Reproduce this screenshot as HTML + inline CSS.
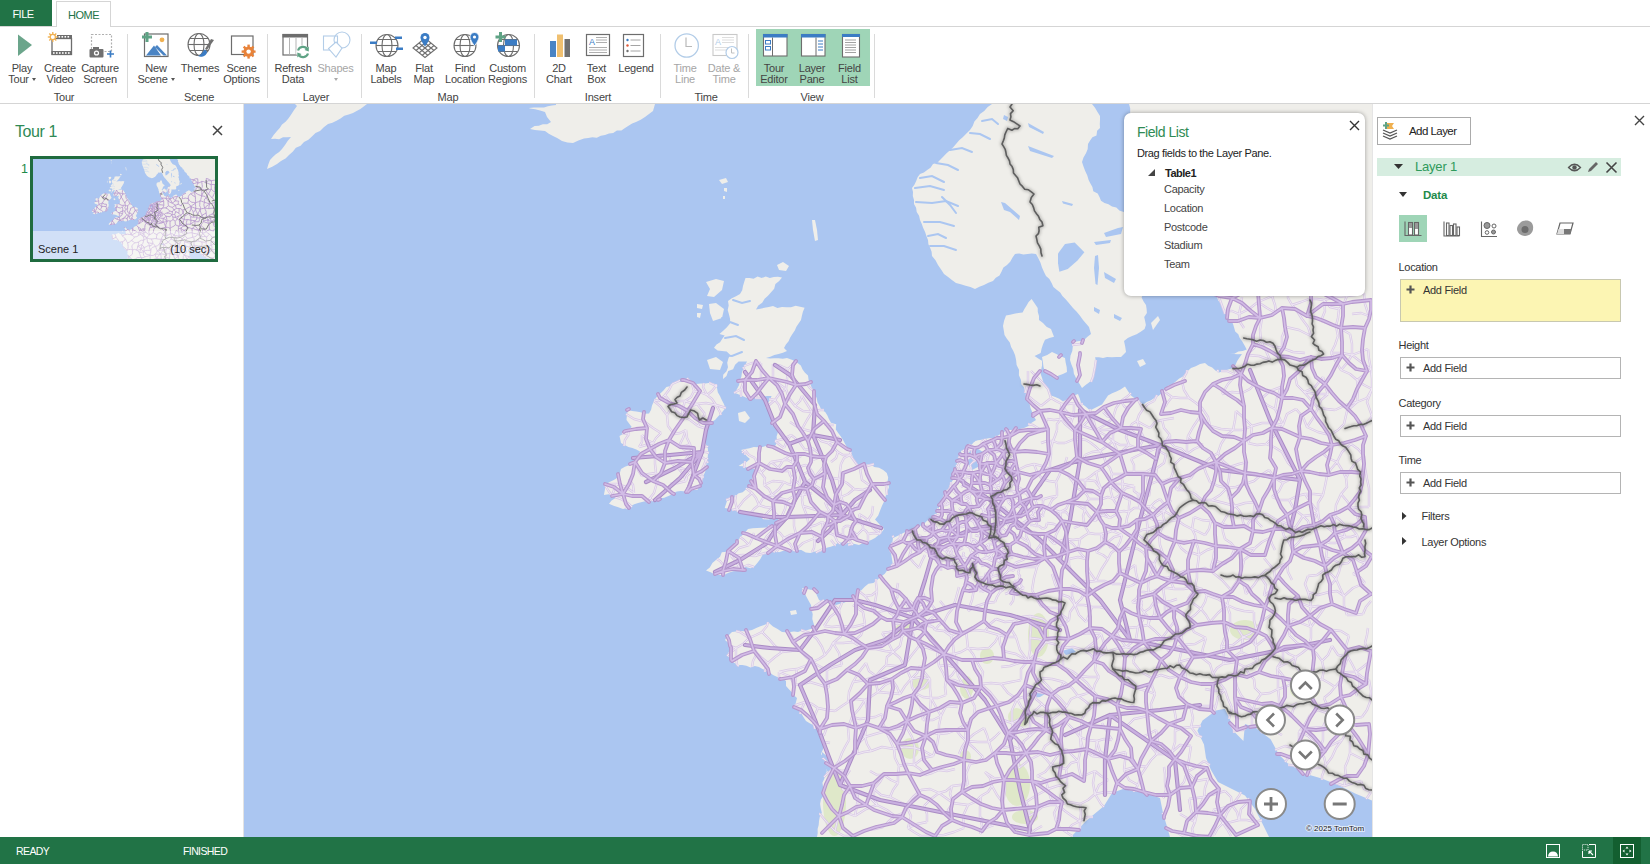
<!DOCTYPE html>
<html><head><meta charset="utf-8">
<style>
*{box-sizing:border-box;margin:0;padding:0}
html,body{width:1650px;height:864px;overflow:hidden;background:#fff;font-family:"Liberation Sans",sans-serif;color:#444}
#tabs{position:absolute;left:0;top:0;width:1650px;height:27px;border-bottom:1px solid #d5d5d5}
#file{position:absolute;left:0;top:0;width:52px;height:26px;padding-right:6px;background:#217346;color:#fff;font-size:11px;letter-spacing:-0.5px;line-height:28px;text-align:center}
#home{position:absolute;left:56px;top:1px;width:55px;height:26px;border:1px solid #d5d5d5;border-bottom:none;background:#fff;color:#217346;font-size:11px;letter-spacing:-0.5px;line-height:26px;text-align:center}
.t{position:absolute;width:100px;text-align:center;font-size:11px;line-height:11px;letter-spacing:-0.2px;color:#444;white-space:nowrap}
.dd{display:inline-block;width:0;height:0;border-left:2.5px solid transparent;border-right:2.5px solid transparent;border-top:3px solid #555;vertical-align:2px;margin-left:3px}
.dis .dd{border-top-color:#aaa}
.dis{color:#a6a6a6}
.sep{position:absolute;top:34px;width:1px;height:64px;background:#dadada}
#left{position:absolute;left:0;top:104px;width:244px;height:733px;background:#fff;border-right:1px solid #e3e3e3}
#map{position:absolute;left:244px;top:104px;width:1128px;height:733px;background:#abc6f1;overflow:hidden}
#right{position:absolute;left:1372px;top:104px;width:278px;height:733px;background:#fff;border-left:1px solid #e5e5e5}
#status{position:absolute;left:0;top:837px;width:1650px;height:27px;background:#217346;color:#fff;font-size:11px}
</style></head><body>
<div id="tabs"><div id="file">FILE</div><div id="home">HOME</div></div>
<div style="position:absolute;left:0;top:103px;width:1650px;height:1px;background:#d5d5d5"></div>
<div style="position:absolute;left:756px;top:29px;width:114px;height:57px;background:#9fd5b7"></div>
<svg style="position:absolute;left:0;top:0" width="900" height="104" viewBox="0 0 900 104">
<!-- Play -->
<polygon points="18,34.5 32,45 18,56" fill="#6ba58b"/>
<!-- Create Video -->
<g fill="none" stroke="#6d6d6d" stroke-width="1.3">
<rect x="52" y="38.5" width="19.5" height="16"/>
</g>
<rect x="57" y="35" width="15" height="3.5" fill="#6d6d6d"/><rect x="51.5" y="51" width="20.5" height="3.8" fill="#6d6d6d"/>
<g fill="#fff"><rect x="58.5" y="36" width="1.6" height="1.6"/><rect x="61.5" y="36" width="1.6" height="1.6"/><rect x="64.5" y="36" width="1.6" height="1.6"/><rect x="67.5" y="36" width="1.6" height="1.6"/>
<rect x="53" y="52.2" width="1.6" height="1.6"/><rect x="56" y="52.2" width="1.6" height="1.6"/><rect x="59" y="52.2" width="1.6" height="1.6"/><rect x="62" y="52.2" width="1.6" height="1.6"/><rect x="65" y="52.2" width="1.6" height="1.6"/><rect x="68" y="52.2" width="1.6" height="1.6"/></g>
<g stroke="#f0b050" stroke-width="1.3"><line x1="52.8" y1="32" x2="52.8" y2="42"/><line x1="47.8" y1="37" x2="57.8" y2="37"/><line x1="49.3" y1="33.5" x2="56.3" y2="40.5"/><line x1="49.3" y1="40.5" x2="56.3" y2="33.5"/></g>
<circle cx="52.8" cy="37" r="2.6" fill="#fff" stroke="#f0b050" stroke-width="1.2"/>
<!-- Capture Screen -->
<rect x="91.5" y="34.5" width="20" height="17" fill="none" stroke="#b0b0b0" stroke-width="1.2" stroke-dasharray="2 1.5"/>
<rect x="89.5" y="49" width="14" height="8.6" rx="1" fill="#707070"/><rect x="93" y="47" width="6" height="3" fill="#707070"/>
<circle cx="96.5" cy="53" r="2.6" fill="#fff"/><circle cx="96.5" cy="53" r="1.3" fill="#707070"/>
<path d="M110.5 50.5v7M107 54h7" stroke="#3b7cc4" stroke-width="1.6"/>
<!-- New Scene -->
<rect x="144.5" y="34" width="23.5" height="22.5" fill="#fff" stroke="#6d6d6d" stroke-width="1.2"/>
<path d="M146 55.5 L154 45.5 L161 55.5Z M155 47 L157 45 L167 55.5 L163.5 55.5Z" fill="#4a84c4"/>
<circle cx="162" cy="39.8" r="2.4" fill="#f0b050"/>
<path d="M147 32v10M142 37h10" stroke="#5fa385" stroke-width="3"/>
<!-- Themes -->
<g fill="none" stroke="#6d6d6d" stroke-width="1.1"><circle cx="199" cy="44.5" r="11"/><ellipse cx="199" cy="44.5" rx="5" ry="11"/><line x1="188" y1="44.5" x2="210" y2="44.5"/><path d="M190 38.5h18M190 50.5h18"/></g>
<path d="M214 40 L207 50 L205 49 L211 39Z" fill="#707070"/>
<path d="M205 49.5 C203 50,203 54,198 56 C201 58,207 56,207 51.5Z" fill="#3b7cc4"/>
<!-- Scene Options -->
<rect x="231.5" y="36" width="21.5" height="18.5" fill="none" stroke="#6d6d6d" stroke-width="1.2"/>
<circle cx="248.6" cy="51.6" r="5.2" fill="#e8833a"/>
<g stroke="#e8833a" stroke-width="2.4"><line x1="248.6" y1="44.6" x2="248.6" y2="58.6"/><line x1="241.6" y1="51.6" x2="255.6" y2="51.6"/><line x1="243.7" y1="46.7" x2="253.5" y2="56.5"/><line x1="243.7" y1="56.5" x2="253.5" y2="46.7"/></g>
<circle cx="248.6" cy="51.6" r="2.2" fill="#fff"/>
<!-- Refresh Data -->
<rect x="283" y="34.5" width="24.5" height="20.5" fill="#fff" stroke="#6d6d6d" stroke-width="1.2"/>
<rect x="282.5" y="34" width="25.5" height="3.5" fill="#6d6d6d"/>
<path d="M289.5 37.5v17M296 37.5v17M302 37.5v17" stroke="#b5b5b5" stroke-width="1"/>
<circle cx="303" cy="52" r="6.8" fill="#fff"/>
<path d="M298 50.5 A5.2 5.2 0 0 1 307.5 49.5 M308 53.5 A5.2 5.2 0 0 1 298.5 54.5" fill="none" stroke="#5fa385" stroke-width="2.2"/>
<path d="M308.8 46.5 L308.8 51.5 L304.5 50Z M297.3 57.5 L297.3 52.5 L301.5 54Z" fill="#5fa385"/>
<!-- Shapes (disabled) -->
<g fill="none" stroke="#b3cde8" stroke-width="1.1"><rect x="323.5" y="36" width="14" height="14"/><circle cx="342" cy="40" r="8"/><path d="M336 42 L342 48 L336 57 L328.5 48.5Z" fill="#fff"/></g>
<!-- Map Labels -->
<g fill="none" stroke="#6d6d6d" stroke-width="1.1"><circle cx="387" cy="45.5" r="11"/><ellipse cx="387" cy="45.5" rx="5" ry="11"/><line x1="376" y1="45.5" x2="398" y2="45.5"/><path d="M378 39.5h18M378 51.5h18"/></g>
<g fill="#3b7cc4"><rect x="395" y="36.5" width="7" height="2.5"/><rect x="370" y="41.5" width="7" height="2.5"/><rect x="396" y="47.5" width="7" height="2.5"/></g>
<!-- Flat Map -->
<g fill="#fff" stroke="#707070" stroke-width="1.1"><path d="M413 48 L425 38 L437 48 L425 57.5Z"/><path d="M416 45.5 L428 55.5 M419 43 L431 53 M422 40.5 L434 50.5 M428 40.5 L416 50.5 M431 43 L419 53 M434 45.5 L422 55.5" fill="none"/></g>
<path d="M425 33 a4.5 4.5 0 0 1 4.5 4.5 c0 3-4.5 9-4.5 9 s-4.5-6-4.5-9 a4.5 4.5 0 0 1 4.5-4.5z" fill="#3b7cc4"/><circle cx="425" cy="37.5" r="1.7" fill="#fff"/>
<!-- Find Location -->
<g fill="none" stroke="#6d6d6d" stroke-width="1.1"><circle cx="465" cy="45.5" r="11"/><ellipse cx="465" cy="45.5" rx="5" ry="11"/><line x1="454" y1="45.5" x2="476" y2="45.5"/><path d="M456 39.5h18M456 51.5h18"/></g>
<path d="M474.5 32.5 a4.5 4.5 0 0 1 4.5 4.5 c0 3-4.5 9-4.5 9 s-4.5-6-4.5-9 a4.5 4.5 0 0 1 4.5-4.5z" fill="#3b7cc4" stroke="#fff" stroke-width="0.8"/><circle cx="474.5" cy="37" r="1.6" fill="#fff"/>
<!-- Custom Regions -->
<g fill="none" stroke="#6d6d6d" stroke-width="1.1"><circle cx="508.5" cy="45.5" r="11"/><ellipse cx="508.5" cy="45.5" rx="5" ry="11"/><line x1="497.5" y1="45.5" x2="519.5" y2="45.5"/><path d="M499.5 39.5h18M499.5 51.5h18"/></g>
<rect x="505" y="39.5" width="12" height="6" fill="#3b7cc4"/><rect x="498" y="45.5" width="7" height="6" fill="#3b7cc4"/>
<path d="M500.5 32v10M495.5 37h10" stroke="#5fa385" stroke-width="3"/>
<!-- 2D Chart -->
<rect x="550" y="41" width="6" height="16" fill="#4a84c4"/><rect x="557" y="34.5" width="6" height="22.5" fill="#f0c070"/><rect x="564.5" y="39" width="5.5" height="18" fill="#707070"/>
<!-- Text Box -->
<rect x="586.5" y="34.5" width="23" height="21" fill="#fff" stroke="#6d6d6d" stroke-width="1.2"/>
<text x="589" y="45" font-size="9" fill="#3b7cc4" font-family="Liberation Sans">A</text>
<path d="M596 37.5h11M596 40h11M596 42.5h11M589 47.5h18M589 50h18M589 52.5h18" stroke="#9a9a9a" stroke-width="0.8"/>
<!-- Legend -->
<rect x="623.5" y="34.5" width="20" height="22" fill="#fff" stroke="#6d6d6d" stroke-width="1.2"/>
<circle cx="627.5" cy="40" r="1.2" fill="#3b7cc4"/><circle cx="627.5" cy="45.5" r="1.2" fill="#e05a3a"/><circle cx="627.5" cy="51" r="1.2" fill="#707070"/>
<path d="M630.5 40h10M630.5 45.5h10M630.5 51h10" stroke="#9a9a9a" stroke-width="0.9"/>
<!-- Time Line -->
<circle cx="686.7" cy="45.5" r="11.7" fill="none" stroke="#b3cde8" stroke-width="1.3"/>
<path d="M686 37.5v9h6" fill="none" stroke="#b9b9b9" stroke-width="1.2"/>
<!-- Date & Time -->
<rect x="713" y="34.5" width="24" height="21" fill="#fff" stroke="#c9c9c9" stroke-width="1.1"/>
<text x="715" y="45" font-size="9" fill="#b3cde8" font-family="Liberation Sans">A</text>
<path d="M722 37.5h12M722 40h12M722 42.5h12M715 47.5h14M715 50h12" stroke="#d5d5d5" stroke-width="0.8"/>
<circle cx="732" cy="52.5" r="6" fill="#fff" stroke="#b3cde8" stroke-width="1.2"/>
<path d="M731.5 48.5v4.5h3" fill="none" stroke="#c0c0c0" stroke-width="1"/>
<!-- Tour Editor -->
<rect x="763.5" y="34.5" width="23.5" height="21.5" fill="#fff" stroke="#6d6d6d" stroke-width="1.1"/>
<rect x="763" y="34" width="24.5" height="3.5" fill="#3b7cc4"/>
<path d="M772.5 37.5v18.5" stroke="#6d6d6d" stroke-width="1"/>
<rect x="765.5" y="40.5" width="5" height="3.5" fill="none" stroke="#3b7cc4" stroke-width="1"/><rect x="765.5" y="46.5" width="5" height="3.5" fill="none" stroke="#3b7cc4" stroke-width="1"/>
<!-- Layer Pane -->
<rect x="801.5" y="34.5" width="23.5" height="21.5" fill="#fff" stroke="#6d6d6d" stroke-width="1.1"/>
<rect x="801" y="34" width="24.5" height="3.5" fill="#3b7cc4"/>
<path d="M816 37.5v18.5" stroke="#6d6d6d" stroke-width="1"/>
<path d="M818 41h5M818 44h5M818 47h5M818 50h5" stroke="#3b7cc4" stroke-width="1"/>
<!-- Field List -->
<rect x="842.5" y="34.5" width="17" height="22.5" fill="#fff" stroke="#6d6d6d" stroke-width="1.1"/>
<rect x="842" y="34" width="18" height="3" fill="#3b7cc4"/>
<path d="M845 40h11M845 42.5h11M845 45h11M845 47.5h11M845 50h11M845 52.5h11" stroke="#8a8a8a" stroke-width="0.8"/>

</svg>
<div class="sep" style="left:127px"></div>
<div class="sep" style="left:267px"></div>
<div class="sep" style="left:361px"></div>
<div class="sep" style="left:534px"></div>
<div class="sep" style="left:660px"></div>
<div class="sep" style="left:748px"></div>
<div class="sep" style="left:874px"></div>
<div class="t" style="left:-28px;top:62.5px">Play<br>Tour<span class="dd"></span></div>
<div class="t" style="left:10px;top:62.5px">Create<br>Video</div>
<div class="t" style="left:50px;top:62.5px">Capture<br>Screen</div>
<div class="t" style="left:106px;top:62.5px">New<br>Scene<span class="dd"></span></div>
<div class="t" style="left:150px;top:62.5px">Themes<br><span class="dd" style="margin-left:0"></span></div>
<div class="t" style="left:191.5px;top:62.5px">Scene<br>Options</div>
<div class="t" style="left:243px;top:62.5px">Refresh<br>Data</div>
<div class="t dis" style="left:285.5px;top:62.5px">Shapes<br><span class="dd" style="margin-left:0"></span></div>
<div class="t" style="left:336px;top:62.5px">Map<br>Labels</div>
<div class="t" style="left:374px;top:62.5px">Flat<br>Map</div>
<div class="t" style="left:415px;top:62.5px">Find<br>Location</div>
<div class="t" style="left:457.5px;top:62.5px">Custom<br>Regions</div>
<div class="t" style="left:509px;top:62.5px">2D<br>Chart</div>
<div class="t" style="left:546.5px;top:62.5px">Text<br>Box</div>
<div class="t" style="left:586px;top:62.5px">Legend<br></div>
<div class="t dis" style="left:635px;top:62.5px">Time<br>Line</div>
<div class="t dis" style="left:674px;top:62.5px">Date &amp;<br>Time</div>
<div class="t" style="left:724px;top:62.5px">Tour<br>Editor</div>
<div class="t" style="left:762px;top:62.5px">Layer<br>Pane</div>
<div class="t" style="left:799.5px;top:62.5px">Field<br>List</div>
<div class="t" style="left:14px;top:91.5px">Tour</div>
<div class="t" style="left:149px;top:91.5px">Scene</div>
<div class="t" style="left:266px;top:91.5px">Layer</div>
<div class="t" style="left:398px;top:91.5px">Map</div>
<div class="t" style="left:548px;top:91.5px">Insert</div>
<div class="t" style="left:656px;top:91.5px">Time</div>
<div class="t" style="left:762px;top:91.5px">View</div>
<div id="left">
<div style="position:absolute;left:15px;top:18px;font-size:16px;line-height:20px;letter-spacing:-0.4px;color:#2f8a55">Tour 1</div>
<svg style="position:absolute;left:212px;top:21px" width="11" height="11" viewBox="0 0 11 11"><path d="M1 1L10 10M10 1L1 10" stroke="#444" stroke-width="1.5"/></svg>
<div style="position:absolute;left:21px;top:58px;font-size:12.5px;line-height:14px;color:#1e8a4a">1</div>
<div style="position:absolute;left:30px;top:52px;width:188px;height:106px;border:3px solid #1f6b3f;overflow:hidden;background:#abc6f1">
<svg  width="182" height="100" viewBox="240 171 1125 612" preserveAspectRatio="none" style="display:block;position:absolute;left:0;top:0">
<rect x="244" y="104" width="1128" height="733" fill="#abc6f1"/>
<polygon points="295,104 367,104 363.7,106.6 360.4,109.1 356.6,110.9 353,113 348.7,114.5 344.3,115.8 340.5,118.4 336.5,120.7 332.4,122.8 328,124 323.8,127.3 320,131 315.5,133 311.9,136.4 308.4,139.8 304,142 300.6,145.7 295.9,147.8 292.7,151.7 289,155 285.5,158.6 281,161 277,164 272.2,166.8 267,169 268.3,164.4 270,160 272.8,157.1 275.8,154.2 279.2,151.9 282,149 285,145 287.8,140.8 291,137 287,137.2 283,137.3 279.1,139.2 275,138.8 271,139 273.8,134.8 277,131 279.7,127.9 282,124.6 285.3,122 288,119 291,114.7 293.9,110.3 297,106" fill="#efeeea"/>
<polygon points="529,108 534,107.4 539,107.6 544,107.6 547.9,106.3 551.9,105.4 556,105 556,104 655,104 653,111 649,113.9 645,117 640.7,119.8 636,122 632.1,123.6 628.5,125.8 625,128 621.4,130.6 616.9,130.6 613.2,132.9 609,133.6 605,135 600.8,135.7 596.8,137.7 592.4,137.2 588.2,138 584,138.5 578.4,140.4 573,143 567.4,142.4 562,141 557.6,138.3 553,136 548.8,133.8 545,131 540,130.5 534.9,130 530,129 534.5,126 538.8,125.7 542.8,124.3 547.2,124.2 551,122 547,117 545,112 540.1,110.5 535.1,109.3 530,108.5" fill="#efeeea"/>
<polygon points="992,104 987.7,107 984.2,110.9 980,114 977.5,118 974.4,121.6 972.7,126.1 970,130 966.4,133.4 963,137 959.2,140.2 956,144 953,147.4 949.7,150.5 946.3,153.5 943.2,156.8 940,160 937,162.9 933,164.1 930.5,167.8 927.2,170.1 923.9,172.4 920,174 917.6,177.3 916.2,181.1 914.4,184.7 912,188 913,191.9 912.8,196 914,199.9 914,204 916.1,207.8 916.7,212.1 919.1,215.8 920,220 921.8,223.9 923.2,228 925.1,231.9 926.4,236 928,240 928.4,244.2 930.2,247.9 931.6,251.8 932,256 935.5,260.2 938,265 941.1,269.5 944,274 948.1,276.9 951.9,280.1 956,283 960.8,284.2 965.6,285.7 970.4,287.1 975,289 979.4,286.7 984,285.1 988.4,282.8 993,281 995.8,277.8 999.5,275.4 1001.6,271.6 1003.4,267.5 1007,265 1010.2,261.7 1012.4,257.8 1015,254 1019.2,253.4 1023.4,254.6 1027.6,254 1031.8,253.6 1036,254 1038.3,258.3 1040.5,262.8 1042,267.5 1044,272 1046,276 1049.4,279.1 1051.6,283 1053.4,287.1 1057,290 1060.2,292.6 1062.4,296.1 1065.4,298.9 1068,302 1073,308 1076.7,311.7 1080,315.7 1083,320 1086,323.5 1089,327 1091,334 1087.2,336.9 1083.8,340.2 1080,343 1078,347.5 1076,352 1079.6,353.9 1083.3,355.4 1087,357 1091,357.5 1095,357.3 1099,357.3 1103,358.1 1107,357 1111.7,357.3 1116.3,357.1 1121,357 1126,352 1125.2,346.5 1124,341 1127.8,338 1132.1,336 1136.6,334.3 1140.7,331.8 1144.6,329 1145.9,325.1 1145.1,321 1144.2,316.9 1146.9,313.1 1146.6,309 1146,305 1143.6,301.4 1141.6,297.5 1143.4,293.1 1141.4,288.9 1138.6,284.6 1140.4,280.2 1140.1,275.9 1143,271.5 1139.5,267.3 1140.1,263 1139.9,258.6 1139.6,254.3 1140,250 1137.4,246.6 1137,242.3 1136.4,238.1 1134.3,234.5 1130.9,231.4 1129.1,227.8 1128.9,223.3 1126.4,219.9 1124.9,216.1 1124,212 1119.7,210.7 1116.3,207.6 1112,206.4 1108.5,204.2 1104.5,203 1101,200.8 1099.5,197 1097.7,193.4 1093.3,191.3 1092.4,187.1 1090.4,183.6 1088.6,180 1087.3,175.4 1085.2,171 1083.5,166.5 1082,162 1083.5,157.5 1086,153.3 1087.7,148.9 1088,144 1090.1,140.6 1092.4,137.3 1096.5,135.4 1097.1,130.8 1100,128 1099.8,124 1100,120 1100,116 1097.5,111.9 1095,107.8 1092,104" fill="#efeeea"/>
<polygon points="1129,104 1372,104 1372,837 817,837 817.7,833 817.6,828.9 818.7,825 819,821 819.8,816.7 821.8,812.7 820.7,808.1 820.1,803.7 820.9,799.4 823.7,795.5 823,791 823.1,786.9 822.4,782.7 824.2,778.9 825.3,775 826.9,771.1 825.6,766.9 827,763 824.2,758.4 821,754 823.3,748.6 825,743 823.8,738.5 823,734 819.5,731.5 816.9,727.9 813.5,725.3 809.7,723.2 806,721 803.4,717.1 801,713.1 797.7,709.8 795,706 796,702 797,698 793.9,695.3 791.5,692 788.7,689 786,686 786,681 782.2,677.9 777.3,677.1 773,675 769.8,672.5 766.3,670.4 762.5,669.1 759,667 754.9,665.9 750.5,667.6 746.4,665.7 742.3,664.9 738,665 733.6,662.5 730.3,658.7 727,655 729.8,650.7 732,646 728.5,643.1 725,640 728.2,635.8 732,632 736,631.4 740,630.9 744,631.2 748,630.7 752,630 756.2,628.1 760.4,626.2 764.7,624.7 769,623 773,626.5 777.6,629.1 782,632 786,632.3 790,631.9 794,631.4 798,632 802.2,630.6 806.6,630.3 810.8,629.1 815,628 813.6,623.5 812.3,619 812.7,614.2 811.6,609.6 811,605 808.6,600.8 806.3,596.6 804.4,592.2 802,588 806.3,588.8 810.6,589.7 815,590 816.7,595.1 819,600 823.1,601.9 827.4,602.9 831.8,603.6 836,605 840,603.7 844.1,602.7 848,601.1 852,600 854.6,596.1 857,592 861.4,590.3 864.7,586.7 868.4,583.7 873.4,583.1 877,580 880.8,576.8 884.8,573.8 887.7,569.7 892,567 892.6,562.7 891.9,558.5 891.2,554.3 891,550 891.5,546 892.4,542 893,538 896.8,536.3 900.5,534.6 904.1,532.6 908.5,532.3 912,530 916,528 920,526 924,524.1 927.3,520.6 932,520 934.6,516.6 937,513 938.3,508.9 939.9,504.9 941.5,501 943,497 945,492.5 948.4,488.8 950.1,484 953,480 953.5,475.6 954.6,471.4 956.1,467.3 957,463 959.7,458.1 962,453 964.8,450 967.5,447 971.4,445.1 974,442 978.1,440.5 982.5,441.2 986.6,439.6 990.7,438.4 995,438 998.8,435.1 1003.1,432.8 1007,430 1011.3,430 1015.5,428.9 1019.8,429 1024,428 1028.5,426.1 1032,422.6 1036,420 1033.6,416.1 1032.2,412 1030.5,407.9 1029.5,403.5 1028,399.4 1027,395 1024.9,391.5 1024.2,387.4 1021.3,384.2 1021,380 1018.9,375.2 1019,369.7 1016.6,365 1016.1,360 1015,355 1013.2,350.8 1011.1,346.9 1009.8,342.4 1006.9,338.8 1004.5,335 1003.8,330.5 1003,326 1004.1,320.7 1006,315.6 1010.1,314.8 1014.2,313.7 1018.4,313 1022.6,312.6 1024.4,308.9 1026.6,305.5 1028.6,302 1031.6,299 1034.7,303.4 1037.7,308 1037.8,312 1039,315.9 1039,320 1043,322.9 1046.5,326.7 1051,329 1052.5,332.9 1054,336.7 1049.4,337.9 1045,339.7 1043.1,344 1041.6,348.4 1040.7,353 1034.6,356 1038.2,358.6 1042,360.8 1042.1,365.3 1041.2,369.6 1040.7,374 1042.3,378.7 1043.7,383.4 1046.7,387.1 1048.7,391.3 1051,395.4 1055.2,396.9 1059.3,398.8 1063,401.4 1066.8,399.6 1070.5,397.7 1074.1,395.5 1078,394 1079.8,398.4 1081,403 1085.6,406.6 1090,410.5 1093.9,408.4 1097.9,406.4 1102,404.5 1105,399.9 1108,395.4 1112.1,393.2 1116.4,391.5 1120.5,389.4 1125,386.4 1127.9,391 1131,395.4 1134.9,398.6 1139.2,401.2 1143,404.5 1146.8,402 1151,400.3 1154.7,397.8 1158.7,395.7 1162.2,392.8 1164.8,388.8 1168.2,385.8 1172.6,384 1175.8,381.5 1178.9,378.8 1182.5,376.8 1185.2,373.7 1188,370.8 1191,368 1195.7,366.3 1200.1,364.1 1205,363 1208.2,365.8 1212.2,367.5 1215.4,370.4 1219,372.6 1223.6,371.1 1228.2,369.6 1232.8,368 1235.5,364.7 1237.2,360.9 1239.5,357.4 1242,354 1238,354.3 1234,354.1 1230,354 1234.4,353.7 1238.3,351.5 1242.7,351.1 1246.7,349.4 1244.6,345.4 1242.3,341.6 1239.7,338 1238.3,334.2 1235.2,331.4 1234.1,327.4 1232.9,323.4 1229.5,320.7 1228,317 1225.7,312.8 1223,308.8 1221.4,304.3 1218.2,300.6 1216.6,296 1216.2,290.9 1210.9,289.8 1206.6,287.8 1208.6,280.9 1204.9,278.5 1201.6,275.7 1199,272.4 1195.2,270.1 1192.8,266.7 1191.5,262.3 1189.1,258.8 1186.5,255.5 1182.9,253.1 1180,250 1176.8,247.4 1174.7,244 1174.2,239.3 1172.2,235.8 1167,234.8 1164.3,231.8 1164.4,226.6 1161.1,224.1 1158.5,221 1153,220.3 1151.9,216.1 1149.2,213.1 1147.8,209.1 1142.5,208.3 1144.4,201.6 1140,200 1139.5,195.7 1138.8,191.5 1135.5,187.9 1136.3,183.3 1137.4,178.7 1132.1,175.5 1134,170.7 1133.7,166.4 1130.7,162.7 1132.1,158.1 1129.4,154.3 1129,150 1130.7,145.8 1129.7,141.6 1129.3,137.5 1131.8,133.3 1130.1,129.1 1130.8,124.9 1127.4,120.7 1128.1,116.5 1130.2,112.4 1130.2,108.2" fill="#efeeea"/>
<polygon points="745.5,278 749.6,277.9 753.6,278.7 757.6,276.6 761.7,278 765.8,276.4 769.8,278 773.9,277 777.9,276.8 782,277.4 779.2,281 775.4,284 774.2,288.8 771.1,292.3 768,295.7 764.6,298.8 762.2,302.8 758.3,305.4 756,309.5 760.3,308.7 764.5,307.8 768.8,307.1 773,306 777.4,307.9 782,307.1 786.5,307.3 791,307.3 795.7,305.8 800.1,306.7 804.6,307.8 802.9,311.7 801.9,315.8 801,320 798.6,323.4 796.4,326.8 794.8,330.6 792.4,334 790.2,337.4 788.6,341.2 785.9,344.4 784,348 787,351 782.9,352.8 778.6,353.9 774.3,354.9 770.3,356.8 766,358 770.2,358.4 774.4,358.3 778.6,358.2 782.8,358.8 787,358 792.5,360 797.6,363 800.8,365.6 802.6,369.4 805,372.7 808,375.5 808.7,380.6 810.8,385.3 812.7,390 814,394.2 816.6,397.8 817.5,402.2 819.6,406 821.3,409.8 825.2,412 827.4,415.4 829,419.3 831,422.8 836.2,424.2 835.8,429.4 838,432.8 840.5,436 842.9,439.7 844.9,443.6 847.1,447.4 850.3,450.7 852,454.8 853.4,458.6 855.2,462.2 856.7,466 861.3,464.9 866,464.8 870.6,464 874.2,467 879.1,467.8 883.2,469.9 886.8,473 888.2,477.6 887.4,482.5 889,487 887.4,491.7 885.5,496.4 884.2,501.2 882,505.7 880.1,510.5 878.2,515.4 875,519.6 878,522.8 880.9,525.9 884,529 881.5,532.5 878.3,535.3 875,538 871.2,540.1 867,541.5 862.9,543.1 859,545 854.9,543.9 850.7,543.3 846.5,543 842.3,542.4 838,542.8 834.6,545.3 830.8,546.8 826.6,547.7 823.2,550 819.6,552 815,551.6 810.3,552.9 805.7,552.4 801.3,549.9 796.6,549.8 792,549.7 787.7,550.3 783.4,550.8 779.1,552.2 774.6,550.9 770.3,550.8 766,552 762.5,554.9 760.4,559 757.7,562.6 754.8,566 750.7,568.3 745.8,567 741.3,567.6 737.6,571.1 733,571.3 728.7,572.7 724.5,574.5 720,575 715,574.6 710.6,572.2 706,570.6 709.8,567.4 712.4,563 716.2,559.8 720,556.7 721.8,552.3 726.9,551.8 729.8,548.6 732.8,545.6 736,542.8 738.9,539.3 741.7,535.7 745,532.4 748,529 752.6,528.3 757.2,528 761.8,527.8 766.4,527.5 771.1,528.3 775.6,526.6 776.6,522.5 778.6,518.9 780,515 776.3,516.7 772.6,518.5 768.7,519.6 763.5,519.2 759.5,515.8 754.5,515 750,512.7 745.7,512.5 741.6,510.8 737.2,511.2 733.1,509.6 728.9,508.8 724.7,508 727,501 731.2,499.2 735.1,497 738.1,493.4 742.7,492.3 746.1,489.3 750,487 751.3,482.5 752.4,478 754.2,473.6 755,469 750.8,468.9 746.8,467.4 742.8,466.2 738.6,466 742.3,463.6 746.6,462 750,459 746.8,456.2 744.1,452.9 741,450 745.3,448.9 749.6,448.2 753.8,447.1 758.2,447.2 762.6,447.1 766.8,445.8 771.4,447 775.6,445.5 777,441.1 776.6,436.4 778,432 776,427.2 773.4,422.6 771,418 769.4,414 768.5,409.6 766,406 769.2,401.2 771.6,396 767.5,396.1 763.4,396.5 759.4,398.6 755.2,396.8 751.1,398.2 747,398 743,396.3 739,394.6 735,393 737,389 739.1,385 739.8,380.6 741.4,376.5 742,372 744.4,366.8 747,361.6 742.8,361.5 738.6,361.6 735.1,364.7 733.1,369.2 728.2,371.1 726.5,375.9 723,379 723.2,374.7 726.5,371.2 728,367.3 727.2,362.7 728.4,358.6 730,354.7 726.7,351.5 722,351.1 717.6,350.4 714,347.7 716.5,344.5 720.1,342.3 722.3,338.8 724.7,335.6 719.5,334 723.2,330.7 726.9,327.3 730,323.4 730.1,318.9 729,314.4 727.7,310 728.7,305.4 728,300.9 731.8,298.2 736,296.3 740,294 742.2,290.3 743,286.1 744.2,282" fill="#efeeea"/>
<polygon points="656,397.8 659.5,394.2 663.2,390.8 666.4,387 670.7,385.9 674.3,382.9 678.8,382.1 683.3,381.4 687,378.7 691.4,381.5 696,383.9 700.8,383.5 705.5,383.5 710.2,382.7 715,383.9 717,387.8 717.8,392.2 720,396 721.8,400 723.9,403.9 725.4,408 722.1,412.2 718.5,416 715,420 709.8,422.8 704.6,425.6 705.5,430.1 706.4,434.7 705.8,439.4 705.6,444 707.9,448.4 708,453 707.7,457.7 706.4,462.3 706.3,467 705.1,471.9 703,476.4 701,481 699.4,485.4 697.6,489.8 693.4,490 689.3,490.7 685.2,491.4 680.9,491 676.8,491.5 672.7,493.9 668.5,495.9 664.2,497.8 659.4,498.5 655,499 650.9,501.2 646.3,500.9 642,502 638.1,503 634.2,504.3 630.6,506.3 626.9,507.9 623,509 618.3,507.2 613.6,505.7 609,503.7 611.6,500.5 615.2,498.2 617.8,495 613.2,495.4 608.5,494.3 603.9,495 604.9,489.8 605.6,484.6 609.6,482.1 613.8,480.1 617.8,477.6 619.7,473.4 621,469 624.9,466.7 629.1,465.2 633.4,463.8 635.2,459.5 637.9,455.7 640,451.6 636.3,449.6 632.4,448.1 628.4,446.9 624.7,445 621,443 619.5,436 623.9,433.4 627.9,430.4 631.7,427 629.1,423.5 626.5,420 626.9,414.9 628,410 632.1,411.1 636.4,411.5 640.6,412.2 644.6,413.8 649,413.4 651.1,409.7 652,405.4 653.8,401.5" fill="#efeeea"/>
<polygon points="1042,357 1047.2,354.9 1052,352 1056.3,354.1 1060.5,356.3 1065,358 1065.7,362.7 1066.7,367.3 1067,372 1062.9,373.9 1058.7,375.4 1055,378 1050.1,374.9 1045,372 1043.5,367.1 1042.9,362" fill="#efeeea"/>
<polygon points="1074,342 1078,341.2 1082,340.8 1086,340 1089.8,343.3 1094,346 1093.3,350.9 1094.8,355.5 1095.7,360.2 1096,365 1094.6,370 1093.3,375 1092,380 1088.7,382.8 1085.3,385.3 1082,388 1079,383 1076,378 1073.9,373.7 1073.3,368.9 1071.4,364.5 1070,360 1070.5,355.4 1072.3,351.1 1072.8,346.5" fill="#efeeea"/>
<polygon points="1137,361 1143,359 1146,364 1140,367" fill="#efeeea"/>
<polygon points="706,282 716,279 724,281 722,290 714,297 707,296 710,289" fill="#efeeea"/>
<polygon points="709,304 716,303 724,309 722,318 713,321 710,313" fill="#efeeea"/>
<polygon points="697,304 703,305 702,309 697,308" fill="#efeeea"/>
<polygon points="697,313 701,313 700,318 697,317" fill="#efeeea"/>
<polygon points="707,360 716,357 723,362 720,370 710,369" fill="#efeeea"/>
<polygon points="726,338 733,336 736,342 730,346 725,344" fill="#efeeea"/>
<polygon points="777,265 783,262 789,266 786,271 779,270" fill="#efeeea"/>
<polygon points="812,220 815,220 817,230 818,240 815,241 813,230" fill="#efeeea"/>
<polygon points="719,180 726,178 728,182 722,184" fill="#efeeea"/>
<polygon points="724,188 727,188 727,192 724,191" fill="#efeeea"/>
<polygon points="723,196 725,196 725,199 723,199" fill="#efeeea"/>
<polygon points="738,413 745,411 750,418 745,423 739,421" fill="#efeeea"/>
<polygon points="790,611 796,610 797,614 791,615" fill="#efeeea"/>
<polygon points="961,451 969,447 971,449 962,455" fill="#efeeea"/>
<polygon points="975,441 990,438 990,441 976,444" fill="#efeeea"/>
<polygon points="1004,434 1018,432 1017,435 1005,437" fill="#efeeea"/>
<polygon points="1151,323 1158,316 1160,320 1153,330" fill="#efeeea"/>
<polygon points="1216,710.4 1202.5,720.6 1197.4,730.8 1204,744.5 1206,758 1211,770 1218,782 1231.5,788.7 1245,795.5 1255,809 1262,822.7 1269,837 1372,837 1372,800.6 1355.7,793.8 1338.7,785.3 1321.6,778.5 1304.6,773.4 1287.6,763.2 1279,754.7 1270.6,739.3 1255.3,727.4 1245,724 1243.4,741 1235,732.5 1229.8,719 1224.7,708.7" fill="#abc6f1"/>
<polygon points="1071,837 1086,821 1104,806 1112,793 1123,789 1145,793 1160,798 1163,813 1170,837" fill="#abc6f1"/>
<polygon points="1058,253.6 1065,243.9 1074.7,242.5 1084.4,252.2 1077.5,260.5 1067.8,268.9 1059.4,271.7 1058,263.3" fill="#abc6f1"/>
<polygon points="1095,256 1098,255 1099,268 1097.5,285 1095.5,284 1094,268" fill="#abc6f1"/>
<polygon points="1062,201 1073,204 1072,206 1063,203.5" fill="#abc6f1"/>
<polygon points="1001,202 1005,203 1020,216 1019,220 1010,212 1004,210" fill="#abc6f1"/>
<polygon points="1104,233 1118,228 1123,227 1121,234 1106,237" fill="#abc6f1"/>
<polygon points="1094,242 1111,240 1110,243 1096,245" fill="#abc6f1"/>
<polygon points="1028,123 1044,132 1043,134 1029,127" fill="#abc6f1"/>
<polygon points="1028,146 1054,156 1052,158 1030,151" fill="#abc6f1"/>
<polygon points="1004,115 1008,117 1007,121 1003,119" fill="#abc6f1"/>
<polygon points="1104,272 1116,279 1114,283 1105,278" fill="#abc6f1"/>
<polygon points="1094,307 1100,310 1099,314 1094,311" fill="#abc6f1"/>
<polygon points="1114,314 1122,318 1120,321 1114,318" fill="#abc6f1"/>
<polygon points="1030,693 1045,688 1050,691 1040,697 1032,698" fill="#abc6f1"/>
<polygon points="1062,651 1072,648 1076,652 1066,655" fill="#abc6f1"/>
<polygon points="822,752 830,759 838,777 846,787 842,790 834,781 826,769 822,762" fill="#abc6f1"/>
<polygon points="823,790 829,792 828,797 823,796" fill="#abc6f1"/>
<polygon points="966,455 975,447 983,452 980,466 972,470 967,463" fill="#abc6f1"/>
<g fill="none" stroke="#abc6f1" stroke-width="2" stroke-linecap="round"><polyline points="982,121 992,119 998,124"/><polyline points="970,133 980,134 990,139"/><polyline points="950,150 962,148 972,152"/><polyline points="936,163 948,165 958,170"/><polyline points="920,178 932,176 944,182"/><polyline points="915,188 930,186 944,190"/><polyline points="916,202 932,203 946,201 958,206"/><polyline points="942,197 950,205 956,213"/><polyline points="924,222 940,222 954,226"/><polyline points="930,246 944,246 956,250"/><polyline points="928,236 938,234 946,238"/><polyline points="722,318 730,322 738,325"/><polyline points="725,338 736,336 744,340"/><polyline points="720,355 732,356 742,352"/><polyline points="733,300 742,303 750,301"/></g>
<path d="M1274 529 1263 532 1253 531 M1111 482 1104 488 1101 496 M935 836 942 826 952 820 M669 403 660 398 658 394 M732 661 742 655 754 651 M953 512 948 511 942 511 M1274 478 1283 475 1292 474 1301 471 M1144 792 1141 780 1138 769 M1194 541 1184 543 1175 541 M880 576 884 581 891 589 M1068 552 1067 542 1066 531 1062 521 M1104 407 1096 413 1086 414 M1366 684 1358 689 1350 695 1341 697 M850 786 855 798 866 805 M785 453 773 447 768 446 M1017 486 1017 490 1019 494 M1087 571 1087 561 1088 551 M1174 608 1187 603 1195 592 M979 583 977 578 976 573 M824 551 824 547 822 537 M953 512 949 516 948 522 M980 464 981 459 982 454 M1369 724 1370 734 1369 745 1368 755 M1180 478 1171 488 1168 502 M1119 528 1120 519 1116 511 M944 547 940 547 935 547 M1009 530 1006 535 1001 536 M1335 533 1339 543 1343 553 M1274 478 1274 489 1277 498 1281 507 1287 515 M917 640 921 636 925 632 M847 670 859 675 868 684 M1275 652 1271 644 1266 636 1258 632 M623 494 626 504 629 508 M965 566 960 567 956 568 M918 616 916 612 913 609 M1179 518 1176 530 1175 541 M891 589 899 592 906 599 M837 442 847 449 850 450 M864 464 864 464 M962 504 961 499 961 495 M1341 697 1330 704 1317 707 M759 463 770 469 782 471 M977 497 980 495 982 491 M887 706 885 718 879 728 M843 544 843 544 848 539 M983 444 988 442 993 440 M975 448 971 447 968 446 M1027 399 1033 405 1040 411 M1002 475 1004 471 1003 467 M1122 493 1119 502 1116 511 M1011 470 1014 472 1018 472 M1120 454 1123 464 1126 474 M966 455 970 455 975 457 M1049 454 1037 452 1025 451 1014 452 M1144 642 1152 652 1161 660 M1357 776 1364 766 1368 755 M1122 493 1131 497 1140 502 M926 736 936 731 946 730 957 730 968 730 M1260 318 1249 317 1238 321 1229 321 M893 639 882 646 868 648 M923 669 922 678 919 687 913 695 M1213 571 1201 570 1188 571 M813 627 816 633 M839 816 843 828 853 836 M1011 470 1006 472 1002 475 M1366 684 1367 673 1369 662 1371 651 M1067 502 1058 505 1051 510 M665 463 656 457 650 449 M1075 430 1075 439 1076 448 1077 457 M1184 833 1172 831 1166 828 M1259 511 1253 520 1253 531 M1366 436 1363 445 1363 454 1364 464 1363 473 M1258 632 1247 628 1235 627 1224 622 M1075 430 1084 434 1093 438 1102 442 M856 728 867 724 879 728 M1120 729 1110 728 1101 727 1091 726 M1141 429 1138 438 1138 448 M1067 502 1077 498 1085 490 M1312 676 1302 680 1293 680 1283 678 M966 522 969 519 972 516 M948 537 943 538 939 539 M972 660 975 669 980 677 981 687 M775 526 775 535 777 546 M1314 525 1323 521 1330 515 M988 574 989 579 989 583 M1356 613 1344 609 1332 604 M979 583 984 580 988 574 M952 820 962 824 972 827 982 831 M939 553 937 550 935 547 M989 583 986 586 984 589 M1292 758 1281 754 1277 754 M1073 395 1078 405 1086 414 M723 571 726 561 728 551 M874 783 862 786 850 786 M889 483 884 484 872 484 M1154 594 1146 596 1139 598 M1311 357 1321 359 1332 358 1342 355 M953 475 953 474 955 471 M1097 512 1107 511 1116 511 M1094 661 1085 670 1076 680 M1104 407 1112 418 1121 428 M669 403 679 406 688 411 M955 469 955 471 M1325 566 1322 556 1320 545 M1102 442 1097 433 1091 423 1086 414 M807 489 812 485 814 479 M918 539 918 545 920 552 M773 501 782 493 793 490 M1014 452 1011 448 1009 443 M997 706 990 696 981 687 M942 530 945 526 948 522 M1245 473 1246 484 1250 493 1255 502 1259 511 M746 630 750 639 754 651 M1143 474 1155 475 1162 484 M977 497 981 497 985 499 M769 378 763 385 757 393 751 399 M995 558 999 557 1003 555 M876 827 885 825 894 823 902 817 M1007 461 1012 461 1016 463 M635 462 642 473 653 481 M844 634 853 638 860 643 868 648 M834 768 830 776 826 784 823 793 M933 576 931 589 932 601 M1120 729 1120 717 1117 705 M918 539 922 538 927 538 M962 792 972 787 983 786 993 782 1004 780 M1184 833 1197 836 1209 837 M1197 625 1211 623 1224 622 M1017 486 1019 479 1018 472 M1020 502 1020 498 1019 494 M1016 567 1011 565 1006 563 M1059 357 1061 355 M1073 342 1074 341 M1227 650 1237 660 1235 674 M929 712 918 716 907 721 M1032 498 1030 494 1027 489 M1097 512 1100 519 1104 525 M932 601 925 598 918 598 M1300 437 1299 426 1301 416 1311 409 M846 504 840 502 834 505 M1095 696 1095 706 1094 716 1091 726 M1120 573 1119 563 1119 552 M991 528 995 529 999 528 M712 423 703 423 695 418 688 411 M839 816 848 812 856 807 866 805 M723 571 723 575 M1310 616 1320 624 1331 630 M933 533 936 536 939 539 M796 385 790 394 785 404 M1022 529 1026 525 1030 521 M851 530 853 525 856 521 M932 770 942 767 954 764 964 760 M930 556 935 555 939 553 M1331 784 1338 780 1347 776 1357 776 M1258 825 1247 830 1236 835 M1200 413 1206 423 1213 431 1222 436 1234 437 1244 441 M1022 529 1020 536 1016 541 M1282 398 1282 387 1284 376 1283 366 1278 356 M962 703 960 713 963 722 968 730 M1343 304 1332 298 1322 293 1311 290 M835 521 831 524 826 526 M1151 741 1161 733 1169 724 M970 490 968 487 964 485 M1059 470 1069 465 1077 457 M975 457 978 455 982 454 M1332 604 1330 594 1330 584 1327 575 1325 566 M1174 608 1163 602 1154 594 M963 472 965 468 967 463 M1250 801 1250 801 M700 391 694 401 688 411 M872 484 880 494 885 500 M1046 730 1036 729 1027 730 1018 732 1008 733 M1307 316 1316 318 1324 321 1333 325 1341 328 M1357 572 1366 566 1372 556 M1237 730 1237 719 1236 709 1235 698 M1168 502 1172 511 1179 518 M700 391 693 383 684 380 682 380 M957 576 957 572 956 568 M1016 567 1026 565 1036 563 1045 558 M1313 649 1323 640 1331 630 M1105 542 1097 548 1088 551 M1158 533 1151 540 1146 548 M1084 781 1072 774 1059 778 M1095 696 1107 699 1117 705 M991 528 989 523 989 517 M942 530 946 531 951 530 M907 531 907 533 M958 536 955 533 951 530 M808 441 810 448 811 456 M940 620 934 621 927 622 M1144 642 1134 648 1125 657 M923 669 934 662 944 654 M1347 650 1339 640 1331 630 M1366 436 1355 440 1344 443 1332 445 M1365 328 1369 319 1371 310 1371 300 M1216 462 1225 454 1235 448 1244 441 M1120 573 1130 578 1141 583 M800 533 788 539 777 546 M811 609 818 608 827 601 M939 539 938 543 935 547 M1216 462 1216 472 1214 481 1211 490 1205 497 1201 506 M964 544 968 544 972 546 M964 544 958 544 953 544 M958 536 958 530 958 524 M989 517 986 516 982 515 M958 536 955 540 953 544 M692 462 693 469 694 475 M927 622 925 627 925 632 M1329 475 1319 474 1310 472 1301 471 M932 601 929 606 926 610 M1108 759 1112 771 1117 783 M1194 541 1191 550 1188 560 1188 571 M820 729 827 718 828 707 827 695 825 684 M969 507 971 512 972 516 M793 490 794 484 795 478 M1231 498 1228 488 1221 481 1220 471 1216 462 M1011 477 1015 475 1018 472 M1146 548 1139 543 1132 537 M769 378 757 380 745 380 M963 590 965 586 966 582 M1147 711 1158 718 1169 724 M1069 639 1066 627 1060 616 M647 428 636 429 625 431 624 432 M888 569 897 566 M897 566 903 554 910 543 M1046 534 1044 546 1045 558 M1069 717 1064 709 1058 702 1051 695 M1151 741 1161 744 1169 751 1175 759 M947 680 958 685 970 687 981 687 M1275 652 1284 647 1294 646 1303 645 1313 649 M855 753 855 741 856 728 M991 492 991 488 990 485 M1313 649 1314 658 1313 667 1312 676 M1146 548 1147 560 1146 571 1141 583 M991 475 991 480 990 485 M826 457 819 457 811 456 M893 639 899 636 903 631 M1137 520 1145 519 1153 515 M1305 729 1297 721 1289 713 1280 706 M973 473 977 472 981 472 M917 628 922 629 925 632 M1032 781 1041 783 1050 780 1059 778 M658 500 660 499 660 499 M1039 520 1038 512 1042 506 M1220 815 1228 825 1236 835 M1168 502 1160 508 1153 515 M988 574 990 571 993 569 M1020 502 1026 500 1032 498 M623 494 620 484 618 474 618 474 M823 487 827 497 834 505 M1085 490 1093 491 1101 496 M991 492 986 492 982 491 M1033 416 1040 411 M1029 835 1038 834 1048 833 1056 829 M1003 810 1014 809 1026 808 1037 807 M927 546 923 542 918 539 M769 378 762 370 756 361 M1033 507 1031 502 1032 498 M981 529 985 533 990 536 M793 642 801 651 811 659 M1175 759 1185 763 1196 766 1207 768 M820 729 814 722 808 716 801 710 794 707 M1188 571 1180 576 1171 581 M856 602 853 596 M897 566 905 561 912 556 920 552 M970 490 971 486 972 483 M1234 527 1224 527 1215 523 M1062 521 1057 515 1051 510 M1077 381 1080 375 1078 365 1080 355 1080 353 M1082 343 1083 340 M1105 542 1113 546 1119 552 M793 677 805 671 811 659 M756 489 764 496 773 501 M1002 438 997 438 993 440 M1112 636 1118 628 1120 618 1124 609 M927 529 923 526 923 524 M1143 474 1135 474 1126 474 M892 679 880 683 868 684 M1027 489 1032 479 1041 472 M948 568 944 566 940 565 M1293 533 1289 524 1287 515 M793 642 787 631 M944 547 941 549 939 553 M973 473 968 473 963 472 M963 590 969 591 976 590 M1365 328 1353 327 1341 328 M1046 534 1038 534 1030 533 M1300 437 1296 449 1298 460 1301 471 M991 475 989 469 987 463 M1267 726 1257 726 1250 727 M1246 727 1237 730 M857 540 853 538 848 539 M649 502 642 496 632 496 623 494 M825 473 820 476 814 479 M881 617 874 611 864 608 856 602 M1300 437 1311 439 1321 443 1332 445 M1185 381 1174 385 1166 389 M1072 396 1066 403 1060 412 M1192 787 1195 800 1196 812 M1213 684 1224 680 1235 674 M962 634 955 639 949 646 944 654 M834 768 826 763 M1168 559 1173 570 1171 581 M1147 711 1137 708 1127 708 1117 705 M1359 542 1352 548 1343 553 M839 816 832 809 827 801 823 793 M1222 597 1224 610 1224 622 M859 508 855 509 851 511 M1171 581 1162 587 1154 594 M962 703 974 698 981 687 M1001 571 1005 567 1006 563 M1200 413 1190 412 1181 410 1171 413 1161 414 M996 463 992 463 987 463 M1112 636 1102 629 1090 628 M972 546 976 546 980 543 M1231 498 1232 507 1232 517 1234 527 M793 642 804 635 816 633 M997 515 998 522 999 528 M902 817 892 816 883 813 874 810 866 805 M669 440 675 430 682 420 688 411 M834 768 845 761 855 753 M935 836 926 832 918 827 910 822 902 817 M1014 452 1015 457 1016 463 M962 703 958 695 953 687 947 680 M944 547 948 545 953 544 M1007 635 1003 647 1004 659 M991 593 988 591 984 589 M665 463 661 473 653 481 M834 505 833 511 828 516 M1332 604 1320 608 1310 616 M1177 637 1174 647 1169 654 1161 660 M1002 545 1006 545 1010 545 M1027 489 1023 491 1019 494 M1367 371 1363 360 1362 350 1363 339 1365 328 M1007 635 1014 624 1028 621 M980 464 984 464 987 463 M948 560 948 564 948 568 M977 497 977 501 979 506 M962 703 950 702 940 708 929 712 M1356 613 1360 601 1371 594 M647 428 646 439 650 449 M1300 437 1291 433 1282 429 1272 428 M1120 454 1111 448 1102 442 M1150 684 1156 672 1161 660 M995 753 1004 744 1008 733 M1010 436 1016 428 M1033 414 1040 411 M1201 506 1190 513 1179 518 M985 499 989 499 993 500 M843 473 842 484 836 494 834 505 M846 504 849 507 851 511 M1120 729 1118 740 1115 750 1108 759 M999 507 996 503 993 500 M948 568 952 567 956 568 M797 454 797 461 793 467 M1311 357 1312 368 1316 377 1325 384 M897 744 903 733 907 721 M995 558 997 554 996 550 M1260 318 1259 305 1258 292 M1006 429 1007 430 1010 436 M1117 783 1126 774 1138 769 M966 522 968 527 972 531 M1062 752 1061 765 1059 778 M997 515 993 516 989 517 M756 538 747 534 743 533 M929 712 920 704 913 695 M864 464 854 469 843 473 M964 514 958 514 953 512 M1045 371 1051 374 1057 378 M1004 452 1004 457 1007 461 M947 680 946 667 944 654 M797 454 805 454 811 456 M1120 454 1129 451 1138 448 M874 783 870 794 866 805 M991 475 994 477 997 480 M980 483 980 477 981 472 M1112 636 1119 646 1125 657 M1002 438 1001 444 996 449 M1051 695 1043 688 1037 681 1033 673 1034 662 M1123 682 1117 676 1109 671 1103 664 1094 661 M1137 520 1129 526 1119 528 M1046 534 1055 530 1062 521 M1177 637 1185 647 1193 657 M918 598 915 603 913 609 M926 736 917 741 907 743 897 744 M1120 454 1110 461 1101 467 M995 753 986 760 976 762 964 760 M1343 304 1352 302 1362 301 1371 300 M1332 445 1329 435 1323 426 1317 418 1311 409 M1180 677 1169 670 1161 660 M1274 478 1276 468 1270 458 1271 448 1271 438 1272 428 M785 453 791 455 797 454 M1030 533 1026 531 1022 529 M728 551 737 543 737 541 M1009 530 1014 534 1016 541 M1139 616 1138 607 1139 598 M932 770 920 775 908 773 M988 509 991 505 993 500 M962 504 957 501 952 501 M962 792 971 798 981 804 992 808 1003 810 M954 486 957 483 959 479 M1001 492 997 496 993 500 M1157 576 1164 579 1171 581 M1119 528 1112 528 1104 525 M1039 520 1034 520 1030 521 M814 391 814 392 814 403 M985 564 981 563 978 559 M820 729 832 725 844 724 856 728 M1213 571 1222 564 1232 558 1240 549 M1325 751 1314 752 1303 754 1292 758 M927 546 923 549 920 552 M759 463 748 469 M1244 441 1253 435 1263 433 1272 428 M1091 726 1088 737 1087 749 M1046 730 1034 722 1028 711 M1015 516 1021 516 1027 513 M1135 400 1125 401 1114 403 1104 407 M1057 664 1045 664 1034 662 M1046 730 1039 737 1033 745 1026 753 M1132 537 1126 533 1119 528 M856 521 853 516 851 511 M891 546 896 544 903 541 M995 558 994 564 993 569 M1108 759 1120 756 1130 759 1138 769 M1274 529 1278 521 1287 515 M983 444 986 446 988 450 M1062 802 1060 811 1059 820 1056 829 M1310 502 1310 491 1305 481 1301 471 M1235 698 1235 686 1235 674 M1260 318 1251 311 1242 303 1232 298 M1105 542 1106 534 1104 525 M1175 759 1169 767 1169 776 1167 786 1170 795 M966 535 965 540 964 544 M1004 499 998 499 993 500 M1305 729 1310 718 1317 707 M1192 787 1188 777 1184 766 1175 759 M1069 639 1080 634 1090 628 M1298 596 1289 604 1288 615 1288 626 M1004 780 1003 790 1002 800 1003 810 M1132 537 1126 545 1119 552 M1216 462 1226 466 1236 470 1245 473 M1037 807 1049 802 1062 802 M729 510 732 502 732 497 M1180 677 1187 667 1193 657 M800 533 812 532 822 537 M1137 520 1137 529 1132 537 M796 385 792 375 793 365 796 361 M1025 685 1025 698 1028 711 M962 792 964 781 964 771 964 760 M1079 830 1069 829 1056 829 M1157 576 1149 579 1141 583 M1004 452 1000 458 996 463 M1278 576 1272 586 1269 597 1265 607 M1087 571 1088 583 1087 596 M1310 502 1298 508 1287 515 M954 486 950 491 946 496 M1011 497 1015 496 1019 494 M991 528 986 529 981 529 M887 706 896 702 904 698 913 695 M1164 818 1164 816 1168 806 1170 795 M1158 533 1166 538 1175 541 M1312 676 1310 687 1312 698 1317 707 M966 455 966 450 967 447 M1219 789 1209 795 1203 804 1196 812 M1278 576 1283 568 1290 561 1293 552 M980 483 985 483 990 485 M881 617 887 620 893 620 M798 426 803 433 808 441 M782 471 787 467 793 467 M756 538 765 531 772 526 M1033 507 1037 506 1042 506 M837 535 843 537 848 539 M965 566 966 570 966 574 M957 461 960 460 967 463 M1347 408 1353 399 1357 389 1362 380 1367 371 M1037 807 1035 816 1030 825 1029 835 M847 670 855 664 862 657 868 648 M1015 516 1016 520 1015 524 M793 677 781 679 780 679 M1069 717 1062 728 1061 740 1062 752 M1292 758 1298 768 1303 774 M858 590 856 602 M1120 729 1125 739 1131 748 1132 759 1138 769 M962 634 973 628 984 621 M793 677 794 687 793 695 M980 483 981 487 982 491 M1048 429 1044 420 1040 411 M997 480 1000 478 1002 475 M1157 576 1152 567 1147 558 1146 548 M1282 398 1293 398 1303 400 1311 409 M1325 384 1319 391 1313 399 1311 409 M1347 408 1339 401 1332 393 1325 384 M994 542 993 538 990 536 M844 634 835 633 825 631 816 633 M933 576 936 570 940 565 M996 449 995 444 993 440 M920 795 914 784 908 773 M701 483 699 479 694 475 M837 442 832 431 824 421 M1004 452 1008 451 1014 452 M1200 413 1202 423 1199 432 1197 441 M1174 608 1167 612 1160 618 M1274 478 1265 476 1255 474 1245 473 M983 444 979 447 975 448 M973 473 977 478 980 483 M728 551 739 558 743 570 M991 593 987 601 985 611 984 621 M930 520 931 521 933 525 M1022 529 1018 528 1015 524 M835 521 832 519 828 516 M1085 490 1078 481 1069 475 1059 470 M745 570 743 570 M820 512 824 514 828 516 M1051 695 1059 689 1068 686 1076 680 M910 543 914 541 918 539 M933 533 930 531 927 529 M1200 413 1200 402 1205 392 1213 384 M1191 736 1181 728 1169 724 M1005 483 1008 480 1011 477 M1025 685 1028 673 1034 662 M962 504 966 504 969 507 M1036 595 1048 591 1061 589 M1325 751 1318 759 1310 767 1307 775 M1123 682 1136 688 1150 684 M1015 585 1019 583 1021 580 M807 489 800 488 793 490 M1101 467 1088 463 1077 457 M1187 704 1183 719 1169 724 M1216 462 1211 453 1203 448 1197 441 M1220 815 1215 826 1209 837 M859 508 865 496 872 484 M1211 710 1212 697 1213 684 M669 440 665 451 665 463 M1278 576 1284 583 1291 590 1298 596 M1045 639 1037 650 1034 662 M1227 650 1227 641 1225 632 1224 622 M1051 510 1047 508 1042 506 M1293 552 1292 543 1293 533 M1046 730 1046 718 1047 706 1051 695 M966 455 961 455 960 454 M1140 502 1146 509 1153 515 M1036 595 1029 595 1022 593 M933 533 933 529 933 525 M1018 472 1017 468 1016 463 M952 501 949 498 946 496 M1307 316 1311 303 1311 290 M904 622 902 626 903 631 M1275 652 1265 661 1259 672 M1045 558 1034 559 1023 557 1012 554 M1026 753 1038 752 1050 755 1062 752 M1265 607 1273 612 1281 619 1288 626 M988 450 994 455 996 463 M1020 502 1025 507 1027 513 M966 582 967 578 966 574 M1091 726 1081 721 1069 717 M1062 521 1074 523 1087 525 M926 736 927 724 929 712 M1135 400 1137 399 M1245 473 1246 462 1244 452 1244 441 M686 492 689 487 694 475 M1033 507 1030 510 1027 513 M857 540 854 535 851 530 M1310 616 1300 622 1288 626 M814 589 817 592 M1260 318 1256 326 1253 335 1253 344 M1232 298 1228 309 1227 318 M979 583 977 586 976 590 M933 517 935 517 940 519 M1241 374 1245 364 1248 354 1253 344 M1002 545 999 547 996 550 M669 440 680 447 694 448 M1342 355 1342 342 1341 328 M1267 726 1258 720 1251 711 1241 707 1235 698 M910 543 906 543 903 541 M970 490 965 492 961 495 M1061 589 1057 578 1053 567 1045 558 M707 467 702 471 694 475 M1048 429 1038 430 1028 430 1019 431 1010 436 M864 464 867 474 872 484 M879 728 889 729 898 726 907 721 M745 380 738 381 M769 378 777 385 782 394 785 404 M1348 507 1355 514 1365 517 M1025 685 1033 688 1042 691 1051 695 M1015 516 1010 518 1005 519 M1069 639 1063 646 1060 655 1057 664 M987 552 984 547 980 543 M948 537 949 534 951 530 M1060 412 1067 421 1075 430 M844 634 851 624 856 614 856 602 M973 564 976 562 978 559 M1293 533 1303 527 1314 525 M1111 482 1119 478 1126 474 M1005 519 1010 514 1013 508 M1191 736 1186 744 1181 752 1175 759 M907 533 905 537 903 541 M1001 571 1000 575 1001 580 M1313 649 1305 641 1296 635 1288 626 M1195 592 1185 583 1171 581 M981 472 984 467 987 463 M820 729 820 733 M1280 706 1272 703 1262 704 1253 702 1244 700 1235 698 M1177 637 1186 630 1197 625 M957 576 962 575 966 574 M948 537 950 541 953 544 M1265 607 1259 600 1252 594 1247 586 1239 581 M1259 672 1271 676 1283 678 M964 760 965 750 968 740 968 730 M1158 533 1157 524 1153 515 M1192 787 1197 776 1207 768 M1314 525 1317 535 1320 545 M979 583 981 587 984 589 M1147 711 1146 702 1146 693 1150 684 M980 483 976 483 972 483 M1260 318 1272 315 1282 308 M996 463 999 466 1003 467 M1222 597 1232 591 1239 581 M920 795 929 799 937 805 944 813 952 820 M1003 810 996 818 988 823 982 831 M1265 607 1262 620 1258 632 M1026 753 1022 745 1016 738 1008 733 M844 634 842 625 839 616 834 608 830 602 M1011 470 1013 466 1016 463 M1177 637 1168 628 1160 618 M1087 596 1089 606 1090 617 1090 628 M891 589 894 599 899 609 M1307 316 1315 310 1323 304 1333 304 1343 304 M965 566 962 562 959 557 M1325 566 1334 558 1343 553 M1184 833 1187 821 1196 812 M975 457 974 452 975 448 M964 544 959 546 956 551 M1240 549 1241 560 1241 570 1239 581 M1101 467 1106 474 1111 482 M1278 356 1270 351 1262 347 1253 344 M918 616 923 619 927 622 M1049 454 1048 441 1048 429 M1114 793 1117 783 M745 380 745 391 750 399 M800 533 807 527 814 519 820 512 M1311 357 1300 360 1289 357 1278 356 M826 526 828 521 828 516 M876 827 864 831 853 836 M1305 729 1313 736 1319 743 1325 751 M999 507 1001 503 1004 499 M1140 502 1143 493 1143 483 1143 474 M1241 374 1232 378 1222 380 1213 384 M825 684 819 676 815 667 811 659 M1332 445 1330 455 1327 465 1329 475 M822 537 823 531 826 526 M970 490 974 493 977 497 M1046 730 1058 725 1069 717 M892 679 901 673 911 668 923 669 M994 542 995 546 996 550 M987 552 982 552 978 551 M941 503 944 499 946 496 M926 736 922 748 924 760 932 770 M874 783 884 774 896 774 908 773 M1004 452 1000 450 996 449 M835 521 840 521 845 518 M1012 554 1008 555 1003 555 M994 542 998 539 1001 536 M926 736 914 731 907 721 M972 660 982 660 993 658 1004 659 M1165 442 1176 441 1186 442 1197 441 M1036 595 1042 604 1050 612 1060 616 M964 514 966 510 969 507 M1347 408 1355 416 1361 425 1366 436 M963 472 962 476 959 479 M1144 792 1156 795 1170 795 M756 489 749 486 M1368 755 1363 746 1358 738 1352 730 1344 723 M981 529 979 526 977 522 M893 639 894 629 893 620 M1141 583 1139 590 1139 598 M845 518 849 516 851 511 M1006 563 1005 559 1003 555 M944 654 938 647 931 640 925 632 M1267 726 1273 716 1280 706 M1216 546 1205 543 1194 541 M948 522 944 521 940 519 M1325 751 1331 742 1340 733 1344 723 M1278 356 1284 347 1287 337 1285 327 1284 318 1282 308 M930 556 936 559 940 565 M1310 616 1302 607 1298 596 M1007 461 1006 464 1003 467 M968 730 971 719 978 712 987 709 997 706 M971 556 974 554 978 551 M1060 412 1050 410 1040 411 M1001 492 1003 495 1004 499 M955 471 958 475 959 479 M899 609 903 604 906 599 M1220 815 1208 813 1196 812 M997 706 1001 715 1004 724 1008 733 M940 620 934 613 926 610 M997 515 1001 517 1005 519 M1180 478 1171 480 1162 484 M793 506 787 518 776 523 M958 524 955 527 951 530 M915 529 918 526 M1084 781 1085 770 1085 760 1087 749 M1357 572 1361 585 1371 594 M834 768 844 776 850 786 M956 551 957 554 959 557 M881 617 873 624 864 629 855 633 844 634 M1026 753 1031 762 1032 771 1032 781 M1032 781 1040 786 1047 791 1055 797 1062 802 M807 489 811 502 820 512 M823 487 824 480 825 473 M948 522 950 526 951 530 M899 609 897 615 893 620 M918 616 911 619 904 622 M972 546 975 549 978 551 M964 485 963 481 959 479 M917 640 910 637 903 631 M954 486 957 491 961 495 M837 535 836 528 835 521 M1227 650 1216 653 1205 656 1193 657 M623 494 629 484 633 474 635 462 M1258 825 1249 814 1250 801 M1004 452 1007 449 1009 443 M966 522 962 522 958 524 M795 478 794 472 793 467 M1216 546 1215 534 1215 523 M1009 530 1011 526 1015 524 M1201 506 1209 513 1215 523 M964 514 966 517 966 522 M1240 549 1250 543 1253 531 M892 679 893 688 891 697 887 706 M800 533 795 544 797 551 M966 535 962 536 958 536 M933 525 930 527 927 529 M1359 542 1366 530 1365 517 M942 511 942 515 940 519 M1007 635 999 630 990 627 984 621 M1310 502 1312 513 1314 525 M1097 512 1092 519 1087 525 M995 753 997 763 1001 772 1004 780 M623 494 614 487 605 484 M942 511 939 511 937 511 M927 546 926 542 927 538 M897 744 901 754 904 764 908 773 M1293 552 1302 547 1311 546 1320 545 M1097 512 1088 504 1078 503 1067 502 M1011 470 1011 474 1011 477 M980 464 978 460 975 457 M966 535 967 528 966 522 M1049 454 1046 463 1041 472 M1168 502 1165 493 1162 484 M1192 787 1180 788 1170 795 M976 590 972 585 966 582 M942 511 942 507 941 503 M1234 527 1244 526 1253 531 M915 529 911 531 907 533 M923 669 925 658 923 649 917 640 M1068 552 1066 562 1062 570 1061 580 1061 589 M790 551 788 550 777 546 M1002 432 1002 438 M824 421 814 429 808 441 M1325 566 1315 561 1304 558 1293 552 M745 380 752 372 756 361 M851 701 860 693 868 684 M1075 430 1081 422 1086 414 M941 503 939 505 M964 514 968 514 972 516 M988 450 992 450 996 449 M1216 546 1216 558 1213 571 M962 634 949 630 940 620 M826 457 824 465 825 473 M1216 546 1228 547 1240 549 M688 492 691 489 700 486 M1151 741 1149 732 1148 722 1147 711 M1046 730 1055 735 1059 743 1062 752 M981 529 982 536 980 543 M1015 516 1014 512 1013 508 M1069 639 1057 638 1045 639 M913 695 912 704 910 713 907 721 M1135 400 1128 408 1123 417 1121 428 M977 522 975 519 972 516 M1348 507 1339 512 1330 515 M1060 412 1073 415 1086 414 M1174 608 1174 618 1177 627 1177 637 M953 512 957 518 958 524 M1016 541 1013 543 1010 545 M1180 677 1191 682 1201 684 1213 684 M1030 521 1028 517 1027 513 M927 546 931 546 935 547 M839 816 831 824 822 833 M1123 682 1124 670 1125 657 M1335 533 1346 530 1356 525 1365 517 M1045 558 1035 554 1026 546 1016 541 M962 792 953 799 951 809 952 820 M973 564 970 570 966 574 M644 412 643 419 647 428 M1307 316 1295 309 1282 308 M1015 585 1014 589 1011 593 M1174 608 1182 613 1190 619 1197 625 M1265 607 1254 605 1243 602 1233 597 1222 597 M1343 304 1343 316 1341 328 M1187 704 1179 697 1176 688 1180 677 M965 566 968 561 971 556 M756 538 766 542 777 546 M970 490 976 492 982 491 M1120 573 1113 581 1104 585 1095 590 1087 596 M796 385 806 384 811 382 M918 616 922 613 926 610 M1018 472 1030 475 1041 472 M1250 801 1250 801 M1188 571 1190 582 1195 592 M1220 815 1228 806 1238 802 1250 801 M999 528 1003 524 1005 519 M1157 576 1162 567 1168 559 M1003 555 1000 552 996 550 M918 598 923 603 926 610 M971 556 975 558 978 559 M973 473 972 478 972 483 M1160 618 1149 618 1139 616 M692 462 678 461 665 463 M1144 792 1134 789 1125 788 1117 783 M948 560 954 559 959 557 M851 701 852 710 854 719 856 728 M769 378 778 380 787 382 796 385 M857 540 867 543 M963 472 959 472 955 471 M991 475 986 474 981 472 M989 583 995 582 1001 580 M897 744 890 734 879 728 M1022 593 1017 594 1011 593 M1041 496 1037 498 1032 498 M952 501 957 498 961 495 M1274 478 1269 489 1263 499 1259 511 M1342 355 1336 365 1331 375 1325 384 M933 525 935 520 940 519 M1122 493 1116 487 1111 482 M926 736 933 742 937 752 946 755 956 757 964 760 M1017 486 1015 481 1011 477 M1293 533 1284 529 1274 529 M674 494 672 493 663 485 653 481 M1141 429 1131 428 1121 428 M773 501 774 512 774 518 M1005 483 1004 479 1002 475 M768 553 777 546 M1001 571 997 569 993 569 M991 492 996 492 1001 492 M1004 780 1013 780 1023 781 1032 781 M942 530 938 531 933 533 M991 593 996 589 1002 587 M981 529 977 531 972 531 M1335 533 1328 540 1320 545 M1124 609 1131 613 1139 616 M1232 298 1244 292 1258 292 M692 462 694 456 694 448 M1011 470 1007 468 1003 467 M1280 706 1285 697 1285 688 1283 678 M1343 553 1332 550 1320 545 M1332 445 1324 452 1316 457 1308 463 1301 471 M980 464 980 468 981 472 M1227 650 1240 647 1250 642 1258 632 M1156 459 1147 453 1138 448 M756 489 754 476 759 463 M973 564 974 569 976 573 M1359 542 1364 550 1372 556 M743 570 743 570 M635 462 641 454 650 449 M1068 552 1078 549 1088 551 M991 475 994 469 996 463 M917 628 922 624 927 622 M1062 752 1074 751 1087 749 M1068 552 1057 556 1045 558 M945 492 946 496 M1057 664 1067 671 1076 680 M1005 483 1003 487 1001 492 M1232 298 1219 296 1214 294 M1369 724 1356 725 1344 723 M1045 639 1039 628 1028 621 M1144 642 1142 629 1139 616 M1002 438 1006 437 1010 436 M1040 371 1034 378 1030 388 1027 398 M839 816 842 805 844 795 850 786 M837 442 832 451 826 457 M995 753 1006 753 1016 754 1026 753 M851 530 850 535 848 539 M1095 696 1085 688 1076 680 M1059 470 1050 470 1041 472 M806 588 804 593 M1123 682 1121 694 1117 705 M999 507 998 511 997 515 M808 468 811 462 811 456 M1028 711 1022 719 1015 726 1008 733 M887 706 900 710 907 721 M1363 473 1352 472 1340 472 1329 475 M1048 429 1037 432 1028 435 1020 443 1014 452 M1121 428 1110 433 1102 442 M1347 650 1344 662 1342 674 M825 684 837 679 847 670 M927 546 929 551 930 556 M972 660 962 660 953 657 944 654 M987 552 992 551 996 550 M956 551 955 547 953 544 M1367 371 1356 369 1349 363 1342 355 M991 492 992 496 993 500 M1265 555 1251 555 1240 549 M985 564 989 566 993 569 M1216 462 1207 465 1198 469 1190 475 1180 478 M723 571 715 574 M1112 636 1122 640 1133 641 1144 642 M635 462 630 464 M1341 697 1347 710 1344 723 M1011 497 1013 502 1013 508 M1237 730 1230 723 M1214 713 1211 710 M1068 552 1062 545 1054 539 1046 534 M997 480 994 482 990 485 M948 537 953 538 958 536 M1002 587 1002 583 1001 580 M1241 374 1248 381 1257 386 1265 390 1274 393 1282 398 M953 512 952 506 952 501 M967 463 966 459 966 455 M1151 741 1146 750 1141 759 1138 769 M1094 661 1096 649 1095 638 1090 628 M940 565 938 559 939 553 M917 628 910 630 903 631 M1004 499 1007 497 1011 497 M1037 807 1036 794 1032 781 M1097 512 1101 504 1101 496 M920 795 913 801 906 808 902 817 M977 522 980 519 982 515 M1061 589 1060 603 1060 616 M1020 502 1017 505 1013 508 M913 609 909 604 906 599 M769 674 768 669 761 660 754 651 M980 543 985 540 990 536 M1222 597 1213 594 1205 591 1195 592 M1231 498 1238 491 1243 483 1245 473 M1363 473 1362 483 1360 492 1354 500 1348 507 M723 571 733 569 743 570 M669 440 659 444 650 449 M917 640 926 644 935 649 944 654 M1146 548 1158 551 1168 559 M952 478 955 478 959 479 M963 590 960 600 957 611 956 622 962 634 M915 529 916 534 918 539 M772 423 780 417 785 404 M1187 704 1199 709 1211 710 M1112 636 1105 643 1099 652 1094 661 M1305 729 1316 730 1325 729 1335 727 1344 723 M1265 555 1269 542 1274 529 M999 507 994 510 988 509 M1161 414 1165 402 1162 391 M1241 374 1240 385 1242 396 1244 406 M1004 659 1014 661 1024 662 1034 662 M808 468 810 474 814 479 M1357 572 1353 560 1343 553 M759 463 759 453 760 447 M1108 759 1098 754 1087 749 M1244 441 1245 429 1244 418 1244 406 M979 506 974 507 969 507 M989 517 989 513 988 509 M1366 684 1354 677 1342 674 M899 609 906 610 913 609 M1087 596 1079 591 1070 589 1061 589 M1275 652 1279 643 1284 635 1288 626 M1259 672 1247 677 1235 674 M1045 639 1045 629 1051 621 1060 616 M1012 554 1010 550 1010 545 M1244 406 1237 400 1229 395 1221 389 1213 384 M731 660 731 650 731 647 M730 646 729 640 727 636 M1282 398 1287 389 1290 379 1298 372 1304 365 1311 357 M793 506 795 498 793 490 M623 494 612 496 M1004 780 1010 770 1018 761 1026 753 M948 560 943 557 939 553 M985 499 982 502 979 506 M1160 618 1156 606 1154 594 M1025 685 1018 695 1009 702 997 706 M1168 559 1171 550 1175 541 M1013 576 1006 577 1001 580 M1241 374 1235 368 1233 366 M904 622 899 621 893 620 M1207 768 1211 779 1219 789 M1144 792 1147 795 M798 426 793 414 785 404 M1220 815 1217 802 1219 789 M1165 442 1158 449 1156 459 M793 506 783 502 773 501 M1010 436 1009 440 1009 443 M1144 642 1155 639 1166 639 1177 637 M910 543 915 549 920 552 M1003 810 1007 823 1015 832 1029 835 M756 489 751 481 M629 409 627 410 M897 566 895 555 890 548 M1341 697 1340 685 1342 674 M1305 729 1301 738 1296 748 1292 758 M988 450 985 452 982 454 M824 421 817 414 814 403 M933 533 931 536 927 538 M1335 533 1334 524 1330 515 M999 528 998 532 1001 536 M1282 398 1280 408 1277 419 1272 428 M1347 650 1359 647 1371 651" fill="none" stroke="#b89bd0" stroke-width="5.5"/>
<polyline points="1012,104 1010,120 1020,126 1006,132 1002,144 1008,158 1020,184 1034,194 1030,202 1042,222 1036,236 1042,256" fill="none" stroke="#777" stroke-width="6"/>
<polyline points="687,387 680,396 675,399.5 677,403 668,406.5 671.6,411.7 680,417 687,417 690.7,410 697.6,413.4 699.4,420 706.3,420" fill="none" stroke="#777" stroke-width="6"/>
<polyline points="912.4,531 917,540 928.6,545 942.5,559 954,559 958.7,570.5 970,572.8 972.6,563.5 977,580 995.7,586.7 1009.6,586.7 1028,598 1046.7,598 1065,603 1058,620 1056.7,646 1060.8,658.75 1050,665 1040,672 1041.5,680 1032,691 1026.7,707.8 1024.8,724.4 1034,711.5 1047,713.3 1052.6,731.9 1050.7,739.3 1061.8,750.4 1063.7,763.3 1052.6,767 1056,776.3 1065.5,785.6 1061.8,794.8 1067.4,804 1086,807.8 1084,820.7" fill="none" stroke="#777" stroke-width="6"/>
<polyline points="931,519.5 940,524 958.7,515 970,512.6 981.8,517 991,526.5 988.8,538 998,538" fill="none" stroke="#777" stroke-width="6"/>
<polyline points="1005,440.8 1009.6,454.7 1005,468.6 1012,480 1007.3,489.4 991,496.4 995.7,512.6 995.7,524 993.4,535.7 998,538 1007.3,549.6 1007.3,559 998,568 1000.4,579.7 1014,586.7" fill="none" stroke="#777" stroke-width="6"/>
<polyline points="1024,384 1030,385 1040,386" fill="none" stroke="#777" stroke-width="6"/>
<polyline points="1142.6,404.5 1156,420.5 1158.6,436.5 1169,452.4 1177,473.7 1185,487 1193,500.3 1182.5,505.7 1174.5,516.3 1161,527 1145,537.6 1144,540 1156.7,552.5 1161,563 1175.4,573 1194,586 1198,594 1192,602.5 1185.8,615 1190,627.5 1173,636 1156.7,648 1133.7,654.6 1113,652.5 1083.7,650.4 1060.8,658.75" fill="none" stroke="#777" stroke-width="6"/>
<polyline points="1193,500.3 1212,505.7 1227.8,513.7 1243.7,516.3 1259.7,513.7 1273,521.6 1286,529.6 1302,532.3 1318,527 1339.5,524.3 1352.9,527 1366,529.6 1372,528" fill="none" stroke="#777" stroke-width="6"/>
<polyline points="1233,368.6 1281,359.3 1297,367.3 1318,356.6 1323.6,354 1313,343.3 1313,330 1310,300" fill="none" stroke="#777" stroke-width="6"/>
<polyline points="1243.7,338 1273,343.3 1281,359.3" fill="none" stroke="#777" stroke-width="6"/>
<polyline points="1297,367.3 1313,388.6 1323.6,415 1334,436.5 1347.5,449.8 1355.5,463 1361,479 1358,503 1363.5,527" fill="none" stroke="#777" stroke-width="6"/>
<polyline points="1345,428.5 1372,420.5" fill="none" stroke="#777" stroke-width="6"/>
<polyline points="1221,575 1248,577.5 1265,575.4 1279.6,563 1281.7,548 1283.75,540 1300,536 1310,532" fill="none" stroke="#777" stroke-width="6"/>
<polyline points="1113,652.5 1113,669 1135.8,673 1160.8,669 1179.6,665 1190,673 1219,677.5 1244,673 1265,658.75 1275.4,648.3 1269,627.5 1275.4,610.8 1269,598 1277.5,590 1265,575.4" fill="none" stroke="#777" stroke-width="6"/>
<polyline points="1275,598 1311,600.4 1325.4,573 1346,556.7 1365,556.7 1365,540" fill="none" stroke="#777" stroke-width="6"/>
<polyline points="1273,656.7 1290,663 1306.7,673 1336,669 1348,652.5 1372,646" fill="none" stroke="#777" stroke-width="6"/>
<polyline points="1336,669 1352.5,686 1358.75,692 1372,700" fill="none" stroke="#777" stroke-width="6"/>
<polyline points="1219,677.5 1217,686 1223,702.5 1231.7,713" fill="none" stroke="#777" stroke-width="6"/>
<polyline points="1229,713 1245,716 1262,710 1290,706 1306.7,702.5 1330,710 1350,740 1372,760" fill="none" stroke="#777" stroke-width="6"/>
<polyline points="1113,669 1119,675.4 1135.8,686 1133.75,702.5 1115,698 1090,704.6 1081.7,715 1065,712 1047,713.3" fill="none" stroke="#777" stroke-width="6"/>
<polyline points="1290,745 1310,760 1335,775 1372,790" fill="none" stroke="#777" stroke-width="6"/>
</svg>
<div style="position:absolute;left:0;top:72px;width:182px;height:28px;background:rgba(255,255,255,0.45)"></div>
<div style="position:absolute;left:5px;top:83px;font-size:11px;line-height:14px;color:#222">Scene 1</div>
<div style="position:absolute;right:5px;top:83px;font-size:11px;line-height:14px;color:#222">(10 sec)</div>
</div>
</div>
<div id="map"><svg id="mapsvg" width="1128" height="733" viewBox="244 104 1128 733" preserveAspectRatio="none" style="display:block;position:absolute;left:0;top:0">
<rect x="244" y="104" width="1128" height="733" fill="#abc6f1"/>
<polygon points="295,104 367,104 363.7,106.6 360.4,109.1 356.6,110.9 353,113 348.7,114.5 344.3,115.8 340.5,118.4 336.5,120.7 332.4,122.8 328,124 323.8,127.3 320,131 315.5,133 311.9,136.4 308.4,139.8 304,142 300.6,145.7 295.9,147.8 292.7,151.7 289,155 285.5,158.6 281,161 277,164 272.2,166.8 267,169 268.3,164.4 270,160 272.8,157.1 275.8,154.2 279.2,151.9 282,149 285,145 287.8,140.8 291,137 287,137.2 283,137.3 279.1,139.2 275,138.8 271,139 273.8,134.8 277,131 279.7,127.9 282,124.6 285.3,122 288,119 291,114.7 293.9,110.3 297,106" fill="#efeeea"/>
<polygon points="529,108 534,107.4 539,107.6 544,107.6 547.9,106.3 551.9,105.4 556,105 556,104 655,104 653,111 649,113.9 645,117 640.7,119.8 636,122 632.1,123.6 628.5,125.8 625,128 621.4,130.6 616.9,130.6 613.2,132.9 609,133.6 605,135 600.8,135.7 596.8,137.7 592.4,137.2 588.2,138 584,138.5 578.4,140.4 573,143 567.4,142.4 562,141 557.6,138.3 553,136 548.8,133.8 545,131 540,130.5 534.9,130 530,129 534.5,126 538.8,125.7 542.8,124.3 547.2,124.2 551,122 547,117 545,112 540.1,110.5 535.1,109.3 530,108.5" fill="#efeeea"/>
<polygon points="992,104 987.7,107 984.2,110.9 980,114 977.5,118 974.4,121.6 972.7,126.1 970,130 966.4,133.4 963,137 959.2,140.2 956,144 953,147.4 949.7,150.5 946.3,153.5 943.2,156.8 940,160 937,162.9 933,164.1 930.5,167.8 927.2,170.1 923.9,172.4 920,174 917.6,177.3 916.2,181.1 914.4,184.7 912,188 913,191.9 912.8,196 914,199.9 914,204 916.1,207.8 916.7,212.1 919.1,215.8 920,220 921.8,223.9 923.2,228 925.1,231.9 926.4,236 928,240 928.4,244.2 930.2,247.9 931.6,251.8 932,256 935.5,260.2 938,265 941.1,269.5 944,274 948.1,276.9 951.9,280.1 956,283 960.8,284.2 965.6,285.7 970.4,287.1 975,289 979.4,286.7 984,285.1 988.4,282.8 993,281 995.8,277.8 999.5,275.4 1001.6,271.6 1003.4,267.5 1007,265 1010.2,261.7 1012.4,257.8 1015,254 1019.2,253.4 1023.4,254.6 1027.6,254 1031.8,253.6 1036,254 1038.3,258.3 1040.5,262.8 1042,267.5 1044,272 1046,276 1049.4,279.1 1051.6,283 1053.4,287.1 1057,290 1060.2,292.6 1062.4,296.1 1065.4,298.9 1068,302 1073,308 1076.7,311.7 1080,315.7 1083,320 1086,323.5 1089,327 1091,334 1087.2,336.9 1083.8,340.2 1080,343 1078,347.5 1076,352 1079.6,353.9 1083.3,355.4 1087,357 1091,357.5 1095,357.3 1099,357.3 1103,358.1 1107,357 1111.7,357.3 1116.3,357.1 1121,357 1126,352 1125.2,346.5 1124,341 1127.8,338 1132.1,336 1136.6,334.3 1140.7,331.8 1144.6,329 1145.9,325.1 1145.1,321 1144.2,316.9 1146.9,313.1 1146.6,309 1146,305 1143.6,301.4 1141.6,297.5 1143.4,293.1 1141.4,288.9 1138.6,284.6 1140.4,280.2 1140.1,275.9 1143,271.5 1139.5,267.3 1140.1,263 1139.9,258.6 1139.6,254.3 1140,250 1137.4,246.6 1137,242.3 1136.4,238.1 1134.3,234.5 1130.9,231.4 1129.1,227.8 1128.9,223.3 1126.4,219.9 1124.9,216.1 1124,212 1119.7,210.7 1116.3,207.6 1112,206.4 1108.5,204.2 1104.5,203 1101,200.8 1099.5,197 1097.7,193.4 1093.3,191.3 1092.4,187.1 1090.4,183.6 1088.6,180 1087.3,175.4 1085.2,171 1083.5,166.5 1082,162 1083.5,157.5 1086,153.3 1087.7,148.9 1088,144 1090.1,140.6 1092.4,137.3 1096.5,135.4 1097.1,130.8 1100,128 1099.8,124 1100,120 1100,116 1097.5,111.9 1095,107.8 1092,104" fill="#efeeea"/>
<polygon points="1129,104 1372,104 1372,837 817,837 817.7,833 817.6,828.9 818.7,825 819,821 819.8,816.7 821.8,812.7 820.7,808.1 820.1,803.7 820.9,799.4 823.7,795.5 823,791 823.1,786.9 822.4,782.7 824.2,778.9 825.3,775 826.9,771.1 825.6,766.9 827,763 824.2,758.4 821,754 823.3,748.6 825,743 823.8,738.5 823,734 819.5,731.5 816.9,727.9 813.5,725.3 809.7,723.2 806,721 803.4,717.1 801,713.1 797.7,709.8 795,706 796,702 797,698 793.9,695.3 791.5,692 788.7,689 786,686 786,681 782.2,677.9 777.3,677.1 773,675 769.8,672.5 766.3,670.4 762.5,669.1 759,667 754.9,665.9 750.5,667.6 746.4,665.7 742.3,664.9 738,665 733.6,662.5 730.3,658.7 727,655 729.8,650.7 732,646 728.5,643.1 725,640 728.2,635.8 732,632 736,631.4 740,630.9 744,631.2 748,630.7 752,630 756.2,628.1 760.4,626.2 764.7,624.7 769,623 773,626.5 777.6,629.1 782,632 786,632.3 790,631.9 794,631.4 798,632 802.2,630.6 806.6,630.3 810.8,629.1 815,628 813.6,623.5 812.3,619 812.7,614.2 811.6,609.6 811,605 808.6,600.8 806.3,596.6 804.4,592.2 802,588 806.3,588.8 810.6,589.7 815,590 816.7,595.1 819,600 823.1,601.9 827.4,602.9 831.8,603.6 836,605 840,603.7 844.1,602.7 848,601.1 852,600 854.6,596.1 857,592 861.4,590.3 864.7,586.7 868.4,583.7 873.4,583.1 877,580 880.8,576.8 884.8,573.8 887.7,569.7 892,567 892.6,562.7 891.9,558.5 891.2,554.3 891,550 891.5,546 892.4,542 893,538 896.8,536.3 900.5,534.6 904.1,532.6 908.5,532.3 912,530 916,528 920,526 924,524.1 927.3,520.6 932,520 934.6,516.6 937,513 938.3,508.9 939.9,504.9 941.5,501 943,497 945,492.5 948.4,488.8 950.1,484 953,480 953.5,475.6 954.6,471.4 956.1,467.3 957,463 959.7,458.1 962,453 964.8,450 967.5,447 971.4,445.1 974,442 978.1,440.5 982.5,441.2 986.6,439.6 990.7,438.4 995,438 998.8,435.1 1003.1,432.8 1007,430 1011.3,430 1015.5,428.9 1019.8,429 1024,428 1028.5,426.1 1032,422.6 1036,420 1033.6,416.1 1032.2,412 1030.5,407.9 1029.5,403.5 1028,399.4 1027,395 1024.9,391.5 1024.2,387.4 1021.3,384.2 1021,380 1018.9,375.2 1019,369.7 1016.6,365 1016.1,360 1015,355 1013.2,350.8 1011.1,346.9 1009.8,342.4 1006.9,338.8 1004.5,335 1003.8,330.5 1003,326 1004.1,320.7 1006,315.6 1010.1,314.8 1014.2,313.7 1018.4,313 1022.6,312.6 1024.4,308.9 1026.6,305.5 1028.6,302 1031.6,299 1034.7,303.4 1037.7,308 1037.8,312 1039,315.9 1039,320 1043,322.9 1046.5,326.7 1051,329 1052.5,332.9 1054,336.7 1049.4,337.9 1045,339.7 1043.1,344 1041.6,348.4 1040.7,353 1034.6,356 1038.2,358.6 1042,360.8 1042.1,365.3 1041.2,369.6 1040.7,374 1042.3,378.7 1043.7,383.4 1046.7,387.1 1048.7,391.3 1051,395.4 1055.2,396.9 1059.3,398.8 1063,401.4 1066.8,399.6 1070.5,397.7 1074.1,395.5 1078,394 1079.8,398.4 1081,403 1085.6,406.6 1090,410.5 1093.9,408.4 1097.9,406.4 1102,404.5 1105,399.9 1108,395.4 1112.1,393.2 1116.4,391.5 1120.5,389.4 1125,386.4 1127.9,391 1131,395.4 1134.9,398.6 1139.2,401.2 1143,404.5 1146.8,402 1151,400.3 1154.7,397.8 1158.7,395.7 1162.2,392.8 1164.8,388.8 1168.2,385.8 1172.6,384 1175.8,381.5 1178.9,378.8 1182.5,376.8 1185.2,373.7 1188,370.8 1191,368 1195.7,366.3 1200.1,364.1 1205,363 1208.2,365.8 1212.2,367.5 1215.4,370.4 1219,372.6 1223.6,371.1 1228.2,369.6 1232.8,368 1235.5,364.7 1237.2,360.9 1239.5,357.4 1242,354 1238,354.3 1234,354.1 1230,354 1234.4,353.7 1238.3,351.5 1242.7,351.1 1246.7,349.4 1244.6,345.4 1242.3,341.6 1239.7,338 1238.3,334.2 1235.2,331.4 1234.1,327.4 1232.9,323.4 1229.5,320.7 1228,317 1225.7,312.8 1223,308.8 1221.4,304.3 1218.2,300.6 1216.6,296 1216.2,290.9 1210.9,289.8 1206.6,287.8 1208.6,280.9 1204.9,278.5 1201.6,275.7 1199,272.4 1195.2,270.1 1192.8,266.7 1191.5,262.3 1189.1,258.8 1186.5,255.5 1182.9,253.1 1180,250 1176.8,247.4 1174.7,244 1174.2,239.3 1172.2,235.8 1167,234.8 1164.3,231.8 1164.4,226.6 1161.1,224.1 1158.5,221 1153,220.3 1151.9,216.1 1149.2,213.1 1147.8,209.1 1142.5,208.3 1144.4,201.6 1140,200 1139.5,195.7 1138.8,191.5 1135.5,187.9 1136.3,183.3 1137.4,178.7 1132.1,175.5 1134,170.7 1133.7,166.4 1130.7,162.7 1132.1,158.1 1129.4,154.3 1129,150 1130.7,145.8 1129.7,141.6 1129.3,137.5 1131.8,133.3 1130.1,129.1 1130.8,124.9 1127.4,120.7 1128.1,116.5 1130.2,112.4 1130.2,108.2" fill="#efeeea"/>
<polygon points="745.5,278 749.6,277.9 753.6,278.7 757.6,276.6 761.7,278 765.8,276.4 769.8,278 773.9,277 777.9,276.8 782,277.4 779.2,281 775.4,284 774.2,288.8 771.1,292.3 768,295.7 764.6,298.8 762.2,302.8 758.3,305.4 756,309.5 760.3,308.7 764.5,307.8 768.8,307.1 773,306 777.4,307.9 782,307.1 786.5,307.3 791,307.3 795.7,305.8 800.1,306.7 804.6,307.8 802.9,311.7 801.9,315.8 801,320 798.6,323.4 796.4,326.8 794.8,330.6 792.4,334 790.2,337.4 788.6,341.2 785.9,344.4 784,348 787,351 782.9,352.8 778.6,353.9 774.3,354.9 770.3,356.8 766,358 770.2,358.4 774.4,358.3 778.6,358.2 782.8,358.8 787,358 792.5,360 797.6,363 800.8,365.6 802.6,369.4 805,372.7 808,375.5 808.7,380.6 810.8,385.3 812.7,390 814,394.2 816.6,397.8 817.5,402.2 819.6,406 821.3,409.8 825.2,412 827.4,415.4 829,419.3 831,422.8 836.2,424.2 835.8,429.4 838,432.8 840.5,436 842.9,439.7 844.9,443.6 847.1,447.4 850.3,450.7 852,454.8 853.4,458.6 855.2,462.2 856.7,466 861.3,464.9 866,464.8 870.6,464 874.2,467 879.1,467.8 883.2,469.9 886.8,473 888.2,477.6 887.4,482.5 889,487 887.4,491.7 885.5,496.4 884.2,501.2 882,505.7 880.1,510.5 878.2,515.4 875,519.6 878,522.8 880.9,525.9 884,529 881.5,532.5 878.3,535.3 875,538 871.2,540.1 867,541.5 862.9,543.1 859,545 854.9,543.9 850.7,543.3 846.5,543 842.3,542.4 838,542.8 834.6,545.3 830.8,546.8 826.6,547.7 823.2,550 819.6,552 815,551.6 810.3,552.9 805.7,552.4 801.3,549.9 796.6,549.8 792,549.7 787.7,550.3 783.4,550.8 779.1,552.2 774.6,550.9 770.3,550.8 766,552 762.5,554.9 760.4,559 757.7,562.6 754.8,566 750.7,568.3 745.8,567 741.3,567.6 737.6,571.1 733,571.3 728.7,572.7 724.5,574.5 720,575 715,574.6 710.6,572.2 706,570.6 709.8,567.4 712.4,563 716.2,559.8 720,556.7 721.8,552.3 726.9,551.8 729.8,548.6 732.8,545.6 736,542.8 738.9,539.3 741.7,535.7 745,532.4 748,529 752.6,528.3 757.2,528 761.8,527.8 766.4,527.5 771.1,528.3 775.6,526.6 776.6,522.5 778.6,518.9 780,515 776.3,516.7 772.6,518.5 768.7,519.6 763.5,519.2 759.5,515.8 754.5,515 750,512.7 745.7,512.5 741.6,510.8 737.2,511.2 733.1,509.6 728.9,508.8 724.7,508 727,501 731.2,499.2 735.1,497 738.1,493.4 742.7,492.3 746.1,489.3 750,487 751.3,482.5 752.4,478 754.2,473.6 755,469 750.8,468.9 746.8,467.4 742.8,466.2 738.6,466 742.3,463.6 746.6,462 750,459 746.8,456.2 744.1,452.9 741,450 745.3,448.9 749.6,448.2 753.8,447.1 758.2,447.2 762.6,447.1 766.8,445.8 771.4,447 775.6,445.5 777,441.1 776.6,436.4 778,432 776,427.2 773.4,422.6 771,418 769.4,414 768.5,409.6 766,406 769.2,401.2 771.6,396 767.5,396.1 763.4,396.5 759.4,398.6 755.2,396.8 751.1,398.2 747,398 743,396.3 739,394.6 735,393 737,389 739.1,385 739.8,380.6 741.4,376.5 742,372 744.4,366.8 747,361.6 742.8,361.5 738.6,361.6 735.1,364.7 733.1,369.2 728.2,371.1 726.5,375.9 723,379 723.2,374.7 726.5,371.2 728,367.3 727.2,362.7 728.4,358.6 730,354.7 726.7,351.5 722,351.1 717.6,350.4 714,347.7 716.5,344.5 720.1,342.3 722.3,338.8 724.7,335.6 719.5,334 723.2,330.7 726.9,327.3 730,323.4 730.1,318.9 729,314.4 727.7,310 728.7,305.4 728,300.9 731.8,298.2 736,296.3 740,294 742.2,290.3 743,286.1 744.2,282" fill="#efeeea"/>
<polygon points="656,397.8 659.5,394.2 663.2,390.8 666.4,387 670.7,385.9 674.3,382.9 678.8,382.1 683.3,381.4 687,378.7 691.4,381.5 696,383.9 700.8,383.5 705.5,383.5 710.2,382.7 715,383.9 717,387.8 717.8,392.2 720,396 721.8,400 723.9,403.9 725.4,408 722.1,412.2 718.5,416 715,420 709.8,422.8 704.6,425.6 705.5,430.1 706.4,434.7 705.8,439.4 705.6,444 707.9,448.4 708,453 707.7,457.7 706.4,462.3 706.3,467 705.1,471.9 703,476.4 701,481 699.4,485.4 697.6,489.8 693.4,490 689.3,490.7 685.2,491.4 680.9,491 676.8,491.5 672.7,493.9 668.5,495.9 664.2,497.8 659.4,498.5 655,499 650.9,501.2 646.3,500.9 642,502 638.1,503 634.2,504.3 630.6,506.3 626.9,507.9 623,509 618.3,507.2 613.6,505.7 609,503.7 611.6,500.5 615.2,498.2 617.8,495 613.2,495.4 608.5,494.3 603.9,495 604.9,489.8 605.6,484.6 609.6,482.1 613.8,480.1 617.8,477.6 619.7,473.4 621,469 624.9,466.7 629.1,465.2 633.4,463.8 635.2,459.5 637.9,455.7 640,451.6 636.3,449.6 632.4,448.1 628.4,446.9 624.7,445 621,443 619.5,436 623.9,433.4 627.9,430.4 631.7,427 629.1,423.5 626.5,420 626.9,414.9 628,410 632.1,411.1 636.4,411.5 640.6,412.2 644.6,413.8 649,413.4 651.1,409.7 652,405.4 653.8,401.5" fill="#efeeea"/>
<polygon points="1042,357 1047.2,354.9 1052,352 1056.3,354.1 1060.5,356.3 1065,358 1065.7,362.7 1066.7,367.3 1067,372 1062.9,373.9 1058.7,375.4 1055,378 1050.1,374.9 1045,372 1043.5,367.1 1042.9,362" fill="#efeeea"/>
<polygon points="1074,342 1078,341.2 1082,340.8 1086,340 1089.8,343.3 1094,346 1093.3,350.9 1094.8,355.5 1095.7,360.2 1096,365 1094.6,370 1093.3,375 1092,380 1088.7,382.8 1085.3,385.3 1082,388 1079,383 1076,378 1073.9,373.7 1073.3,368.9 1071.4,364.5 1070,360 1070.5,355.4 1072.3,351.1 1072.8,346.5" fill="#efeeea"/>
<polygon points="1137,361 1143,359 1146,364 1140,367" fill="#efeeea"/>
<polygon points="706,282 716,279 724,281 722,290 714,297 707,296 710,289" fill="#efeeea"/>
<polygon points="709,304 716,303 724,309 722,318 713,321 710,313" fill="#efeeea"/>
<polygon points="697,304 703,305 702,309 697,308" fill="#efeeea"/>
<polygon points="697,313 701,313 700,318 697,317" fill="#efeeea"/>
<polygon points="707,360 716,357 723,362 720,370 710,369" fill="#efeeea"/>
<polygon points="726,338 733,336 736,342 730,346 725,344" fill="#efeeea"/>
<polygon points="777,265 783,262 789,266 786,271 779,270" fill="#efeeea"/>
<polygon points="812,220 815,220 817,230 818,240 815,241 813,230" fill="#efeeea"/>
<polygon points="719,180 726,178 728,182 722,184" fill="#efeeea"/>
<polygon points="724,188 727,188 727,192 724,191" fill="#efeeea"/>
<polygon points="723,196 725,196 725,199 723,199" fill="#efeeea"/>
<polygon points="738,413 745,411 750,418 745,423 739,421" fill="#efeeea"/>
<polygon points="790,611 796,610 797,614 791,615" fill="#efeeea"/>
<polygon points="961,451 969,447 971,449 962,455" fill="#efeeea"/>
<polygon points="975,441 990,438 990,441 976,444" fill="#efeeea"/>
<polygon points="1004,434 1018,432 1017,435 1005,437" fill="#efeeea"/>
<polygon points="1151,323 1158,316 1160,320 1153,330" fill="#efeeea"/>
<polygon points="1216,710.4 1202.5,720.6 1197.4,730.8 1204,744.5 1206,758 1211,770 1218,782 1231.5,788.7 1245,795.5 1255,809 1262,822.7 1269,837 1372,837 1372,800.6 1355.7,793.8 1338.7,785.3 1321.6,778.5 1304.6,773.4 1287.6,763.2 1279,754.7 1270.6,739.3 1255.3,727.4 1245,724 1243.4,741 1235,732.5 1229.8,719 1224.7,708.7" fill="#abc6f1"/>
<polygon points="1071,837 1086,821 1104,806 1112,793 1123,789 1145,793 1160,798 1163,813 1170,837" fill="#abc6f1"/>
<polygon points="1058,253.6 1065,243.9 1074.7,242.5 1084.4,252.2 1077.5,260.5 1067.8,268.9 1059.4,271.7 1058,263.3" fill="#abc6f1"/>
<polygon points="1095,256 1098,255 1099,268 1097.5,285 1095.5,284 1094,268" fill="#abc6f1"/>
<polygon points="1062,201 1073,204 1072,206 1063,203.5" fill="#abc6f1"/>
<polygon points="1001,202 1005,203 1020,216 1019,220 1010,212 1004,210" fill="#abc6f1"/>
<polygon points="1104,233 1118,228 1123,227 1121,234 1106,237" fill="#abc6f1"/>
<polygon points="1094,242 1111,240 1110,243 1096,245" fill="#abc6f1"/>
<polygon points="1028,123 1044,132 1043,134 1029,127" fill="#abc6f1"/>
<polygon points="1028,146 1054,156 1052,158 1030,151" fill="#abc6f1"/>
<polygon points="1004,115 1008,117 1007,121 1003,119" fill="#abc6f1"/>
<polygon points="1104,272 1116,279 1114,283 1105,278" fill="#abc6f1"/>
<polygon points="1094,307 1100,310 1099,314 1094,311" fill="#abc6f1"/>
<polygon points="1114,314 1122,318 1120,321 1114,318" fill="#abc6f1"/>
<polygon points="1030,693 1045,688 1050,691 1040,697 1032,698" fill="#abc6f1"/>
<polygon points="1062,651 1072,648 1076,652 1066,655" fill="#abc6f1"/>
<polygon points="822,752 830,759 838,777 846,787 842,790 834,781 826,769 822,762" fill="#abc6f1"/>
<polygon points="823,790 829,792 828,797 823,796" fill="#abc6f1"/>
<polygon points="966,455 975,447 983,452 980,466 972,470 967,463" fill="#abc6f1"/>
<g fill="none" stroke="#abc6f1" stroke-width="2" stroke-linecap="round"><polyline points="982,121 992,119 998,124"/><polyline points="970,133 980,134 990,139"/><polyline points="950,150 962,148 972,152"/><polyline points="936,163 948,165 958,170"/><polyline points="920,178 932,176 944,182"/><polyline points="915,188 930,186 944,190"/><polyline points="916,202 932,203 946,201 958,206"/><polyline points="942,197 950,205 956,213"/><polyline points="924,222 940,222 954,226"/><polyline points="930,246 944,246 956,250"/><polyline points="928,236 938,234 946,238"/><polyline points="722,318 730,322 738,325"/><polyline points="725,338 736,336 744,340"/><polyline points="720,355 732,356 742,352"/><polyline points="733,300 742,303 750,301"/></g>
<ellipse cx="904" cy="628" rx="8" ry="6" fill="#dfe8c9"/>
<ellipse cx="921.5" cy="683" rx="9.5" ry="7" fill="#dfe8c9"/>
<ellipse cx="967" cy="687.5" rx="6" ry="11.5" fill="#dfe8c9"/>
<ellipse cx="987" cy="656" rx="7" ry="8" fill="#dfe8c9"/>
<ellipse cx="1038.5" cy="635" rx="10.5" ry="22" fill="#dfe8c9"/>
<ellipse cx="1021" cy="718.5" rx="7" ry="8.5" fill="#dfe8c9"/>
<ellipse cx="910" cy="748.5" rx="9" ry="10.5" fill="#dfe8c9"/>
<ellipse cx="834.5" cy="802" rx="11.5" ry="34" fill="#dfe8c9"/>
<ellipse cx="1016.5" cy="717" rx="8.5" ry="9" fill="#dfe8c9"/>
<ellipse cx="1017" cy="784.5" rx="13" ry="21.5" fill="#dfe8c9"/>
<ellipse cx="1025" cy="817" rx="13" ry="7" fill="#dfe8c9"/>
<ellipse cx="966.5" cy="689" rx="6.5" ry="9" fill="#dfe8c9"/>
<ellipse cx="965.5" cy="756.5" rx="5.5" ry="6.5" fill="#dfe8c9"/>
<ellipse cx="1245" cy="630" rx="15" ry="10" fill="#dfe8c9"/>
<ellipse cx="1305" cy="690" rx="15" ry="10" fill="#dfe8c9"/>
<path d="M1000 732 995 737 989 742 M1092 756 1083 749 1080 737 M1001 516 1001 519 1002 521 M1156 730 1158 742 1157 754 M757 653 762 658 768 663 M1019 580 1017 581 1014 581 M1172 397 1180 398 1189 398 M998 702 1008 703 1017 699 M1100 451 1092 452 1085 455 M919 568 922 561 925 555 M999 451 996 452 993 454 M968 509 967 507 967 504 M966 741 978 742 989 742 M853 605 863 612 865 624 M1080 821 1072 816 1065 811 1058 805 M876 649 885 651 893 652 M617 484 614 490 612 496 M1369 662 1363 667 1356 672 M1191 727 1201 726 1201 726 M1276 313 1267 308 1258 302 M1345 525 1343 530 1345 537 M975 507 971 505 970 501 M1028 371 1028 382 1025 393 M1318 512 1319 519 1323 524 M1270 538 1272 544 1275 550 M1126 647 1136 639 1138 627 M661 433 653 428 645 422 M976 527 978 526 981 527 M1300 671 1296 678 1292 684 M1080 439 1086 440 1091 443 M853 531 855 533 857 535 M1003 803 997 795 992 786 M930 536 930 533 929 531 M1071 570 1078 578 1086 582 1096 581 M1014 517 1018 517 1022 518 M1297 766 1289 765 1288 765 M709 383 710 383 716 386 M1327 713 1318 710 1310 715 M1009 570 1012 570 1014 571 M1329 592 1331 585 1336 579 M888 610 890 613 893 615 M843 535 839 535 835 536 M904 666 908 672 911 679 M1324 541 1327 549 1326 558 M846 520 842 519 838 519 M749 545 752 539 754 533 M988 544 989 547 989 550 M970 445 971 447 972 449 M778 468 781 464 783 460 M915 693 919 702 922 711 923 720 M863 529 860 532 857 535 M809 527 816 525 822 522 M1085 510 1085 504 1089 499 M1042 826 1035 830 1029 835 M969 445 970 445 M1051 720 1049 711 1042 704 M812 412 807 404 802 396 M900 694 905 686 911 679 M1314 560 1308 558 1301 558 M998 473 996 474 994 476 M939 734 939 725 941 716 M915 748 904 747 894 749 M1108 542 1110 547 1116 549 M995 545 993 542 990 539 M923 720 930 710 931 698 M726 408 723 407 716 405 M1214 835 1204 836 1194 837 M1281 387 1270 391 1261 399 M812 448 809 449 805 450 M1028 510 1025 511 1022 510 M1029 499 1027 502 1027 505 M993 460 992 463 990 466 M1138 785 1141 775 1147 766 M988 457 986 455 984 453 M918 610 919 606 922 604 M1083 491 1085 486 1085 480 M799 484 802 489 803 495 M1073 417 1082 415 1091 415 M1352 314 1361 313 1369 316 M843 535 843 532 843 528 M1001 667 1010 666 1019 663 1028 661 M999 635 1000 643 1003 651 M1031 371 1035 375 1042 382 1048 389 1051 398 M1336 543 1330 543 1324 541 M889 482 886 486 M1005 465 1003 467 1001 469 M736 648 730 646 M1213 810 1218 817 1223 823 M1091 415 1094 422 1096 430 M978 464 979 461 983 459 M984 728 987 735 989 742 M976 460 977 458 978 456 M1337 462 1328 458 1321 452 M807 482 807 489 803 495 M824 424 832 425 834 425 M902 637 898 635 895 631 M1116 632 1118 625 1122 619 M984 728 974 734 966 741 M951 636 958 632 966 631 M1040 678 1052 679 1064 682 M1006 531 1006 534 1005 537 M958 707 946 706 941 716 M1001 534 1000 537 997 539 M904 666 895 666 886 665 M944 550 947 549 950 549 M973 513 971 511 968 509 M1144 553 1147 560 1154 564 M1197 570 1185 571 1174 575 M1235 678 1239 672 1245 667 M983 497 985 495 986 492 M1277 668 1283 659 1283 649 M1348 657 1346 646 1349 636 M1279 707 1266 708 1253 710 M1292 619 1290 627 1289 635 M1369 680 1362 677 1356 672 M1095 794 1088 800 1080 804 M1268 727 1274 731 1282 735 M1121 401 1128 396 1131 393 M771 462 775 465 778 468 M1029 542 1026 536 1027 530 M853 531 852 528 849 526 M1357 402 1346 405 1335 410 M887 495 886 486 M1159 577 1154 578 1149 578 M1357 535 1352 529 1345 525 M1311 547 1317 544 1324 541 M887 570 887 570 M891 566 892 565 898 562 M717 385 716 386 M811 470 809 467 806 465 M930 536 932 537 935 538 M939 534 941 535 944 535 M1282 452 1274 447 1266 444 M973 546 970 545 967 546 M998 502 995 505 992 505 M1148 485 1150 490 1149 496 M990 584 991 581 990 578 M704 383 703 387 707 395 M1151 506 1157 510 1164 511 M984 513 983 510 982 507 M822 455 817 452 812 448 M1275 409 1267 405 1261 399 M998 473 999 476 999 480 M1309 776 1309 775 1312 768 M1149 578 1148 586 1149 593 M878 692 889 693 900 694 M1007 523 1005 522 1002 521 M1121 494 1125 498 1130 500 M1318 408 1326 409 1335 410 M1232 708 1229 719 M1231 725 1234 730 M1051 398 1046 402 1041 406 M1078 550 1073 544 1066 539 M1018 506 1021 508 1022 510 M971 571 973 570 975 568 M1348 657 1345 665 1342 673 M946 695 945 687 946 680 M909 610 907 611 904 613 M1002 578 1003 576 1005 574 M1144 612 1141 608 1142 603 M750 514 754 509 759 505 M1070 517 1066 512 1060 512 M1041 406 1033 400 1026 394 M815 538 814 548 812 552 M1018 506 1020 503 1022 502 M1037 776 1045 772 1051 765 M685 401 691 397 694 391 M1080 821 1081 813 1080 804 M995 545 995 542 997 539 M1131 459 1137 456 1143 453 M1348 657 1338 655 1332 646 M617 484 626 487 634 493 M667 415 668 426 674 434 M1297 766 1305 765 1312 768 M993 471 992 468 990 466 M702 477 701 483 M1157 468 1151 469 1146 472 M1002 570 1000 568 999 566 M1329 592 1337 591 1344 596 M1164 511 1171 515 1177 520 M962 501 960 498 958 496 M962 683 954 680 946 680 M924 806 927 814 927 822 M1080 821 1080 829 M1352 355 1347 363 1341 370 M1326 765 1322 776 1322 780 M1073 482 1079 480 1085 480 M1151 506 1155 502 1160 499 M792 485 788 484 784 482 M973 513 975 510 975 507 M910 601 912 603 913 605 M1112 474 1110 468 1106 463 M1146 540 1141 537 1137 533 M823 512 826 512 830 512 M988 457 989 454 990 451 M999 480 1001 482 1000 485 M642 476 638 470 636 462 M806 383 811 382 M1275 409 1279 417 1283 425 M1366 761 1368 748 1370 735 M791 453 792 458 793 463 M1010 605 1013 601 1014 595 M1043 517 1041 515 1038 514 M1158 481 1164 481 1171 478 M1035 526 1039 526 1043 529 M1006 551 1006 547 1010 545 M912 535 909 535 907 534 M868 534 866 531 863 529 M1269 637 1262 641 1256 646 M1041 606 1036 598 1032 590 M779 672 788 670 797 669 M951 636 953 645 954 654 M1138 627 1143 626 1148 625 M1245 484 1236 487 1227 488 M805 702 812 704 818 708 M1357 380 1364 385 1372 389 M1260 576 1250 579 1239 578 M1144 612 1149 618 1148 625 M958 550 958 553 958 556 M907 728 905 720 902 713 M1323 524 1317 527 1310 528 M1243 637 1251 640 1256 646 M1138 785 1129 780 1124 770 M752 493 756 498 759 505 M1272 296 1265 299 1258 302 M877 805 874 797 874 789 M967 582 968 584 969 587 M1186 677 1178 676 1170 678 M991 516 993 513 994 510 M1035 526 1037 523 1037 520 M1037 520 1034 517 1031 516 M1014 571 1014 567 1015 563 M1164 511 1164 504 1160 499 M794 551 803 543 815 538 M1096 430 1089 428 1083 426 M1080 737 1081 749 1078 761 M1030 616 1043 619 1054 628 M1006 495 1007 493 1008 490 M1016 637 1020 650 1028 661 M786 389 787 379 788 369 M967 453 969 450 972 449 M961 474 964 474 966 472 M1073 482 1068 475 1061 471 M1242 297 1241 305 1239 314 M678 468 683 474 686 481 M1078 634 1068 639 1062 648 M955 545 953 547 950 549 M1002 578 1005 582 1009 582 M1144 438 1140 446 1143 453 M1113 499 1117 505 1118 512 M810 633 817 639 822 647 825 655 M1243 637 1238 629 1230 623 M1047 663 1038 659 1028 661 M1165 782 1166 790 1163 798 M900 694 897 687 893 681 M967 504 968 502 970 501 M1008 563 1009 567 1009 570 M1001 684 1008 693 1017 699 M857 535 857 539 859 542 M936 548 938 551 939 554 M1051 720 1059 714 1067 706 M1206 638 1203 648 1201 657 M883 827 875 829 867 830 M944 505 943 502 943 500 M877 805 866 809 855 816 M1112 531 1106 533 1101 534 M1254 518 1258 523 1262 527 M1172 397 1165 392 1164 390 M1080 737 1074 730 1068 724 M981 796 988 792 992 786 M775 441 775 441 M774 426 773 421 M1080 539 1084 536 1089 533 M937 651 928 648 919 646 M1311 627 1308 617 1311 607 M807 482 805 478 801 475 M1260 576 1266 570 1274 570 M736 631 740 632 749 638 M1255 502 1245 503 1235 506 M966 460 965 458 963 456 M1308 648 1302 653 1296 657 M1121 401 1124 406 1129 410 M1129 512 1127 518 1126 524 M1006 485 1007 488 1008 490 M1092 607 1084 605 1075 605 M995 465 994 462 993 460 M968 648 967 639 966 631 M789 471 783 471 778 468 M975 580 978 579 981 577 M1057 496 1057 489 1056 482 M899 609 902 606 903 601 M761 363 761 372 761 380 M1218 370 1217 371 M1177 790 1184 782 1187 772 M866 663 869 671 876 676 M1009 826 1004 815 1003 803 M930 546 931 549 931 551 M1000 495 1000 499 998 502 M1234 730 1234 733 M955 564 953 566 951 568 M1146 472 1147 479 1148 485 M825 820 820 814 819 814 M1012 534 1009 531 1009 527 M1297 703 1293 710 1291 717 M656 473 655 464 655 456 M1008 469 1007 470 1005 472 M985 772 994 778 1005 779 M1353 574 1360 569 1365 563 M835 711 842 706 848 702 M741 389 734 393 734 393 M998 490 996 488 995 486 M1086 559 1082 555 1078 550 M1272 296 1279 292 1288 290 M962 527 959 527 957 528 M1366 799 1367 798 1371 792 M775 400 779 405 781 411 M958 550 961 549 963 548 M947 497 950 498 953 500 M1235 678 1237 687 1241 695 M1323 727 1323 740 1319 751 M1130 548 1123 550 1116 549 M1269 637 1275 644 1283 649 M1005 442 1008 444 1011 444 M987 462 988 464 990 466 M1152 715 1141 710 1131 705 M839 479 833 478 826 478 M1231 590 1229 598 1227 605 M765 672 765 670 768 663 M1344 596 1340 588 1336 579 M978 551 982 552 985 553 M853 642 843 643 833 643 M920 535 921 537 922 540 M954 654 945 654 937 651 M963 492 965 494 965 498 M964 511 965 514 965 517 M1006 551 1008 553 1011 553 M1040 678 1035 684 1034 691 M1296 409 1287 414 1283 425 M1121 494 1126 488 1134 486 M991 555 991 552 989 550 M1322 679 1324 670 1322 661 M988 510 984 510 982 507 M698 426 701 420 705 414 M1002 578 1005 577 1009 577 M1031 714 1022 708 1017 699 M1204 797 1198 809 1195 822 M732 497 729 499 726 500 M1295 528 1289 525 1283 522 M839 610 833 604 830 602 M1212 572 1211 566 1213 560 M1292 305 1297 311 1302 319 M1187 454 1182 449 1175 447 M1119 570 1128 570 1135 565 M787 500 794 496 803 495 M679 446 683 438 686 430 M957 668 957 661 954 654 M1210 426 1221 429 1233 430 M1116 793 1116 793 M1069 620 1070 612 1075 605 M998 458 995 458 993 460 M1369 680 1360 686 1356 696 M1359 523 1357 515 1352 508 M752 493 744 500 737 509 M1010 476 1012 478 1015 479 M1019 580 1021 582 1021 585 M883 827 888 822 895 816 M853 836 844 836 835 831 M948 509 947 512 947 515 M1224 311 1220 300 1216 291 M1047 419 1054 420 1061 419 M1191 727 1193 718 1191 709 M775 552 768 549 762 544 M736 648 729 654 727 656 M1345 767 1348 760 1350 753 M776 552 781 546 784 538 M1365 563 1359 561 1354 557 M995 545 994 548 995 552 M1197 570 1197 578 1195 587 M849 740 848 728 852 717 M834 768 839 779 843 790 M1163 588 1164 595 1165 602 M795 406 800 401 802 396 M1006 587 1007 585 1009 582 M1196 542 1186 541 1177 541 M1319 751 1316 760 1312 768 M971 470 971 474 971 478 M1080 439 1072 440 1065 443 M1012 723 1012 710 1017 699 M761 473 765 478 764 485 M1007 452 1004 449 1002 445 M1092 607 1089 615 1086 622 M937 530 936 527 933 526 M694 391 692 384 687 378 M1128 587 1133 585 1138 581 M706 460 708 458 M959 479 960 477 961 474 M924 624 928 621 931 618 M1091 415 1088 421 1083 426 M989 474 990 470 990 466 M1096 552 1103 555 1108 559 M1080 821 1072 825 1066 832 M771 462 766 468 761 473 M1241 695 1247 703 1253 710 M1065 443 1058 443 1053 441 M956 730 961 736 966 741 M1270 360 1259 356 1247 355 M1261 341 1260 330 1262 318 M1204 797 1197 798 1189 799 M1135 565 1136 573 1138 581 M1297 703 1288 707 1279 707 M977 518 976 520 974 522 M813 722 815 729 M827 727 824 735 822 736 M1066 749 1057 756 1051 765 M969 495 970 498 970 501 M1041 754 1031 751 1021 750 M1267 514 1275 519 1283 522 M1047 523 1046 527 1043 529 M939 793 946 798 953 803 M629 504 632 507 M983 497 984 501 986 503 M924 550 925 548 925 545 M1095 794 1099 785 1108 780 M994 448 993 445 990 443 M1330 435 1318 432 1307 427 M1008 490 1010 491 1013 491 M707 395 712 399 716 405 M971 563 968 563 965 563 M953 524 955 526 957 528 M752 493 747 489 746 488 M1342 673 1349 672 1356 672 M898 583 897 589 898 596 M1372 416 1367 402 1372 389 M1366 761 1358 757 1350 753 M1277 668 1287 663 1296 657 M1283 425 1275 435 1266 444 M899 618 896 617 893 615 M1029 555 1023 560 1015 563 M939 793 930 789 921 790 M965 483 963 486 961 487 M1364 456 1358 449 1351 444 M731 556 736 562 740 568 M1216 547 1214 553 1213 560 M1187 553 1193 553 1199 555 M1222 524 1216 524 1211 521 M979 472 980 475 981 479 M1162 420 1164 428 1170 435 M846 506 846 510 844 514 M1279 707 1279 698 1278 689 M882 633 888 642 893 652 M958 496 956 494 953 491 M1176 613 1169 609 1165 602 M1079 676 1089 677 1099 677 M1134 486 1134 491 1138 494 M1073 417 1071 423 1071 429 M846 506 850 508 853 512 M995 534 993 532 992 531 M1362 717 1354 718 1346 720 M682 416 676 411 673 404 M1255 548 1250 555 1244 560 M1001 527 1004 529 1006 531 M1008 469 1011 470 1013 472 M762 632 756 635 749 638 M1151 506 1145 507 1140 508 M1267 514 1260 515 1254 518 M841 497 848 494 854 489 M990 592 988 589 986 586 M1236 375 1227 371 1221 371 M1219 371 1217 371 M995 602 997 597 1000 592 M1021 750 1018 758 1019 768 M752 667 753 661 757 653 M1262 318 1269 316 1276 313 M1101 634 1093 643 1084 650 M971 577 971 574 971 571 M823 512 824 515 826 519 M1071 429 1076 426 1083 426 M940 601 945 607 953 608 M1057 430 1057 424 1061 419 M1195 822 1191 810 1189 799 M1232 805 1237 812 1239 820 M891 544 894 543 900 538 M1186 677 1187 687 1182 695 M1003 559 1008 557 1011 553 M1089 533 1086 528 1084 522 M812 662 819 659 825 655 M948 554 949 551 950 549 M1328 394 1316 394 1304 392 M1236 411 1244 418 1252 426 M850 455 843 455 838 452 M990 592 993 592 995 590 M981 479 982 481 983 483 M1062 648 1073 647 1084 650 M936 516 935 518 934 520 M761 473 758 466 755 458 M686 481 678 483 670 484 M1164 511 1168 506 1171 500 M1268 727 1260 725 1252 726 M1019 524 1016 524 1013 524 M991 438 991 440 990 443 M1159 535 1168 537 1177 541 M1147 517 1143 513 1140 508 M1324 300 1335 297 1347 296 M968 611 972 600 974 589 M850 455 851 452 M605 485 608 490 612 496 M1028 510 1031 510 1034 511 M1003 477 1001 478 999 480 M985 772 990 778 992 786 M1318 408 1311 400 1304 392 M682 416 688 408 697 404 M1001 527 1004 525 1007 523 M1197 570 1205 568 1212 572 M1129 512 1129 506 1130 500 M1165 522 1156 521 1147 517 M986 579 983 581 980 584 M1029 816 1036 812 1042 807 M1052 574 1055 584 1060 594 M1258 661 1252 664 1245 667 M1007 523 1008 525 1009 527 M1124 770 1135 767 1147 766 M822 533 826 532 829 533 M1232 805 1240 802 1249 801 M1254 518 1247 519 1242 516 M1254 679 1255 688 1261 694 M721 415 720 412 716 405 M1218 453 1210 458 1203 464 M774 529 777 523 781 518 M1324 698 1330 693 1335 687 M1364 456 1365 468 1367 479 M1318 408 1321 400 1328 394 M912 631 913 634 914 638 M1342 740 1347 731 1346 720 M1061 471 1059 476 1056 482 M961 462 959 464 958 467 M1130 548 1138 549 1144 553 M966 575 965 579 967 582 M1235 506 1224 503 1212 500 M1013 499 1010 501 1008 502 M968 805 963 816 964 828 M1222 524 1228 526 1234 526 M812 448 812 454 813 460 M1012 559 1012 556 1011 553 M999 451 996 450 994 448 M1252 726 1252 718 1253 710 M1192 529 1193 523 1194 517 M978 551 978 554 978 556 M1016 637 1007 637 999 635 M936 615 935 609 931 604 M1260 576 1254 585 1246 594 M978 551 977 547 978 543 M1017 498 1020 500 1022 502 M986 503 982 503 978 503 M839 479 847 483 854 489 M989 648 978 649 968 648 M968 805 960 804 953 803 M989 474 986 474 984 475 M803 591 802 591 M685 401 679 401 673 404 M1269 470 1275 478 1283 483 M700 452 706 452 709 453 M1249 801 1241 809 1239 820 M998 458 995 456 993 454 M811 470 813 473 815 477 M1009 512 1006 510 1004 507 M976 563 977 560 978 556 M1113 441 1113 435 1114 429 M775 441 783 439 791 435 M1107 652 1104 643 1101 634 M899 609 902 611 904 613 M1297 766 1295 758 1297 749 M1022 510 1024 508 1027 505 M907 633 905 631 902 630 M1206 638 1194 632 1188 620 M1289 500 1280 500 1272 497 M802 429 807 420 812 412 M1232 805 1223 808 1213 810 M1018 506 1015 506 1012 506 M1336 579 1331 574 1324 570 M1073 417 1074 410 1074 403 M1175 731 1176 719 1174 708 M908 828 917 824 927 822 M1175 731 1175 742 1172 752 M1188 436 1193 427 1199 418 1202 408 M1177 490 1174 484 1171 478 M1324 300 1317 299 1309 299 M856 506 855 509 853 512 M661 433 656 438 653 443 M1100 451 1104 457 1106 463 M1365 583 1353 588 1344 596 M1305 353 1293 352 1282 348 M974 589 976 586 980 584 M971 478 974 477 976 475 M1139 592 1140 597 1142 603 M973 513 971 513 968 514 M1008 469 1009 466 1009 462 M998 442 996 445 994 448 M1037 520 1038 517 1038 514 M986 579 988 579 990 578 M1222 524 1228 514 1235 506 M990 584 993 587 995 590 M1051 455 1051 448 1053 441 M798 469 802 466 806 465 M981 560 978 561 976 563 M694 465 689 463 685 460 M1258 661 1257 653 1256 646 M993 481 991 482 989 484 M617 484 611 484 605 485 M1202 408 1196 403 1189 398 M1271 615 1262 621 1256 629 M812 662 805 666 797 669 M725 575 724 574 725 567 M1072 345 1081 344 M815 538 812 532 809 527 M1152 715 1151 704 1155 694 M1255 822 1247 820 1239 820 M685 401 691 403 697 404 M882 526 881 528 880 534 M1292 305 1288 298 1288 290 M700 452 702 457 706 460 M1096 662 1091 655 1084 650 M1112 740 1104 739 1097 741 M1140 508 1138 501 1138 494 M946 491 948 491 M803 592 803 591 M656 473 649 474 642 476 M939 666 938 659 937 651 M1121 494 1122 489 1123 484 M1232 805 1239 796 1241 792 M946 695 938 698 931 698 M860 469 867 466 874 464 M1154 401 1148 404 1143 409 M975 535 978 536 980 536 M771 462 777 461 783 460 M966 741 965 730 971 721 M984 453 984 456 983 459 M745 450 745 455 M745 461 744 468 M1223 664 1235 662 1245 667 M941 514 939 515 936 516 M884 775 891 780 898 783 M986 558 983 559 981 560 M952 556 952 558 952 561 M890 550 893 554 898 562 M1044 511 1043 508 1043 504 M802 429 796 426 790 422 M794 706 796 705 805 702 M1275 750 1285 746 1297 749 M1345 537 1338 535 1333 532 M965 558 963 555 964 552 M774 529 768 526 M834 768 839 761 842 753 M912 535 916 536 920 535 M1324 570 1325 564 1326 558 M890 797 881 795 874 789 M690 444 687 438 686 430 M980 536 981 539 983 542 M926 526 925 528 924 531 M968 509 966 510 964 511 M1129 429 1132 424 1137 421 M1324 300 1330 307 1339 309 M839 511 839 515 838 519 M951 568 949 567 946 566 M875 614 882 611 888 610 M1149 578 1152 571 1154 564 M1030 616 1022 617 1014 621 M1255 822 1251 812 1249 801 M792 485 791 482 792 478 M964 543 960 541 956 539 M1337 462 1342 470 1346 478 M1287 563 1280 566 1274 570 M1071 570 1069 565 1069 559 M984 547 985 550 985 553 M1311 627 1318 617 1325 607 M812 662 805 656 799 649 M1024 588 1022 587 1021 585 M702 469 704 465 706 460 M995 465 992 465 990 466 M1093 377 1095 367 1096 360 M1331 353 1335 345 1338 336 1336 326 M841 626 832 627 824 626 M1024 588 1021 589 1019 591 M886 731 890 740 894 749 M1335 516 1340 520 1345 525 M1031 714 1037 709 1042 704 M1174 418 1168 419 1162 420 M1318 512 1311 515 1303 516 M678 468 671 463 669 454 M852 717 859 727 865 737 M1254 518 1249 522 1246 528 M1325 607 1318 606 1311 607 M1156 730 1149 734 1142 737 M698 426 704 428 706 428 M1101 489 1106 487 1110 486 M1000 592 1003 590 1006 587 M924 624 927 626 930 626 M1341 494 1347 487 1346 478 M838 452 833 447 828 443 M1122 535 1117 533 1112 531 M1174 831 1183 836 1194 837 M1069 503 1066 509 1060 512 M1060 594 1069 597 1075 605 M1112 702 1101 702 1092 707 M985 631 975 630 966 631 M1067 706 1060 698 1053 692 M1042 479 1046 474 1050 469 M1210 622 1220 623 1230 623 M1137 533 1142 530 1148 529 M1260 576 1270 578 1276 586 M859 514 864 517 868 520 M1020 488 1016 486 1013 483 M1331 353 1342 353 1352 355 M1148 625 1150 619 1154 615 M1073 482 1076 488 1083 491 M994 825 986 822 980 817 M1069 620 1062 625 1054 628 M1066 749 1072 755 1078 761 M1255 502 1254 510 1254 518 M757 653 753 646 749 638 M674 434 680 433 686 430 M1327 476 1325 486 1323 495 M1244 328 1240 322 1239 314 M772 508 766 514 763 519 M802 429 810 431 816 436 M1192 529 1184 525 1177 520 M953 512 951 510 948 509 M991 555 992 558 993 561 M1205 535 1199 532 1192 529 M1061 471 1055 471 1050 469 M1172 752 1180 745 1191 746 M1112 474 1111 480 1110 486 M993 481 993 478 994 476 M971 552 975 553 978 556 M971 577 968 576 966 575 M1000 495 996 495 991 496 M1369 316 1365 304 1364 293 M1003 437 1004 439 1005 442 M983 488 987 487 989 484 M902 637 904 635 907 633 M833 643 830 649 825 655 M803 506 802 500 803 495 M961 474 960 470 958 467 M906 805 913 797 921 790 M907 728 896 729 886 731 M665 395 669 400 673 404 M1128 587 1120 584 1112 584 M1030 736 1030 725 1031 714 M1066 832 1060 828 1056 821 M1062 404 1068 404 1074 403 M981 527 981 531 980 536 M944 505 946 505 948 504 M795 685 789 676 779 672 M1132 602 1137 598 1139 592 M1006 495 1009 498 1013 499 M1001 516 1000 513 998 510 M853 545 852 544 M1146 472 1140 472 1134 472 M846 520 844 517 844 514 M832 519 829 518 826 519 M825 548 817 552 816 553 M1000 485 1001 488 1003 490 M629 434 625 440 624 446 M1242 393 1250 389 1256 382 M959 754 962 747 966 741 M1044 499 1043 501 1043 504 M984 518 987 516 991 516 M853 642 849 632 841 626 M931 698 930 688 930 679 M1165 782 1165 774 1164 767 M1182 381 1187 372 1187 370 M1014 621 1005 622 996 619 M1017 498 1016 495 1013 491 M963 532 961 534 958 535 M965 483 962 481 959 479 M1144 438 1150 444 1157 448 M1201 609 1195 615 1188 620 M679 446 685 450 692 452 M755 398 760 390 761 380 M1319 751 1314 742 1308 736 1299 732 M1232 708 1228 699 1225 690 M795 406 803 411 812 412 M1157 448 1165 443 1170 435 M953 512 951 515 950 519 M1016 586 1014 584 1014 581 M1180 814 1187 818 1195 822 M953 500 956 498 958 496 M991 501 992 503 992 505 M954 532 956 530 957 528 M1344 786 1333 782 1330 783 M1188 599 1194 604 1201 609 M1034 464 1037 472 1042 479 M1030 638 1039 639 1046 642 M829 688 827 679 827 670 M823 759 823 758 M973 546 975 544 978 543 M860 469 862 480 872 487 M994 510 996 510 998 510 M1254 679 1249 674 1245 667 M741 389 743 383 748 378 M951 636 944 631 935 630 M1363 614 1366 607 1371 601 M775 400 769 399 M762 398 755 398 M966 575 963 577 959 578 M1009 577 1009 579 1009 582 M905 539 903 538 900 538 M1174 465 1173 472 1171 478 M1004 565 1003 563 1003 559 M1067 784 1067 777 1066 769 M1239 820 1231 822 1223 823 M826 478 824 473 823 467 M1139 592 1144 592 1149 593 M1225 564 1231 557 1235 548 M948 537 949 535 950 533 M743 367 746 372 748 378 M1221 647 1233 645 1243 637 M1318 512 1318 503 1323 495 M772 495 769 489 764 485 M902 637 900 646 893 652 M933 526 930 526 926 526 M1009 462 1010 466 1014 467 M1310 715 1305 724 1299 732 M1102 723 1107 732 1112 740 M853 682 849 692 848 702 M868 534 874 533 880 534 M1144 649 1153 643 1162 638 M981 684 990 692 998 702 M985 470 987 472 989 474 M1323 377 1325 386 1328 394 M976 460 973 462 970 465 M1014 517 1014 521 1013 524 M1264 596 1270 591 1276 586 M782 652 791 651 799 649 M936 516 934 516 934 516 M1137 533 1138 527 1138 520 M1183 645 1192 651 1201 657 M931 618 930 622 930 626 M1013 499 1015 503 1018 506 M1322 679 1329 683 1335 687 M940 539 942 541 945 541 M1026 493 1023 493 1020 493 M1255 548 1245 550 1235 548 M1231 590 1235 584 1239 578 M986 558 989 557 991 555 M958 496 961 494 963 492 M853 531 850 535 848 539 M979 472 981 474 984 475 M1031 714 1021 718 1012 723 M1261 341 1271 346 1282 348 M964 467 966 464 966 460 M910 601 906 601 903 601 M1283 483 1279 491 1272 497 M1124 770 1125 761 1126 752 M1295 375 1297 385 1304 392 M976 447 973 447 970 445 M775 441 780 445 784 448 M917 546 917 549 919 550 M924 624 925 621 924 618 M1035 526 1033 525 1030 525 M801 456 796 459 793 463 M678 468 684 469 690 473 M761 380 754 380 748 378 M964 568 967 569 971 571 M984 547 986 546 988 544 M944 550 940 549 936 548 M825 548 821 541 815 538 M956 539 954 542 951 542 M1073 417 1067 419 1061 419 M629 504 626 509 M1348 657 1352 664 1356 672 M985 470 984 473 984 475 M1223 664 1217 668 1213 674 M1285 598 1298 602 1311 607 M1277 668 1284 677 1292 684 M959 458 959 457 963 456 M964 543 965 545 967 546 M871 751 867 744 865 737 M983 497 981 501 978 503 M919 646 921 641 920 636 M831 462 836 458 838 452 M833 643 841 636 841 626 M1063 667 1063 657 1062 648 M967 453 969 455 971 457 M1253 710 1256 701 1261 694 M1017 699 1026 696 1034 691 M985 553 987 551 989 550 M1302 319 1308 327 1311 336 M899 609 899 614 899 618 M788 369 794 363 797 361 M799 484 800 479 801 475 M1321 321 1329 324 1336 326 M1003 437 1006 437 1009 438 M929 531 926 530 924 531 M983 757 975 749 966 741 M948 537 946 539 945 541 M958 522 958 519 956 517 M948 537 946 535 944 535 M839 610 842 603 842 602 M1204 761 1210 765 M1010 476 1011 474 1013 472 M991 501 992 498 991 496 M1188 436 1187 445 1187 454 M1002 543 1002 546 1001 548 M1357 402 1358 391 1357 380 M968 524 965 526 962 527 M930 542 933 540 935 538 M1172 752 1165 754 1157 754 M918 598 917 603 913 605 M919 646 918 641 914 638 M1371 369 1372 379 1372 389 M800 443 802 446 805 450 M1350 334 1343 330 1336 326 M829 688 820 685 810 682 M1086 591 1081 599 1075 605 M995 534 993 537 990 539 M702 477 704 477 M1129 512 1124 511 1118 512 M1042 704 1036 699 1034 691 M1083 491 1087 495 1089 499 M1007 452 1010 451 1012 449 M1093 691 1085 694 1078 696 M783 460 788 460 793 463 M1095 794 1105 792 1116 793 M1341 564 1339 572 1336 579 M1152 678 1161 675 1170 678 M1163 554 1157 558 1154 564 M1092 707 1085 701 1078 696 M939 534 938 537 935 538 M850 770 844 779 843 790 M1371 369 1369 359 1368 349 M1100 508 1105 513 1110 518 M705 414 701 409 697 404 M784 448 787 441 791 435 M1172 397 1168 402 1165 407 M1256 382 1258 391 1261 399 M1326 765 1332 757 1336 748 1342 740 M1176 613 1174 617 1174 622 M830 525 833 528 835 530 M995 552 997 554 1000 556 M990 443 987 442 985 439 M893 652 887 657 886 665 M971 470 971 468 970 465 M1019 591 1018 588 1016 586 M969 519 968 518 965 517 M1341 494 1347 501 1352 508 M1067 706 1071 699 1078 696 M1303 516 1294 509 1289 500 M653 443 655 450 655 456 M936 548 934 550 931 551 M1058 805 1050 805 1042 807 M1138 399 1138 400 1143 409 M1276 586 1275 578 1274 570 M1029 555 1030 548 1029 542 M1350 334 1352 344 1352 355 M1012 723 1003 720 996 716 M1035 499 1032 499 1029 499 M1204 797 1215 794 1225 791 M716 386 717 387 M958 556 955 557 952 556 M1080 439 1076 433 1071 429 M965 558 969 559 973 559 M934 555 936 554 939 554 M1096 472 1102 469 1106 463 M962 683 967 690 971 699 975 707 M912 535 914 538 917 540 M805 702 801 710 800 714 M650 498 653 501 M725 567 720 561 717 559 M788 631 794 640 799 649 M1126 647 1135 649 1144 649 M1225 564 1219 562 1213 560 M1126 524 1133 524 1138 520 M996 585 995 587 995 590 M815 477 816 481 814 485 M969 519 968 517 968 514 M1107 652 1100 656 1096 662 M1126 647 1121 640 1116 632 M964 568 964 565 965 563 M1165 613 1165 608 1165 602 M1224 311 1225 314 M939 666 943 673 946 680 M995 545 992 544 988 544 M936 615 934 616 931 618 M1073 417 1066 411 1062 404 M970 530 971 534 971 539 M849 740 845 747 842 753 M1026 493 1028 496 1029 499 M1192 529 1195 535 1196 542 M806 383 810 388 815 392 M685 460 688 456 692 452 M1108 542 1102 546 1096 552 M736 648 736 656 737 665 M1292 549 1298 543 1303 537 M1051 455 1050 462 1050 469 M975 499 977 501 978 503 M772 495 763 498 759 505 M1254 612 1244 611 1236 609 1227 605 M772 495 779 498 787 500 M915 693 912 687 911 679 M915 748 914 756 914 765 M1339 309 1338 318 1336 326 M986 446 989 445 990 443 M1162 813 1163 814 M1127 726 1135 732 1142 737 M988 457 987 460 987 462 M1162 638 1155 631 1148 625 M1096 581 1105 581 1112 584 M858 590 860 592 865 596 M1296 409 1303 417 1307 427 M813 722 815 715 818 708 M1085 510 1083 516 1084 522 M1061 471 1065 464 1067 457 M1107 652 1096 647 1084 650 M968 785 966 774 970 764 M1256 629 1255 637 1256 646 M739 666 737 665 M762 544 760 551 755 556 M904 666 900 658 893 652 M678 468 680 463 685 460 M834 768 828 763 823 758 M1096 581 1089 571 1086 559 M1212 500 1220 495 1227 488 M1080 539 1079 545 1078 550 M968 509 968 511 968 514 M1062 404 1060 411 1061 419 M839 610 840 618 841 626 M716 405 706 403 697 404 M1010 590 1013 588 1016 586 M975 580 976 576 977 573 M1012 534 1016 535 1021 537 M946 529 948 531 950 533 M798 469 795 473 792 478 M1054 544 1060 541 1066 539 M985 631 990 624 996 619 M944 550 945 548 947 546 M893 622 894 619 893 615 M841 464 840 471 839 479 M912 535 911 540 910 544 M1235 506 1229 498 1227 488 M1218 453 1223 461 1230 467 M784 482 773 481 764 485 M1020 480 1019 477 1018 475 M971 457 972 453 972 449 M835 711 827 710 818 708 M965 558 961 557 958 556 M787 500 785 509 781 518 M1195 587 1192 593 1188 599 M1204 797 1205 788 1208 779 M865 737 858 744 857 754 M1034 511 1036 512 1038 514 M955 487 954 489 953 491 M878 692 876 684 876 676 M1231 590 1222 580 1212 572 M1041 606 1049 608 1058 608 M1086 559 1078 557 1069 559 M915 693 924 687 930 679 M706 460 708 463 M1067 784 1057 786 1048 789 M690 444 691 449 692 452 M995 534 998 534 1001 534 M941 571 941 568 940 565 M1222 394 1232 392 1242 393 M1000 592 1001 588 1002 585 M1208 779 1196 781 1187 772 M826 478 820 479 815 477 M1341 564 1334 560 1326 558 M1066 769 1071 763 1078 761 M1222 524 1223 532 1225 539 M1182 695 1185 703 1191 709 M965 477 963 475 961 474 M976 460 973 459 971 457 M993 481 994 483 995 486 M948 504 946 501 943 500 M1028 424 1033 425 1044 432 M694 465 692 469 690 473 M907 728 912 737 915 748 M1001 684 991 683 981 684 M930 546 928 546 925 545 M973 546 975 549 978 551 M1252 426 1242 430 1233 430 M1201 609 1205 602 1207 595 M1149 593 1156 590 1163 588 M1006 551 1003 554 1000 556 M731 556 739 548 749 545 M934 555 934 551 936 548 M1101 489 1095 481 1085 480 M1159 535 1162 528 1165 522 M1369 680 1371 691 1370 702 M800 443 795 438 791 435 M835 536 832 534 829 533 M686 481 687 476 690 473 M843 790 851 793 858 793 M959 587 956 598 953 608 M969 519 972 521 974 522 M853 518 849 518 846 520 M968 611 977 606 986 603 995 602 M999 451 1003 452 1007 452 M1177 490 1183 483 1191 478 M1092 756 1100 757 1107 757 M1365 563 1365 556 1363 549 M970 489 966 490 963 492 M795 685 796 677 797 669 M1270 360 1266 351 1261 341 M1020 448 1016 449 1012 449 M993 471 995 468 995 465 M1066 832 1072 836 1073 836 M1223 664 1224 655 1221 647 M936 516 935 514 M1000 485 997 486 995 486 M1001 534 1003 536 1005 537 M964 568 964 572 966 575 M1102 499 1096 499 1089 499 M978 503 976 505 975 507 M956 730 948 733 939 734 M991 501 994 502 998 502 M1113 441 1105 435 1096 430 M925 612 928 609 931 604 M738 512 737 509 M1159 577 1156 571 1154 564 M745 450 742 453 M1287 563 1288 572 1292 580 M918 610 922 610 925 612 M1018 470 1015 471 1013 472 M977 573 976 570 975 568 M946 529 945 532 944 535 M953 500 951 502 948 504 M1311 627 1301 623 1292 619 M702 477 702 473 702 469 M1292 549 1289 542 1284 536 M1329 592 1318 595 1308 592 M1042 479 1049 481 1056 482 M1014 517 1016 515 1017 513 M1324 300 1325 311 1321 321 M1216 706 1203 706 1191 709 M1362 717 1367 710 1370 702 M839 437 834 441 828 443 M893 622 897 624 901 623 M1174 465 1180 459 1187 454 M1195 494 1202 500 1212 500 M1051 765 1046 759 1041 754 M1369 662 1369 652 1365 643 M1174 575 1168 581 1163 588 M1154 602 1155 609 1154 615 M935 630 933 627 930 626 M1243 637 1250 634 1256 629 M968 446 970 445 M1126 524 1119 528 1112 531 M1093 691 1087 683 1079 676 M1047 419 1045 426 1044 432 M904 666 911 656 919 646 M1085 510 1089 516 1095 521 M1289 500 1297 496 1305 494 M1034 464 1042 466 1050 469 M995 552 992 551 989 550 M1078 466 1083 461 1085 455 M955 564 958 563 960 561 M1365 643 1367 635 1368 628 M842 665 834 667 827 670 M1049 506 1054 510 1060 512 M1159 577 1167 578 1174 575 M1157 754 1151 760 1147 766 M995 437 995 437 998 437 M1272 296 1275 305 1276 313 M1332 630 1341 631 1349 636 M1206 638 1195 644 1183 645 M1034 464 1026 466 1018 470 M822 522 823 528 822 533 M1245 484 1246 473 1247 462 M1210 622 1218 613 1227 605 M990 592 991 588 990 584 M1248 443 1257 445 1266 444 M1009 462 1007 463 1005 465 M1183 645 1181 633 1174 622 M1177 541 1181 548 1187 553 M1352 355 1360 352 1368 349 M1357 380 1350 374 1341 370 M1051 720 1041 716 1031 714 M667 415 670 410 673 404 M812 662 819 666 827 670 M825 502 827 507 830 512 M956 465 956 465 958 467 M975 580 978 582 980 584 M1107 757 1117 754 1126 752 M1154 401 1157 395 M656 473 658 479 656 486 M1177 599 1171 601 1165 602 M769 553 765 553 755 556 M1183 645 1181 653 1179 662 M1054 544 1050 540 1048 534 M983 497 980 494 979 491 M997 762 992 752 989 742 M974 493 975 491 975 488 M1261 694 1270 693 1278 689 M1364 456 1356 462 1351 469 1346 478 M1008 469 1011 468 1014 467 M1071 429 1065 424 1061 419 M996 527 996 524 996 521 M990 584 988 585 986 586 M926 526 928 528 929 531 M978 456 981 457 983 459 M1295 528 1299 522 1303 516 M915 528 915 528 915 530 M1216 706 1218 697 1225 690 M991 489 988 490 986 492 M1158 481 1153 483 1148 485 M865 700 856 699 848 702 M1292 549 1297 554 1301 558 M1297 749 1289 757 1285 762 M1347 615 1355 615 1363 614 M1092 607 1100 607 1107 609 M1357 535 1351 537 1345 537 M878 692 885 685 893 681 M1255 822 1262 820 1262 820 M1126 647 1116 649 1107 652 M791 453 796 453 801 456 M1345 525 1353 525 1359 523 M914 765 920 769 925 775 M1354 557 1350 553 1346 549 M968 805 975 802 981 796 M772 508 776 514 781 518 M1060 527 1054 530 1048 534 M893 681 885 678 876 676 M871 751 864 752 857 754 M1119 455 1123 450 1129 445 M998 575 994 576 990 578 M957 668 952 675 946 680 M1235 506 1239 510 1242 516 M973 559 976 558 978 556 M745 450 749 455 755 458 M1213 674 1210 664 1201 657 M1150 428 1144 425 1137 421 M839 610 830 617 824 626 M1051 765 1058 767 1066 769 M1292 305 1301 302 1309 299 M634 493 633 485 629 479 M964 828 954 832 944 835 M1347 615 1344 606 1344 596 M629 434 622 433 M773 379 773 371 773 364 M906 805 903 813 895 816 M1247 462 1239 464 1230 467 M1322 679 1314 682 1307 688 M1188 599 1190 609 1188 620 M1093 691 1101 699 1112 702 M986 573 989 575 990 578 M779 672 779 679 M1342 673 1340 681 1335 687 M964 467 967 470 971 470 M977 662 983 672 981 684 M1371 369 1364 375 1357 380 M1331 353 1336 362 1341 370 M953 524 955 520 956 517 M933 756 937 745 939 734 M801 630 810 633 M915 693 923 697 931 698 M1261 341 1254 348 1247 355 M1177 490 1186 490 1195 494 M1205 535 1209 529 1211 521 M1095 794 1101 804 1104 807 M1246 528 1243 522 1242 516 M971 478 968 477 965 477 M1182 381 1184 390 1189 398 M863 529 863 526 861 523 M1357 535 1359 543 1363 549 M841 626 853 627 865 624 M952 556 952 552 950 549 M841 497 840 488 839 479 M1052 741 1045 746 1041 754 M1028 510 1027 508 1027 505 M1176 613 1171 611 1165 613 M962 501 964 503 967 504 M1123 474 1128 472 1134 472 M1371 369 1361 362 1352 355 M952 786 946 791 939 793 M989 563 989 565 988 568 M975 707 974 714 971 721 M986 446 984 444 981 442 M732 510 737 509 M1008 502 1010 504 1012 506 M1327 713 1327 705 1324 698 M830 512 835 512 839 511 M1195 587 1189 588 1184 589 M1269 470 1261 475 1254 481 1245 484 M912 631 909 632 907 633 M725 567 733 567 740 568 M965 483 967 487 970 489 M930 679 921 677 911 679 M1096 430 1105 430 1114 429 M1037 776 1046 780 1048 789 M1096 581 1101 570 1108 559 M1159 535 1154 531 1148 529 M803 506 807 516 809 527 M909 557 911 551 910 544 M1234 730 1233 730 M685 401 683 408 682 416 M1143 453 1137 448 1129 445 M1174 589 1171 582 1174 575 M1162 420 1155 422 1150 428 M1248 443 1251 435 1252 426 M981 796 980 807 980 817 M979 491 981 490 983 488 M775 400 768 406 766 408 M925 545 921 545 917 546 M1044 511 1043 514 1043 517 M1034 511 1033 514 1031 516 M1029 542 1025 540 1021 537 M1249 801 1248 798 M1223 664 1232 658 1241 652 M1154 602 1159 602 1165 602 M853 518 848 517 844 514 M994 825 986 828 980 834 M981 527 981 524 980 521 M1179 662 1190 659 1201 657 M1308 576 1305 584 1308 592 M803 495 807 494 812 493 M1149 496 1144 494 1138 494 M998 442 994 443 990 443 M994 510 993 508 992 505 M996 585 999 585 1002 585 M1101 489 1102 494 1102 499 M1000 495 998 493 998 490 M966 460 969 458 971 457 M1040 678 1047 685 1053 692 M986 446 984 447 981 447 M839 511 842 512 844 514 M1252 726 1250 727 M1246 728 1243 730 1234 730 M1283 649 1289 654 1296 657 M839 813 837 822 835 831 M945 522 943 521 941 519 M940 565 943 566 946 566 M1132 602 1137 603 1142 603 M1147 517 1143 519 1138 520 M1330 435 1338 430 1344 424 M1357 402 1347 411 1344 424 M1016 637 1011 629 1014 621 M811 611 815 606 824 600 M1138 627 1127 628 1116 632 M824 410 820 410 812 412 M1162 638 1168 630 1174 622 M1017 498 1015 498 1013 499 M1232 805 1227 813 1223 823 M639 447 642 442 642 435 M1113 499 1111 492 1110 486 M860 469 855 462 850 455 M846 506 843 502 841 497 M1093 691 1095 684 1099 677 M1283 522 1282 529 1284 536 M986 573 985 576 986 579 M1159 535 1160 545 1163 554 M924 624 922 626 919 626 M983 757 978 762 970 764 M996 527 994 529 992 531 M1004 565 1001 563 998 561 M672 384 669 390 665 395 M1157 754 1150 745 1142 737 M1057 430 1055 436 1053 441 M1046 554 1042 550 1041 544 M899 766 895 758 894 749 M1081 777 1088 774 1095 771 M1028 661 1016 654 1003 651 M989 563 986 565 981 566 M915 622 917 624 919 626 M947 497 945 499 943 500 M1319 751 1324 757 1326 765 M1057 496 1051 497 1044 499 M1186 677 1184 668 1179 662 M964 467 962 471 961 474 M1147 517 1149 512 1151 506 M1082 719 1081 728 1080 737 M1254 612 1254 620 1256 629 M1188 436 1194 442 1203 445 M969 495 967 496 965 498 M1035 499 1035 494 1036 489 M991 516 994 518 996 521 M1216 706 1213 714 M1311 547 1306 552 1301 558 M993 570 992 574 990 578 M1022 531 1021 534 1021 537 M629 504 621 499 615 497 M612 496 612 496 M998 561 996 561 993 561 M1236 411 1235 420 1233 430 M964 511 961 510 959 508 M1001 469 1000 465 1001 461 M786 389 779 384 773 379 M831 540 835 545 836 545 M988 510 986 512 984 513 M1001 469 1003 471 1005 472 M782 652 775 657 768 663 M923 593 925 599 931 604 M1001 684 1011 682 1021 680 M665 395 659 401 654 400 M1341 702 1343 711 1346 720 M1129 512 1134 508 1140 508 M1196 542 1198 548 1199 555 M1323 377 1315 387 1304 392 M951 482 951 482 951 485 M985 537 987 535 987 533 M1096 552 1102 544 1101 534 M876 676 881 670 886 665 M1235 548 1231 543 1225 539 M846 506 851 506 856 506 M1275 409 1277 398 1281 387 M1113 441 1107 446 1100 451 M884 775 877 775 870 771 M1083 404 1081 404 1074 403 M991 516 988 514 984 513 M822 455 818 458 813 460 M868 542 868 540 868 534 M898 596 893 603 888 610 M998 458 999 459 1001 461 M1221 647 1226 635 1230 623 M1006 551 1003 550 1001 548 M754 567 748 565 740 568 M1264 558 1269 564 1274 570 M1233 366 1236 375 M939 534 938 532 937 530 M1262 318 1260 310 1258 302 M939 734 930 732 922 735 M865 700 859 709 852 717 M1080 737 1088 740 1097 741 M1157 468 1164 463 1166 455 M1147 517 1157 516 1164 511 M1101 489 1098 481 1096 472 M986 503 984 505 982 507 M853 642 864 649 876 649 M993 471 995 472 998 473 M707 446 708 447 M1057 496 1052 500 1049 506 M923 720 933 720 941 716 M1014 459 1012 457 1010 456 M1037 504 1035 507 1034 511 M1341 564 1348 563 1354 557 M894 536 892 537 M974 493 971 494 969 495 M957 460 958 461 961 462 M980 817 982 826 980 834 M1243 637 1242 645 1241 652 M957 571 958 574 959 578 M1006 430 1006 433 M811 470 806 473 801 475 M1004 507 1001 508 998 510 M1019 567 1017 566 1015 563 M774 529 767 536 762 544 M1347 296 1344 303 1339 309 M653 443 647 440 642 435 M740 537 744 540 749 545 M774 529 780 533 784 538 M803 506 813 509 823 512 M1063 667 1072 671 1079 676 M974 589 971 588 969 587 M1110 486 1116 484 1123 484 M650 498 646 502 M873 506 872 514 868 520 M1214 835 1218 828 1223 823 M939 534 939 537 940 539 M1030 638 1031 627 1030 616 M840 544 837 541 835 536 M944 622 948 614 953 608 M930 542 926 541 922 540 M1096 662 1095 670 1099 677 M1300 671 1294 665 1296 657 M1006 495 1008 499 1008 502 M954 532 956 533 958 535 M1157 448 1150 451 1143 453 M939 770 947 771 955 769 M890 797 893 790 898 783 M912 535 914 533 915 530 M672 384 679 381 680 380 M1058 805 1054 813 1056 821 M789 471 790 475 792 478 M954 654 961 652 968 648 M679 446 685 446 690 444 M1049 506 1046 508 1044 511 M1133 662 1136 653 1144 649 M1203 464 1206 473 1210 482 M1308 592 1310 599 1311 607 M957 668 958 676 962 683 M872 487 863 490 854 489 M1308 576 1317 575 1324 570 M843 535 846 537 848 539 M626 414 634 419 645 422 M924 806 931 799 939 793 M1174 589 1168 588 1163 588 M1239 314 1249 309 1258 302 M1021 750 1012 746 1003 748 M1001 534 1001 531 1001 527 M1213 674 1219 682 1225 690 M922 604 918 605 913 605 M1122 535 1120 542 1116 549 M985 631 992 633 999 635 M1195 587 1202 589 1207 595 M991 489 993 487 995 486 M886 731 875 734 865 737 M981 442 983 441 985 439 M707 395 712 391 716 386 M1095 794 1093 783 1095 771 M1308 648 1316 653 1322 661 M965 498 968 499 970 501 M968 785 960 785 952 786 M1165 522 1157 526 1148 529 M744 366 752 363 761 363 M917 540 919 540 922 540 M1054 544 1056 535 1060 527 M938 509 937 509 M700 452 703 448 707 446 M1004 565 1003 568 1002 570 M1305 494 1314 494 1323 495 M843 535 838 533 835 530 M1310 528 1305 531 1303 537 M1041 754 1029 760 1019 768 M949 819 948 810 953 803 M964 467 965 470 966 472 M1019 567 1028 567 1037 567 M1100 451 1096 447 1091 443 M1323 727 1310 728 1299 732 M1002 543 1006 545 1010 545 M1154 602 1150 608 1144 612 M956 473 954 473 M976 563 976 566 975 568 M741 389 741 396 741 397 M737 509 743 512 745 513 M1008 490 1005 490 1003 490 M1255 502 1250 493 1245 484 M1009 527 1011 526 1013 524 M782 652 775 646 769 639 762 632 M1308 648 1311 638 1311 627 M1028 661 1038 652 1046 642 M1062 648 1054 644 1046 642 M866 663 859 672 853 682 M1082 719 1086 712 1092 707 M1101 489 1092 493 1083 491 M796 534 790 535 784 538 M833 643 839 653 842 665 M1326 765 1319 768 1312 768 M1122 535 1114 537 1108 542 M1046 554 1041 560 1037 567 M639 447 646 445 653 443 M947 546 949 544 951 542 M794 518 794 526 796 534 M1183 645 1175 648 1167 651 M1006 587 1004 585 1002 585 M1187 772 1196 767 1204 761 M849 526 846 526 843 528 M924 624 924 627 924 630 M908 828 914 832 921 836 M1003 477 1001 475 998 473 M1133 662 1141 672 1152 678 M1029 555 1036 551 1041 544 M1244 560 1242 569 1239 578 M920 666 917 673 911 679 M853 642 861 635 865 624 M1255 548 1262 542 1270 538 M1155 694 1147 691 1139 689 M877 591 876 583 876 579 M736 495 735 501 737 509 M998 561 1001 560 1003 559 M1035 532 1040 537 1041 544 M1110 518 1115 515 1118 512 M1030 638 1030 650 1028 661 M973 546 972 542 971 539 M933 756 924 751 915 748 M1138 627 1143 620 1144 612 M762 632 767 626 768 622 M955 545 953 543 951 542 M1058 805 1061 794 1067 784 M1162 622 1159 618 1154 615 M940 539 938 538 935 538 M923 593 920 595 918 598 M844 514 841 516 838 519 M1108 780 1101 776 1095 771 M1009 438 1009 435 1006 433 M1080 821 1087 817 1093 817 M956 730 963 726 971 721 M1092 756 1096 749 1097 741 M1286 327 1282 337 1282 348 M794 551 790 544 784 538 M1252 726 1253 728 M1319 751 1330 746 1342 740 M1026 802 1037 795 1048 789 M1006 485 1003 485 1000 485 M997 762 1000 771 1005 779 M919 568 914 563 909 557 M1064 682 1060 689 1053 692 M1121 494 1117 497 1113 499 M1155 694 1152 686 1152 678 M882 633 889 632 895 631 M1203 464 1196 470 1191 478 M1174 589 1179 589 1184 589 M1078 634 1089 633 1101 634 M1081 777 1079 769 1078 761 M973 559 973 555 971 552 M1239 314 1232 311 1224 311 M1207 595 1218 599 1227 605 M920 666 925 673 930 679 M1286 327 1299 330 1311 336 M772 508 765 507 759 505 M978 510 976 509 975 507 M700 452 696 452 692 452 M948 554 950 555 952 556 M848 545 852 544 M1157 468 1156 474 1158 481 M1121 494 1116 490 1110 486 M977 518 981 517 984 513 M1069 503 1076 497 1083 491 M877 591 872 595 865 596 M1006 485 1005 483 1005 481 M884 775 880 782 874 789 M855 816 857 805 858 793 M1009 512 1013 513 1017 513 M944 550 946 551 948 554 M1017 513 1020 515 1022 518 M716 386 716 384 M794 518 787 518 781 518 M1041 544 1044 539 1048 534 M1075 605 1072 596 1072 585 M1069 503 1077 505 1085 510 M863 498 860 503 856 506 M1356 696 1360 684 1356 672 M877 805 869 797 858 793 M1170 435 1170 442 1175 447 M1231 836 1227 829 1223 823 M899 766 898 775 898 783 M988 479 991 477 994 476 M1195 822 1192 829 1194 837 M1127 726 1134 719 1143 717 1152 715 M906 805 911 816 908 828 M1323 524 1328 528 1333 532 M952 786 950 794 953 803 M973 513 975 515 977 518 M978 510 980 508 982 507 M1127 677 1134 683 1139 689 M899 766 907 764 914 765 M1323 727 1326 720 1327 713 M1131 459 1134 465 1134 472 M841 464 844 458 850 455 M1308 648 1297 643 1289 635 M890 797 898 801 906 805 M1005 458 1004 462 1005 465 M1030 736 1040 727 1051 720 M971 470 973 473 976 475 M859 514 860 518 861 523 M1177 790 1169 792 1163 798 M1108 542 1104 538 1101 534 M1344 786 1353 783 1361 781 M1008 490 1011 487 1013 483 M1116 549 1111 553 1108 559 M963 450 964 451 967 453 M1013 491 1017 492 1020 493 M1100 508 1098 515 1095 521 M1000 485 1002 482 1005 481 M1138 785 1134 791 1134 792 M1210 426 1208 417 1202 408 M823 467 819 472 815 477 M941 560 944 560 946 560 M1010 590 1008 593 1005 594 M918 610 916 608 913 605 M1030 736 1022 728 1012 723 M993 454 991 453 990 451 M807 482 811 484 814 485 M855 523 858 523 861 523 M1012 723 1014 732 1018 741 1021 750 M953 524 949 523 945 522 M788 369 781 366 773 364 M868 520 873 528 880 534 M1336 543 1340 540 1345 537 M984 592 982 591 979 591 M1009 512 1012 514 1014 517 M995 545 998 547 1001 548 M882 714 875 717 867 718 M1051 398 1056 401 1062 404 M1093 377 1091 382 M1143 409 1139 415 1137 421 M999 635 995 642 989 648 M944 622 946 630 951 636 M1010 476 1008 479 1005 481 M1318 408 1313 418 1307 427 M1047 523 1054 524 1060 527 M1297 749 1299 740 1299 732 M825 820 830 826 835 831 M875 614 875 602 877 591 M1210 482 1218 486 1227 488 M825 502 830 505 836 506 M965 483 965 480 965 477 M1001 548 1002 552 1000 556 M1053 692 1043 693 1034 691 M1080 539 1073 540 1066 539 M985 537 983 539 983 542 M1157 448 1161 452 1166 455 M1113 441 1116 448 1119 455 M967 453 965 455 963 456 M1074 528 1079 526 1084 522 M1205 689 1215 691 1225 690 M940 565 941 563 941 560 M987 528 984 527 981 527 M1029 816 1029 808 1026 802 M1042 479 1041 485 1036 489 M1327 476 1331 469 1337 462 M931 698 936 707 941 716 M973 559 972 561 971 563 M1350 753 1350 742 1355 733 M823 491 819 488 814 485 M1003 803 1005 791 1005 779 M1102 499 1108 497 1113 499 M986 446 986 450 984 453 M835 530 835 533 835 536 M1119 570 1116 577 1112 584 M1335 516 1334 524 1333 532 M978 543 975 540 971 539 M995 552 993 553 991 555 M1032 590 1034 578 1037 567 M1119 455 1111 458 1106 463 M944 550 941 547 939 544 M877 805 887 810 895 816 M698 426 690 420 682 416 M946 560 947 563 946 566 M981 577 983 578 986 579 M1292 684 1285 687 1278 689 M924 550 927 552 931 551 M1060 527 1061 519 1060 512 M816 436 821 441 828 443 M901 534 900 536 900 538 M941 519 939 518 936 516 M1322 661 1328 655 1332 646 M925 545 923 543 922 540 M747 630 747 631 749 638 M761 473 753 467 748 469 M930 520 932 520 934 520 M1227 605 1230 614 1230 623 M1222 394 1228 384 1236 375 M878 692 872 696 865 700 M865 700 867 709 867 718 M1129 429 1126 437 1129 445 M987 528 987 531 987 533 M1026 521 1023 523 1019 524 M1041 443 1047 441 1053 441 M944 622 939 625 935 630 M848 539 846 543 843 544 M791 453 788 457 783 460 M1191 727 1197 735 1202 737 M852 717 860 719 867 718 M909 610 907 605 903 601 M1337 462 1342 452 1351 444 M1007 452 1008 454 1010 456 M1165 522 1163 516 1164 511 M1303 516 1308 521 1310 528 M786 389 789 398 795 406 M1165 522 1171 521 1177 520 M951 485 950 488 948 491 M795 685 803 684 810 682 M707 395 700 392 694 391 M846 506 843 509 839 511 M977 662 973 654 968 648 M1268 727 1262 732 1261 733 M995 465 997 468 1001 469 M736 648 743 644 749 638 M1256 382 1246 380 1236 375 M865 737 866 727 867 718 M984 518 984 516 984 513 M986 558 986 555 985 553 M987 528 989 529 992 531 M909 610 911 613 913 616 M1091 415 1090 409 1090 409 M850 770 842 771 834 768 M848 539 850 541 852 544 M951 568 951 564 952 561 M1297 472 1291 479 1283 483 M1357 402 1367 398 1372 389 M822 522 826 524 830 525 M1008 563 1006 564 1004 565 M1113 441 1120 445 1129 445 M1361 430 1367 423 1372 416 M1335 516 1336 505 1341 494 M1026 521 1029 519 1031 516 M1113 418 1105 425 1096 430 M980 584 979 587 979 591 M1035 532 1031 532 1027 530 M1216 547 1207 550 1199 555 M1282 452 1288 463 1297 472 M1147 517 1147 523 1148 529 M1089 533 1095 534 1101 534 M1019 567 1019 570 1018 573 M1258 661 1250 656 1241 652 M910 544 913 545 917 546 M655 456 662 454 669 454 M957 668 948 665 939 666 M1121 401 1116 408 1113 418 M1003 559 1001 558 1000 556 M1134 486 1128 485 1123 484 M1103 412 1107 416 1113 418 M1069 620 1062 615 1058 608 M1058 805 1069 802 1080 804 M1365 583 1360 577 1353 574 M834 768 826 775 824 777 M702 477 696 476 690 473 M1347 296 1355 295 1364 293 M1058 805 1051 799 1048 789 M965 477 966 475 966 472 M1283 425 1272 423 1262 423 1252 426 M1006 531 1008 530 1009 527 M1086 591 1079 589 1072 585 M1191 746 1189 759 1187 772 M984 518 982 520 980 521 M964 568 960 569 957 571 M868 520 865 523 861 523 M830 512 831 515 832 519 M1344 786 1346 777 1345 767 M853 682 865 680 876 676 M1264 596 1266 585 1260 576 M1144 438 1140 430 1137 421 M970 489 972 489 975 488 M1175 731 1183 728 1191 727 M667 415 660 406 654 401 M875 614 871 604 865 596 M1146 540 1147 534 1148 529 M1051 720 1053 731 1052 741 M1367 479 1369 488 1369 498 1369 507 M772 495 779 489 784 482 M1026 493 1023 490 1020 488 M1318 512 1311 503 1305 494 M1203 445 1194 449 1187 454 M830 743 824 742 M1211 521 1202 520 1194 517 M986 446 988 449 990 451 M1107 757 1100 751 1097 741 M1112 474 1117 474 1123 474 M886 731 883 723 882 714 M1035 499 1040 499 1044 499 M1239 578 1244 586 1246 594 M1129 429 1136 434 1144 438 M1096 472 1091 476 1085 480 M799 484 796 481 792 478 M939 770 932 773 925 775 M1009 462 1011 461 1014 459 M986 558 990 560 993 561 M786 389 780 393 775 400 M1002 543 1000 541 997 539 M1197 570 1198 563 1199 555 M634 461 636 462 M1230 467 1229 478 1227 488 M836 506 838 508 839 511 M628 429 629 434 M1064 682 1072 688 1078 696 M971 552 970 548 967 546 M937 530 933 533 930 536 M1369 507 1361 507 1352 508 M871 751 882 747 894 749 M807 482 811 479 815 477 M1218 453 1221 444 1226 436 1233 430 M1005 442 1004 444 1002 445 M1123 474 1122 479 1123 484 M956 473 958 474 961 474 M1225 791 1231 797 1232 805 M1021 680 1021 669 1028 661 M1035 499 1036 502 1037 504 M907 534 907 531 M1030 736 1024 741 1021 750 M976 527 975 525 974 522 M1009 570 1007 572 1005 574 M1361 781 1364 789 1371 792 M1277 668 1278 678 1278 689 M944 835 932 836 921 836 M933 756 923 758 914 765 M1110 518 1102 515 1095 521 M1318 512 1314 520 1310 528 M975 482 978 481 981 479 M1279 707 1285 711 1291 717 M994 510 991 509 988 510 M953 500 955 502 955 505 M998 561 999 558 1000 556 M731 556 743 555 755 556 M656 486 654 493 650 498 M1019 580 1020 576 1018 573 M1086 622 1079 615 1075 605 M839 813 847 813 855 816 M1210 622 1206 615 1201 609" fill="none" stroke="#d9c9e6" stroke-width="2.4" stroke-linejoin="round"/>
<path d="M1000 732 995 737 989 742 M1092 756 1083 749 1080 737 M1001 516 1001 519 1002 521 M1156 730 1158 742 1157 754 M757 653 762 658 768 663 M1019 580 1017 581 1014 581 M1172 397 1180 398 1189 398 M998 702 1008 703 1017 699 M1100 451 1092 452 1085 455 M919 568 922 561 925 555 M999 451 996 452 993 454 M968 509 967 507 967 504 M966 741 978 742 989 742 M853 605 863 612 865 624 M1080 821 1072 816 1065 811 1058 805 M876 649 885 651 893 652 M617 484 614 490 612 496 M1369 662 1363 667 1356 672 M1191 727 1201 726 1201 726 M1276 313 1267 308 1258 302 M1345 525 1343 530 1345 537 M975 507 971 505 970 501 M1028 371 1028 382 1025 393 M1318 512 1319 519 1323 524 M1270 538 1272 544 1275 550 M1126 647 1136 639 1138 627 M661 433 653 428 645 422 M976 527 978 526 981 527 M1300 671 1296 678 1292 684 M1080 439 1086 440 1091 443 M853 531 855 533 857 535 M1003 803 997 795 992 786 M930 536 930 533 929 531 M1071 570 1078 578 1086 582 1096 581 M1014 517 1018 517 1022 518 M1297 766 1289 765 1288 765 M709 383 710 383 716 386 M1327 713 1318 710 1310 715 M1009 570 1012 570 1014 571 M1329 592 1331 585 1336 579 M888 610 890 613 893 615 M843 535 839 535 835 536 M904 666 908 672 911 679 M1324 541 1327 549 1326 558 M846 520 842 519 838 519 M749 545 752 539 754 533 M988 544 989 547 989 550 M970 445 971 447 972 449 M778 468 781 464 783 460 M915 693 919 702 922 711 923 720 M863 529 860 532 857 535 M809 527 816 525 822 522 M1085 510 1085 504 1089 499 M1042 826 1035 830 1029 835 M969 445 970 445 M1051 720 1049 711 1042 704 M812 412 807 404 802 396 M900 694 905 686 911 679 M1314 560 1308 558 1301 558 M998 473 996 474 994 476 M939 734 939 725 941 716 M915 748 904 747 894 749 M1108 542 1110 547 1116 549 M995 545 993 542 990 539 M923 720 930 710 931 698 M726 408 723 407 716 405 M1214 835 1204 836 1194 837 M1281 387 1270 391 1261 399 M812 448 809 449 805 450 M1028 510 1025 511 1022 510 M1029 499 1027 502 1027 505 M993 460 992 463 990 466 M1138 785 1141 775 1147 766 M988 457 986 455 984 453 M918 610 919 606 922 604 M1083 491 1085 486 1085 480 M799 484 802 489 803 495 M1073 417 1082 415 1091 415 M1352 314 1361 313 1369 316 M843 535 843 532 843 528 M1001 667 1010 666 1019 663 1028 661 M999 635 1000 643 1003 651 M1031 371 1035 375 1042 382 1048 389 1051 398 M1336 543 1330 543 1324 541 M889 482 886 486 M1005 465 1003 467 1001 469 M736 648 730 646 M1213 810 1218 817 1223 823 M1091 415 1094 422 1096 430 M978 464 979 461 983 459 M984 728 987 735 989 742 M976 460 977 458 978 456 M1337 462 1328 458 1321 452 M807 482 807 489 803 495 M824 424 832 425 834 425 M902 637 898 635 895 631 M1116 632 1118 625 1122 619 M984 728 974 734 966 741 M951 636 958 632 966 631 M1040 678 1052 679 1064 682 M1006 531 1006 534 1005 537 M958 707 946 706 941 716 M1001 534 1000 537 997 539 M904 666 895 666 886 665 M944 550 947 549 950 549 M973 513 971 511 968 509 M1144 553 1147 560 1154 564 M1197 570 1185 571 1174 575 M1235 678 1239 672 1245 667 M983 497 985 495 986 492 M1277 668 1283 659 1283 649 M1348 657 1346 646 1349 636 M1279 707 1266 708 1253 710 M1292 619 1290 627 1289 635 M1369 680 1362 677 1356 672 M1095 794 1088 800 1080 804 M1268 727 1274 731 1282 735 M1121 401 1128 396 1131 393 M771 462 775 465 778 468 M1029 542 1026 536 1027 530 M853 531 852 528 849 526 M1357 402 1346 405 1335 410 M887 495 886 486 M1159 577 1154 578 1149 578 M1357 535 1352 529 1345 525 M1311 547 1317 544 1324 541 M887 570 887 570 M891 566 892 565 898 562 M717 385 716 386 M811 470 809 467 806 465 M930 536 932 537 935 538 M939 534 941 535 944 535 M1282 452 1274 447 1266 444 M973 546 970 545 967 546 M998 502 995 505 992 505 M1148 485 1150 490 1149 496 M990 584 991 581 990 578 M704 383 703 387 707 395 M1151 506 1157 510 1164 511 M984 513 983 510 982 507 M822 455 817 452 812 448 M1275 409 1267 405 1261 399 M998 473 999 476 999 480 M1309 776 1309 775 1312 768 M1149 578 1148 586 1149 593 M878 692 889 693 900 694 M1007 523 1005 522 1002 521 M1121 494 1125 498 1130 500 M1318 408 1326 409 1335 410 M1232 708 1229 719 M1231 725 1234 730 M1051 398 1046 402 1041 406 M1078 550 1073 544 1066 539 M1018 506 1021 508 1022 510 M971 571 973 570 975 568 M1348 657 1345 665 1342 673 M946 695 945 687 946 680 M909 610 907 611 904 613 M1002 578 1003 576 1005 574 M1144 612 1141 608 1142 603 M750 514 754 509 759 505 M1070 517 1066 512 1060 512 M1041 406 1033 400 1026 394 M815 538 814 548 812 552 M1018 506 1020 503 1022 502 M1037 776 1045 772 1051 765 M685 401 691 397 694 391 M1080 821 1081 813 1080 804 M995 545 995 542 997 539 M1131 459 1137 456 1143 453 M1348 657 1338 655 1332 646 M617 484 626 487 634 493 M667 415 668 426 674 434 M1297 766 1305 765 1312 768 M993 471 992 468 990 466 M702 477 701 483 M1157 468 1151 469 1146 472 M1002 570 1000 568 999 566 M1329 592 1337 591 1344 596 M1164 511 1171 515 1177 520 M962 501 960 498 958 496 M962 683 954 680 946 680 M924 806 927 814 927 822 M1080 821 1080 829 M1352 355 1347 363 1341 370 M1326 765 1322 776 1322 780 M1073 482 1079 480 1085 480 M1151 506 1155 502 1160 499 M792 485 788 484 784 482 M973 513 975 510 975 507 M910 601 912 603 913 605 M1112 474 1110 468 1106 463 M1146 540 1141 537 1137 533 M823 512 826 512 830 512 M988 457 989 454 990 451 M999 480 1001 482 1000 485 M642 476 638 470 636 462 M806 383 811 382 M1275 409 1279 417 1283 425 M1366 761 1368 748 1370 735 M791 453 792 458 793 463 M1010 605 1013 601 1014 595 M1043 517 1041 515 1038 514 M1158 481 1164 481 1171 478 M1035 526 1039 526 1043 529 M1006 551 1006 547 1010 545 M912 535 909 535 907 534 M868 534 866 531 863 529 M1269 637 1262 641 1256 646 M1041 606 1036 598 1032 590 M779 672 788 670 797 669 M951 636 953 645 954 654 M1138 627 1143 626 1148 625 M1245 484 1236 487 1227 488 M805 702 812 704 818 708 M1357 380 1364 385 1372 389 M1260 576 1250 579 1239 578 M1144 612 1149 618 1148 625 M958 550 958 553 958 556 M907 728 905 720 902 713 M1323 524 1317 527 1310 528 M1243 637 1251 640 1256 646 M1138 785 1129 780 1124 770 M752 493 756 498 759 505 M1272 296 1265 299 1258 302 M877 805 874 797 874 789 M967 582 968 584 969 587 M1186 677 1178 676 1170 678 M991 516 993 513 994 510 M1035 526 1037 523 1037 520 M1037 520 1034 517 1031 516 M1014 571 1014 567 1015 563 M1164 511 1164 504 1160 499 M794 551 803 543 815 538 M1096 430 1089 428 1083 426 M1080 737 1081 749 1078 761 M1030 616 1043 619 1054 628 M1006 495 1007 493 1008 490 M1016 637 1020 650 1028 661 M786 389 787 379 788 369 M967 453 969 450 972 449 M961 474 964 474 966 472 M1073 482 1068 475 1061 471 M1242 297 1241 305 1239 314 M678 468 683 474 686 481 M1078 634 1068 639 1062 648 M955 545 953 547 950 549 M1002 578 1005 582 1009 582 M1144 438 1140 446 1143 453 M1113 499 1117 505 1118 512 M810 633 817 639 822 647 825 655 M1243 637 1238 629 1230 623 M1047 663 1038 659 1028 661 M1165 782 1166 790 1163 798 M900 694 897 687 893 681 M967 504 968 502 970 501 M1008 563 1009 567 1009 570 M1001 684 1008 693 1017 699 M857 535 857 539 859 542 M936 548 938 551 939 554 M1051 720 1059 714 1067 706 M1206 638 1203 648 1201 657 M883 827 875 829 867 830 M944 505 943 502 943 500 M877 805 866 809 855 816 M1112 531 1106 533 1101 534 M1254 518 1258 523 1262 527 M1172 397 1165 392 1164 390 M1080 737 1074 730 1068 724 M981 796 988 792 992 786 M775 441 775 441 M774 426 773 421 M1080 539 1084 536 1089 533 M937 651 928 648 919 646 M1311 627 1308 617 1311 607 M807 482 805 478 801 475 M1260 576 1266 570 1274 570 M736 631 740 632 749 638 M1255 502 1245 503 1235 506 M966 460 965 458 963 456 M1308 648 1302 653 1296 657 M1121 401 1124 406 1129 410 M1129 512 1127 518 1126 524 M1006 485 1007 488 1008 490 M1092 607 1084 605 1075 605 M995 465 994 462 993 460 M968 648 967 639 966 631 M789 471 783 471 778 468 M975 580 978 579 981 577 M1057 496 1057 489 1056 482 M899 609 902 606 903 601 M761 363 761 372 761 380 M1218 370 1217 371 M1177 790 1184 782 1187 772 M866 663 869 671 876 676 M1009 826 1004 815 1003 803 M930 546 931 549 931 551 M1000 495 1000 499 998 502 M1234 730 1234 733 M955 564 953 566 951 568 M1146 472 1147 479 1148 485 M825 820 820 814 819 814 M1012 534 1009 531 1009 527 M1297 703 1293 710 1291 717 M656 473 655 464 655 456 M1008 469 1007 470 1005 472 M985 772 994 778 1005 779 M1353 574 1360 569 1365 563 M835 711 842 706 848 702 M741 389 734 393 734 393 M998 490 996 488 995 486 M1086 559 1082 555 1078 550 M1272 296 1279 292 1288 290 M962 527 959 527 957 528 M1366 799 1367 798 1371 792 M775 400 779 405 781 411 M958 550 961 549 963 548 M947 497 950 498 953 500 M1235 678 1237 687 1241 695 M1323 727 1323 740 1319 751 M1130 548 1123 550 1116 549 M1269 637 1275 644 1283 649 M1005 442 1008 444 1011 444 M987 462 988 464 990 466 M1152 715 1141 710 1131 705 M839 479 833 478 826 478 M1231 590 1229 598 1227 605 M765 672 765 670 768 663 M1344 596 1340 588 1336 579 M978 551 982 552 985 553 M853 642 843 643 833 643 M920 535 921 537 922 540 M954 654 945 654 937 651 M963 492 965 494 965 498 M964 511 965 514 965 517 M1006 551 1008 553 1011 553 M1040 678 1035 684 1034 691 M1296 409 1287 414 1283 425 M1121 494 1126 488 1134 486 M991 555 991 552 989 550 M1322 679 1324 670 1322 661 M988 510 984 510 982 507 M698 426 701 420 705 414 M1002 578 1005 577 1009 577 M1031 714 1022 708 1017 699 M1204 797 1198 809 1195 822 M732 497 729 499 726 500 M1295 528 1289 525 1283 522 M839 610 833 604 830 602 M1212 572 1211 566 1213 560 M1292 305 1297 311 1302 319 M1187 454 1182 449 1175 447 M1119 570 1128 570 1135 565 M787 500 794 496 803 495 M679 446 683 438 686 430 M957 668 957 661 954 654 M1210 426 1221 429 1233 430 M1116 793 1116 793 M1069 620 1070 612 1075 605 M998 458 995 458 993 460 M1369 680 1360 686 1356 696 M1359 523 1357 515 1352 508 M752 493 744 500 737 509 M1010 476 1012 478 1015 479 M1019 580 1021 582 1021 585 M883 827 888 822 895 816 M853 836 844 836 835 831 M948 509 947 512 947 515 M1224 311 1220 300 1216 291 M1047 419 1054 420 1061 419 M1191 727 1193 718 1191 709 M775 552 768 549 762 544 M736 648 729 654 727 656 M1345 767 1348 760 1350 753 M776 552 781 546 784 538 M1365 563 1359 561 1354 557 M995 545 994 548 995 552 M1197 570 1197 578 1195 587 M849 740 848 728 852 717 M834 768 839 779 843 790 M1163 588 1164 595 1165 602 M795 406 800 401 802 396 M1006 587 1007 585 1009 582 M1196 542 1186 541 1177 541 M1319 751 1316 760 1312 768 M971 470 971 474 971 478 M1080 439 1072 440 1065 443 M1012 723 1012 710 1017 699 M761 473 765 478 764 485 M1007 452 1004 449 1002 445 M1092 607 1089 615 1086 622 M937 530 936 527 933 526 M694 391 692 384 687 378 M1128 587 1133 585 1138 581 M706 460 708 458 M959 479 960 477 961 474 M924 624 928 621 931 618 M1091 415 1088 421 1083 426 M989 474 990 470 990 466 M1096 552 1103 555 1108 559 M1080 821 1072 825 1066 832 M771 462 766 468 761 473 M1241 695 1247 703 1253 710 M1065 443 1058 443 1053 441 M956 730 961 736 966 741 M1270 360 1259 356 1247 355 M1261 341 1260 330 1262 318 M1204 797 1197 798 1189 799 M1135 565 1136 573 1138 581 M1297 703 1288 707 1279 707 M977 518 976 520 974 522 M813 722 815 729 M827 727 824 735 822 736 M1066 749 1057 756 1051 765 M969 495 970 498 970 501 M1041 754 1031 751 1021 750 M1267 514 1275 519 1283 522 M1047 523 1046 527 1043 529 M939 793 946 798 953 803 M629 504 632 507 M983 497 984 501 986 503 M924 550 925 548 925 545 M1095 794 1099 785 1108 780 M994 448 993 445 990 443 M1330 435 1318 432 1307 427 M1008 490 1010 491 1013 491 M707 395 712 399 716 405 M971 563 968 563 965 563 M953 524 955 526 957 528 M752 493 747 489 746 488 M1342 673 1349 672 1356 672 M898 583 897 589 898 596 M1372 416 1367 402 1372 389 M1366 761 1358 757 1350 753 M1277 668 1287 663 1296 657 M1283 425 1275 435 1266 444 M899 618 896 617 893 615 M1029 555 1023 560 1015 563 M939 793 930 789 921 790 M965 483 963 486 961 487 M1364 456 1358 449 1351 444 M731 556 736 562 740 568 M1216 547 1214 553 1213 560 M1187 553 1193 553 1199 555 M1222 524 1216 524 1211 521 M979 472 980 475 981 479 M1162 420 1164 428 1170 435 M846 506 846 510 844 514 M1279 707 1279 698 1278 689 M882 633 888 642 893 652 M958 496 956 494 953 491 M1176 613 1169 609 1165 602 M1079 676 1089 677 1099 677 M1134 486 1134 491 1138 494 M1073 417 1071 423 1071 429 M846 506 850 508 853 512 M995 534 993 532 992 531 M1362 717 1354 718 1346 720 M682 416 676 411 673 404 M1255 548 1250 555 1244 560 M1001 527 1004 529 1006 531 M1008 469 1011 470 1013 472 M762 632 756 635 749 638 M1151 506 1145 507 1140 508 M1267 514 1260 515 1254 518 M841 497 848 494 854 489 M990 592 988 589 986 586 M1236 375 1227 371 1221 371 M1219 371 1217 371 M995 602 997 597 1000 592 M1021 750 1018 758 1019 768 M752 667 753 661 757 653 M1262 318 1269 316 1276 313 M1101 634 1093 643 1084 650 M971 577 971 574 971 571 M823 512 824 515 826 519 M1071 429 1076 426 1083 426 M940 601 945 607 953 608 M1057 430 1057 424 1061 419 M1195 822 1191 810 1189 799 M1232 805 1237 812 1239 820 M891 544 894 543 900 538 M1186 677 1187 687 1182 695 M1003 559 1008 557 1011 553 M1089 533 1086 528 1084 522 M812 662 819 659 825 655 M948 554 949 551 950 549 M1328 394 1316 394 1304 392 M1236 411 1244 418 1252 426 M850 455 843 455 838 452 M990 592 993 592 995 590 M981 479 982 481 983 483 M1062 648 1073 647 1084 650 M936 516 935 518 934 520 M761 473 758 466 755 458 M686 481 678 483 670 484 M1164 511 1168 506 1171 500 M1268 727 1260 725 1252 726 M1019 524 1016 524 1013 524 M991 438 991 440 990 443 M1159 535 1168 537 1177 541 M1147 517 1143 513 1140 508 M1324 300 1335 297 1347 296 M968 611 972 600 974 589 M850 455 851 452 M605 485 608 490 612 496 M1028 510 1031 510 1034 511 M1003 477 1001 478 999 480 M985 772 990 778 992 786 M1318 408 1311 400 1304 392 M682 416 688 408 697 404 M1001 527 1004 525 1007 523 M1197 570 1205 568 1212 572 M1129 512 1129 506 1130 500 M1165 522 1156 521 1147 517 M986 579 983 581 980 584 M1029 816 1036 812 1042 807 M1052 574 1055 584 1060 594 M1258 661 1252 664 1245 667 M1007 523 1008 525 1009 527 M1124 770 1135 767 1147 766 M822 533 826 532 829 533 M1232 805 1240 802 1249 801 M1254 518 1247 519 1242 516 M1254 679 1255 688 1261 694 M721 415 720 412 716 405 M1218 453 1210 458 1203 464 M774 529 777 523 781 518 M1324 698 1330 693 1335 687 M1364 456 1365 468 1367 479 M1318 408 1321 400 1328 394 M912 631 913 634 914 638 M1342 740 1347 731 1346 720 M1061 471 1059 476 1056 482 M961 462 959 464 958 467 M1130 548 1138 549 1144 553 M966 575 965 579 967 582 M1235 506 1224 503 1212 500 M1013 499 1010 501 1008 502 M968 805 963 816 964 828 M1222 524 1228 526 1234 526 M812 448 812 454 813 460 M1012 559 1012 556 1011 553 M999 451 996 450 994 448 M1252 726 1252 718 1253 710 M1192 529 1193 523 1194 517 M978 551 978 554 978 556 M1016 637 1007 637 999 635 M936 615 935 609 931 604 M1260 576 1254 585 1246 594 M978 551 977 547 978 543 M1017 498 1020 500 1022 502 M986 503 982 503 978 503 M839 479 847 483 854 489 M989 648 978 649 968 648 M968 805 960 804 953 803 M989 474 986 474 984 475 M803 591 802 591 M685 401 679 401 673 404 M1269 470 1275 478 1283 483 M700 452 706 452 709 453 M1249 801 1241 809 1239 820 M998 458 995 456 993 454 M811 470 813 473 815 477 M1009 512 1006 510 1004 507 M976 563 977 560 978 556 M1113 441 1113 435 1114 429 M775 441 783 439 791 435 M1107 652 1104 643 1101 634 M899 609 902 611 904 613 M1297 766 1295 758 1297 749 M1022 510 1024 508 1027 505 M907 633 905 631 902 630 M1206 638 1194 632 1188 620 M1289 500 1280 500 1272 497 M802 429 807 420 812 412 M1232 805 1223 808 1213 810 M1018 506 1015 506 1012 506 M1336 579 1331 574 1324 570 M1073 417 1074 410 1074 403 M1175 731 1176 719 1174 708 M908 828 917 824 927 822 M1175 731 1175 742 1172 752 M1188 436 1193 427 1199 418 1202 408 M1177 490 1174 484 1171 478 M1324 300 1317 299 1309 299 M856 506 855 509 853 512 M661 433 656 438 653 443 M1100 451 1104 457 1106 463 M1365 583 1353 588 1344 596 M1305 353 1293 352 1282 348 M974 589 976 586 980 584 M971 478 974 477 976 475 M1139 592 1140 597 1142 603 M973 513 971 513 968 514 M1008 469 1009 466 1009 462 M998 442 996 445 994 448 M1037 520 1038 517 1038 514 M986 579 988 579 990 578 M1222 524 1228 514 1235 506 M990 584 993 587 995 590 M1051 455 1051 448 1053 441 M798 469 802 466 806 465 M981 560 978 561 976 563 M694 465 689 463 685 460 M1258 661 1257 653 1256 646 M993 481 991 482 989 484 M617 484 611 484 605 485 M1202 408 1196 403 1189 398 M1271 615 1262 621 1256 629 M812 662 805 666 797 669 M725 575 724 574 725 567 M1072 345 1081 344 M815 538 812 532 809 527 M1152 715 1151 704 1155 694 M1255 822 1247 820 1239 820 M685 401 691 403 697 404 M882 526 881 528 880 534 M1292 305 1288 298 1288 290 M700 452 702 457 706 460 M1096 662 1091 655 1084 650 M1112 740 1104 739 1097 741 M1140 508 1138 501 1138 494 M946 491 948 491 M803 592 803 591 M656 473 649 474 642 476 M939 666 938 659 937 651 M1121 494 1122 489 1123 484 M1232 805 1239 796 1241 792 M946 695 938 698 931 698 M860 469 867 466 874 464 M1154 401 1148 404 1143 409 M975 535 978 536 980 536 M771 462 777 461 783 460 M966 741 965 730 971 721 M984 453 984 456 983 459 M745 450 745 455 M745 461 744 468 M1223 664 1235 662 1245 667 M941 514 939 515 936 516 M884 775 891 780 898 783 M986 558 983 559 981 560 M952 556 952 558 952 561 M890 550 893 554 898 562 M1044 511 1043 508 1043 504 M802 429 796 426 790 422 M794 706 796 705 805 702 M1275 750 1285 746 1297 749 M1345 537 1338 535 1333 532 M965 558 963 555 964 552 M774 529 768 526 M834 768 839 761 842 753 M912 535 916 536 920 535 M1324 570 1325 564 1326 558 M890 797 881 795 874 789 M690 444 687 438 686 430 M980 536 981 539 983 542 M926 526 925 528 924 531 M968 509 966 510 964 511 M1129 429 1132 424 1137 421 M1324 300 1330 307 1339 309 M839 511 839 515 838 519 M951 568 949 567 946 566 M875 614 882 611 888 610 M1149 578 1152 571 1154 564 M1030 616 1022 617 1014 621 M1255 822 1251 812 1249 801 M792 485 791 482 792 478 M964 543 960 541 956 539 M1337 462 1342 470 1346 478 M1287 563 1280 566 1274 570 M1071 570 1069 565 1069 559 M984 547 985 550 985 553 M1311 627 1318 617 1325 607 M812 662 805 656 799 649 M1024 588 1022 587 1021 585 M702 469 704 465 706 460 M995 465 992 465 990 466 M1093 377 1095 367 1096 360 M1331 353 1335 345 1338 336 1336 326 M841 626 832 627 824 626 M1024 588 1021 589 1019 591 M886 731 890 740 894 749 M1335 516 1340 520 1345 525 M1031 714 1037 709 1042 704 M1174 418 1168 419 1162 420 M1318 512 1311 515 1303 516 M678 468 671 463 669 454 M852 717 859 727 865 737 M1254 518 1249 522 1246 528 M1325 607 1318 606 1311 607 M1156 730 1149 734 1142 737 M698 426 704 428 706 428 M1101 489 1106 487 1110 486 M1000 592 1003 590 1006 587 M924 624 927 626 930 626 M1341 494 1347 487 1346 478 M838 452 833 447 828 443 M1122 535 1117 533 1112 531 M1174 831 1183 836 1194 837 M1069 503 1066 509 1060 512 M1060 594 1069 597 1075 605 M1112 702 1101 702 1092 707 M985 631 975 630 966 631 M1067 706 1060 698 1053 692 M1042 479 1046 474 1050 469 M1210 622 1220 623 1230 623 M1137 533 1142 530 1148 529 M1260 576 1270 578 1276 586 M859 514 864 517 868 520 M1020 488 1016 486 1013 483 M1331 353 1342 353 1352 355 M1148 625 1150 619 1154 615 M1073 482 1076 488 1083 491 M994 825 986 822 980 817 M1069 620 1062 625 1054 628 M1066 749 1072 755 1078 761 M1255 502 1254 510 1254 518 M757 653 753 646 749 638 M674 434 680 433 686 430 M1327 476 1325 486 1323 495 M1244 328 1240 322 1239 314 M772 508 766 514 763 519 M802 429 810 431 816 436 M1192 529 1184 525 1177 520 M953 512 951 510 948 509 M991 555 992 558 993 561 M1205 535 1199 532 1192 529 M1061 471 1055 471 1050 469 M1172 752 1180 745 1191 746 M1112 474 1111 480 1110 486 M993 481 993 478 994 476 M971 552 975 553 978 556 M971 577 968 576 966 575 M1000 495 996 495 991 496 M1369 316 1365 304 1364 293 M1003 437 1004 439 1005 442 M983 488 987 487 989 484 M902 637 904 635 907 633 M833 643 830 649 825 655 M803 506 802 500 803 495 M961 474 960 470 958 467 M906 805 913 797 921 790 M907 728 896 729 886 731 M665 395 669 400 673 404 M1128 587 1120 584 1112 584 M1030 736 1030 725 1031 714 M1066 832 1060 828 1056 821 M1062 404 1068 404 1074 403 M981 527 981 531 980 536 M944 505 946 505 948 504 M795 685 789 676 779 672 M1132 602 1137 598 1139 592 M1006 495 1009 498 1013 499 M1001 516 1000 513 998 510 M853 545 852 544 M1146 472 1140 472 1134 472 M846 520 844 517 844 514 M832 519 829 518 826 519 M825 548 817 552 816 553 M1000 485 1001 488 1003 490 M629 434 625 440 624 446 M1242 393 1250 389 1256 382 M959 754 962 747 966 741 M1044 499 1043 501 1043 504 M984 518 987 516 991 516 M853 642 849 632 841 626 M931 698 930 688 930 679 M1165 782 1165 774 1164 767 M1182 381 1187 372 1187 370 M1014 621 1005 622 996 619 M1017 498 1016 495 1013 491 M963 532 961 534 958 535 M965 483 962 481 959 479 M1144 438 1150 444 1157 448 M1201 609 1195 615 1188 620 M679 446 685 450 692 452 M755 398 760 390 761 380 M1319 751 1314 742 1308 736 1299 732 M1232 708 1228 699 1225 690 M795 406 803 411 812 412 M1157 448 1165 443 1170 435 M953 512 951 515 950 519 M1016 586 1014 584 1014 581 M1180 814 1187 818 1195 822 M953 500 956 498 958 496 M991 501 992 503 992 505 M954 532 956 530 957 528 M1344 786 1333 782 1330 783 M1188 599 1194 604 1201 609 M1034 464 1037 472 1042 479 M1030 638 1039 639 1046 642 M829 688 827 679 827 670 M823 759 823 758 M973 546 975 544 978 543 M860 469 862 480 872 487 M994 510 996 510 998 510 M1254 679 1249 674 1245 667 M741 389 743 383 748 378 M951 636 944 631 935 630 M1363 614 1366 607 1371 601 M775 400 769 399 M762 398 755 398 M966 575 963 577 959 578 M1009 577 1009 579 1009 582 M905 539 903 538 900 538 M1174 465 1173 472 1171 478 M1004 565 1003 563 1003 559 M1067 784 1067 777 1066 769 M1239 820 1231 822 1223 823 M826 478 824 473 823 467 M1139 592 1144 592 1149 593 M1225 564 1231 557 1235 548 M948 537 949 535 950 533 M743 367 746 372 748 378 M1221 647 1233 645 1243 637 M1318 512 1318 503 1323 495 M772 495 769 489 764 485 M902 637 900 646 893 652 M933 526 930 526 926 526 M1009 462 1010 466 1014 467 M1310 715 1305 724 1299 732 M1102 723 1107 732 1112 740 M853 682 849 692 848 702 M868 534 874 533 880 534 M1144 649 1153 643 1162 638 M981 684 990 692 998 702 M985 470 987 472 989 474 M1323 377 1325 386 1328 394 M976 460 973 462 970 465 M1014 517 1014 521 1013 524 M1264 596 1270 591 1276 586 M782 652 791 651 799 649 M936 516 934 516 934 516 M1137 533 1138 527 1138 520 M1183 645 1192 651 1201 657 M931 618 930 622 930 626 M1013 499 1015 503 1018 506 M1322 679 1329 683 1335 687 M940 539 942 541 945 541 M1026 493 1023 493 1020 493 M1255 548 1245 550 1235 548 M1231 590 1235 584 1239 578 M986 558 989 557 991 555 M958 496 961 494 963 492 M853 531 850 535 848 539 M979 472 981 474 984 475 M1031 714 1021 718 1012 723 M1261 341 1271 346 1282 348 M964 467 966 464 966 460 M910 601 906 601 903 601 M1283 483 1279 491 1272 497 M1124 770 1125 761 1126 752 M1295 375 1297 385 1304 392 M976 447 973 447 970 445 M775 441 780 445 784 448 M917 546 917 549 919 550 M924 624 925 621 924 618 M1035 526 1033 525 1030 525 M801 456 796 459 793 463 M678 468 684 469 690 473 M761 380 754 380 748 378 M964 568 967 569 971 571 M984 547 986 546 988 544 M944 550 940 549 936 548 M825 548 821 541 815 538 M956 539 954 542 951 542 M1073 417 1067 419 1061 419 M629 504 626 509 M1348 657 1352 664 1356 672 M985 470 984 473 984 475 M1223 664 1217 668 1213 674 M1285 598 1298 602 1311 607 M1277 668 1284 677 1292 684 M959 458 959 457 963 456 M964 543 965 545 967 546 M871 751 867 744 865 737 M983 497 981 501 978 503 M919 646 921 641 920 636 M831 462 836 458 838 452 M833 643 841 636 841 626 M1063 667 1063 657 1062 648 M967 453 969 455 971 457 M1253 710 1256 701 1261 694 M1017 699 1026 696 1034 691 M985 553 987 551 989 550 M1302 319 1308 327 1311 336 M899 609 899 614 899 618 M788 369 794 363 797 361 M799 484 800 479 801 475 M1321 321 1329 324 1336 326 M1003 437 1006 437 1009 438 M929 531 926 530 924 531 M983 757 975 749 966 741 M948 537 946 539 945 541 M958 522 958 519 956 517 M948 537 946 535 944 535 M839 610 842 603 842 602 M1204 761 1210 765 M1010 476 1011 474 1013 472 M991 501 992 498 991 496 M1188 436 1187 445 1187 454 M1002 543 1002 546 1001 548 M1357 402 1358 391 1357 380 M968 524 965 526 962 527 M930 542 933 540 935 538 M1172 752 1165 754 1157 754 M918 598 917 603 913 605 M919 646 918 641 914 638 M1371 369 1372 379 1372 389 M800 443 802 446 805 450 M1350 334 1343 330 1336 326 M829 688 820 685 810 682 M1086 591 1081 599 1075 605 M995 534 993 537 990 539 M702 477 704 477 M1129 512 1124 511 1118 512 M1042 704 1036 699 1034 691 M1083 491 1087 495 1089 499 M1007 452 1010 451 1012 449 M1093 691 1085 694 1078 696 M783 460 788 460 793 463 M1095 794 1105 792 1116 793 M1341 564 1339 572 1336 579 M1152 678 1161 675 1170 678 M1163 554 1157 558 1154 564 M1092 707 1085 701 1078 696 M939 534 938 537 935 538 M850 770 844 779 843 790 M1371 369 1369 359 1368 349 M1100 508 1105 513 1110 518 M705 414 701 409 697 404 M784 448 787 441 791 435 M1172 397 1168 402 1165 407 M1256 382 1258 391 1261 399 M1326 765 1332 757 1336 748 1342 740 M1176 613 1174 617 1174 622 M830 525 833 528 835 530 M995 552 997 554 1000 556 M990 443 987 442 985 439 M893 652 887 657 886 665 M971 470 971 468 970 465 M1019 591 1018 588 1016 586 M969 519 968 518 965 517 M1341 494 1347 501 1352 508 M1067 706 1071 699 1078 696 M1303 516 1294 509 1289 500 M653 443 655 450 655 456 M936 548 934 550 931 551 M1058 805 1050 805 1042 807 M1138 399 1138 400 1143 409 M1276 586 1275 578 1274 570 M1029 555 1030 548 1029 542 M1350 334 1352 344 1352 355 M1012 723 1003 720 996 716 M1035 499 1032 499 1029 499 M1204 797 1215 794 1225 791 M716 386 717 387 M958 556 955 557 952 556 M1080 439 1076 433 1071 429 M965 558 969 559 973 559 M934 555 936 554 939 554 M1096 472 1102 469 1106 463 M962 683 967 690 971 699 975 707 M912 535 914 538 917 540 M805 702 801 710 800 714 M650 498 653 501 M725 567 720 561 717 559 M788 631 794 640 799 649 M1126 647 1135 649 1144 649 M1225 564 1219 562 1213 560 M1126 524 1133 524 1138 520 M996 585 995 587 995 590 M815 477 816 481 814 485 M969 519 968 517 968 514 M1107 652 1100 656 1096 662 M1126 647 1121 640 1116 632 M964 568 964 565 965 563 M1165 613 1165 608 1165 602 M1224 311 1225 314 M939 666 943 673 946 680 M995 545 992 544 988 544 M936 615 934 616 931 618 M1073 417 1066 411 1062 404 M970 530 971 534 971 539 M849 740 845 747 842 753 M1026 493 1028 496 1029 499 M1192 529 1195 535 1196 542 M806 383 810 388 815 392 M685 460 688 456 692 452 M1108 542 1102 546 1096 552 M736 648 736 656 737 665 M1292 549 1298 543 1303 537 M1051 455 1050 462 1050 469 M975 499 977 501 978 503 M772 495 763 498 759 505 M1254 612 1244 611 1236 609 1227 605 M772 495 779 498 787 500 M915 693 912 687 911 679 M915 748 914 756 914 765 M1339 309 1338 318 1336 326 M986 446 989 445 990 443 M1162 813 1163 814 M1127 726 1135 732 1142 737 M988 457 987 460 987 462 M1162 638 1155 631 1148 625 M1096 581 1105 581 1112 584 M858 590 860 592 865 596 M1296 409 1303 417 1307 427 M813 722 815 715 818 708 M1085 510 1083 516 1084 522 M1061 471 1065 464 1067 457 M1107 652 1096 647 1084 650 M968 785 966 774 970 764 M1256 629 1255 637 1256 646 M739 666 737 665 M762 544 760 551 755 556 M904 666 900 658 893 652 M678 468 680 463 685 460 M834 768 828 763 823 758 M1096 581 1089 571 1086 559 M1212 500 1220 495 1227 488 M1080 539 1079 545 1078 550 M968 509 968 511 968 514 M1062 404 1060 411 1061 419 M839 610 840 618 841 626 M716 405 706 403 697 404 M1010 590 1013 588 1016 586 M975 580 976 576 977 573 M1012 534 1016 535 1021 537 M946 529 948 531 950 533 M798 469 795 473 792 478 M1054 544 1060 541 1066 539 M985 631 990 624 996 619 M944 550 945 548 947 546 M893 622 894 619 893 615 M841 464 840 471 839 479 M912 535 911 540 910 544 M1235 506 1229 498 1227 488 M1218 453 1223 461 1230 467 M784 482 773 481 764 485 M1020 480 1019 477 1018 475 M971 457 972 453 972 449 M835 711 827 710 818 708 M965 558 961 557 958 556 M787 500 785 509 781 518 M1195 587 1192 593 1188 599 M1204 797 1205 788 1208 779 M865 737 858 744 857 754 M1034 511 1036 512 1038 514 M955 487 954 489 953 491 M878 692 876 684 876 676 M1231 590 1222 580 1212 572 M1041 606 1049 608 1058 608 M1086 559 1078 557 1069 559 M915 693 924 687 930 679 M706 460 708 463 M1067 784 1057 786 1048 789 M690 444 691 449 692 452 M995 534 998 534 1001 534 M941 571 941 568 940 565 M1222 394 1232 392 1242 393 M1000 592 1001 588 1002 585 M1208 779 1196 781 1187 772 M826 478 820 479 815 477 M1341 564 1334 560 1326 558 M1066 769 1071 763 1078 761 M1222 524 1223 532 1225 539 M1182 695 1185 703 1191 709 M965 477 963 475 961 474 M976 460 973 459 971 457 M993 481 994 483 995 486 M948 504 946 501 943 500 M1028 424 1033 425 1044 432 M694 465 692 469 690 473 M907 728 912 737 915 748 M1001 684 991 683 981 684 M930 546 928 546 925 545 M973 546 975 549 978 551 M1252 426 1242 430 1233 430 M1201 609 1205 602 1207 595 M1149 593 1156 590 1163 588 M1006 551 1003 554 1000 556 M731 556 739 548 749 545 M934 555 934 551 936 548 M1101 489 1095 481 1085 480 M1159 535 1162 528 1165 522 M1369 680 1371 691 1370 702 M800 443 795 438 791 435 M835 536 832 534 829 533 M686 481 687 476 690 473 M843 790 851 793 858 793 M959 587 956 598 953 608 M969 519 972 521 974 522 M853 518 849 518 846 520 M968 611 977 606 986 603 995 602 M999 451 1003 452 1007 452 M1177 490 1183 483 1191 478 M1092 756 1100 757 1107 757 M1365 563 1365 556 1363 549 M970 489 966 490 963 492 M795 685 796 677 797 669 M1270 360 1266 351 1261 341 M1020 448 1016 449 1012 449 M993 471 995 468 995 465 M1066 832 1072 836 1073 836 M1223 664 1224 655 1221 647 M936 516 935 514 M1000 485 997 486 995 486 M1001 534 1003 536 1005 537 M964 568 964 572 966 575 M1102 499 1096 499 1089 499 M978 503 976 505 975 507 M956 730 948 733 939 734 M991 501 994 502 998 502 M1113 441 1105 435 1096 430 M925 612 928 609 931 604 M738 512 737 509 M1159 577 1156 571 1154 564 M745 450 742 453 M1287 563 1288 572 1292 580 M918 610 922 610 925 612 M1018 470 1015 471 1013 472 M977 573 976 570 975 568 M946 529 945 532 944 535 M953 500 951 502 948 504 M1311 627 1301 623 1292 619 M702 477 702 473 702 469 M1292 549 1289 542 1284 536 M1329 592 1318 595 1308 592 M1042 479 1049 481 1056 482 M1014 517 1016 515 1017 513 M1324 300 1325 311 1321 321 M1216 706 1203 706 1191 709 M1362 717 1367 710 1370 702 M839 437 834 441 828 443 M893 622 897 624 901 623 M1174 465 1180 459 1187 454 M1195 494 1202 500 1212 500 M1051 765 1046 759 1041 754 M1369 662 1369 652 1365 643 M1174 575 1168 581 1163 588 M1154 602 1155 609 1154 615 M935 630 933 627 930 626 M1243 637 1250 634 1256 629 M968 446 970 445 M1126 524 1119 528 1112 531 M1093 691 1087 683 1079 676 M1047 419 1045 426 1044 432 M904 666 911 656 919 646 M1085 510 1089 516 1095 521 M1289 500 1297 496 1305 494 M1034 464 1042 466 1050 469 M995 552 992 551 989 550 M1078 466 1083 461 1085 455 M955 564 958 563 960 561 M1365 643 1367 635 1368 628 M842 665 834 667 827 670 M1049 506 1054 510 1060 512 M1159 577 1167 578 1174 575 M1157 754 1151 760 1147 766 M995 437 995 437 998 437 M1272 296 1275 305 1276 313 M1332 630 1341 631 1349 636 M1206 638 1195 644 1183 645 M1034 464 1026 466 1018 470 M822 522 823 528 822 533 M1245 484 1246 473 1247 462 M1210 622 1218 613 1227 605 M990 592 991 588 990 584 M1248 443 1257 445 1266 444 M1009 462 1007 463 1005 465 M1183 645 1181 633 1174 622 M1177 541 1181 548 1187 553 M1352 355 1360 352 1368 349 M1357 380 1350 374 1341 370 M1051 720 1041 716 1031 714 M667 415 670 410 673 404 M812 662 819 666 827 670 M825 502 827 507 830 512 M956 465 956 465 958 467 M975 580 978 582 980 584 M1107 757 1117 754 1126 752 M1154 401 1157 395 M656 473 658 479 656 486 M1177 599 1171 601 1165 602 M769 553 765 553 755 556 M1183 645 1181 653 1179 662 M1054 544 1050 540 1048 534 M983 497 980 494 979 491 M997 762 992 752 989 742 M974 493 975 491 975 488 M1261 694 1270 693 1278 689 M1364 456 1356 462 1351 469 1346 478 M1008 469 1011 468 1014 467 M1071 429 1065 424 1061 419 M996 527 996 524 996 521 M990 584 988 585 986 586 M926 526 928 528 929 531 M978 456 981 457 983 459 M1295 528 1299 522 1303 516 M915 528 915 528 915 530 M1216 706 1218 697 1225 690 M991 489 988 490 986 492 M1158 481 1153 483 1148 485 M865 700 856 699 848 702 M1292 549 1297 554 1301 558 M1297 749 1289 757 1285 762 M1347 615 1355 615 1363 614 M1092 607 1100 607 1107 609 M1357 535 1351 537 1345 537 M878 692 885 685 893 681 M1255 822 1262 820 1262 820 M1126 647 1116 649 1107 652 M791 453 796 453 801 456 M1345 525 1353 525 1359 523 M914 765 920 769 925 775 M1354 557 1350 553 1346 549 M968 805 975 802 981 796 M772 508 776 514 781 518 M1060 527 1054 530 1048 534 M893 681 885 678 876 676 M871 751 864 752 857 754 M1119 455 1123 450 1129 445 M998 575 994 576 990 578 M957 668 952 675 946 680 M1235 506 1239 510 1242 516 M973 559 976 558 978 556 M745 450 749 455 755 458 M1213 674 1210 664 1201 657 M1150 428 1144 425 1137 421 M839 610 830 617 824 626 M1051 765 1058 767 1066 769 M1292 305 1301 302 1309 299 M634 493 633 485 629 479 M964 828 954 832 944 835 M1347 615 1344 606 1344 596 M629 434 622 433 M773 379 773 371 773 364 M906 805 903 813 895 816 M1247 462 1239 464 1230 467 M1322 679 1314 682 1307 688 M1188 599 1190 609 1188 620 M1093 691 1101 699 1112 702 M986 573 989 575 990 578 M779 672 779 679 M1342 673 1340 681 1335 687 M964 467 967 470 971 470 M977 662 983 672 981 684 M1371 369 1364 375 1357 380 M1331 353 1336 362 1341 370 M953 524 955 520 956 517 M933 756 937 745 939 734 M801 630 810 633 M915 693 923 697 931 698 M1261 341 1254 348 1247 355 M1177 490 1186 490 1195 494 M1205 535 1209 529 1211 521 M1095 794 1101 804 1104 807 M1246 528 1243 522 1242 516 M971 478 968 477 965 477 M1182 381 1184 390 1189 398 M863 529 863 526 861 523 M1357 535 1359 543 1363 549 M841 626 853 627 865 624 M952 556 952 552 950 549 M841 497 840 488 839 479 M1052 741 1045 746 1041 754 M1028 510 1027 508 1027 505 M1176 613 1171 611 1165 613 M962 501 964 503 967 504 M1123 474 1128 472 1134 472 M1371 369 1361 362 1352 355 M952 786 946 791 939 793 M989 563 989 565 988 568 M975 707 974 714 971 721 M986 446 984 444 981 442 M732 510 737 509 M1008 502 1010 504 1012 506 M1327 713 1327 705 1324 698 M830 512 835 512 839 511 M1195 587 1189 588 1184 589 M1269 470 1261 475 1254 481 1245 484 M912 631 909 632 907 633 M725 567 733 567 740 568 M965 483 967 487 970 489 M930 679 921 677 911 679 M1096 430 1105 430 1114 429 M1037 776 1046 780 1048 789 M1096 581 1101 570 1108 559 M1159 535 1154 531 1148 529 M803 506 807 516 809 527 M909 557 911 551 910 544 M1234 730 1233 730 M685 401 683 408 682 416 M1143 453 1137 448 1129 445 M1174 589 1171 582 1174 575 M1162 420 1155 422 1150 428 M1248 443 1251 435 1252 426 M981 796 980 807 980 817 M979 491 981 490 983 488 M775 400 768 406 766 408 M925 545 921 545 917 546 M1044 511 1043 514 1043 517 M1034 511 1033 514 1031 516 M1029 542 1025 540 1021 537 M1249 801 1248 798 M1223 664 1232 658 1241 652 M1154 602 1159 602 1165 602 M853 518 848 517 844 514 M994 825 986 828 980 834 M981 527 981 524 980 521 M1179 662 1190 659 1201 657 M1308 576 1305 584 1308 592 M803 495 807 494 812 493 M1149 496 1144 494 1138 494 M998 442 994 443 990 443 M994 510 993 508 992 505 M996 585 999 585 1002 585 M1101 489 1102 494 1102 499 M1000 495 998 493 998 490 M966 460 969 458 971 457 M1040 678 1047 685 1053 692 M986 446 984 447 981 447 M839 511 842 512 844 514 M1252 726 1250 727 M1246 728 1243 730 1234 730 M1283 649 1289 654 1296 657 M839 813 837 822 835 831 M945 522 943 521 941 519 M940 565 943 566 946 566 M1132 602 1137 603 1142 603 M1147 517 1143 519 1138 520 M1330 435 1338 430 1344 424 M1357 402 1347 411 1344 424 M1016 637 1011 629 1014 621 M811 611 815 606 824 600 M1138 627 1127 628 1116 632 M824 410 820 410 812 412 M1162 638 1168 630 1174 622 M1017 498 1015 498 1013 499 M1232 805 1227 813 1223 823 M639 447 642 442 642 435 M1113 499 1111 492 1110 486 M860 469 855 462 850 455 M846 506 843 502 841 497 M1093 691 1095 684 1099 677 M1283 522 1282 529 1284 536 M986 573 985 576 986 579 M1159 535 1160 545 1163 554 M924 624 922 626 919 626 M983 757 978 762 970 764 M996 527 994 529 992 531 M1004 565 1001 563 998 561 M672 384 669 390 665 395 M1157 754 1150 745 1142 737 M1057 430 1055 436 1053 441 M1046 554 1042 550 1041 544 M899 766 895 758 894 749 M1081 777 1088 774 1095 771 M1028 661 1016 654 1003 651 M989 563 986 565 981 566 M915 622 917 624 919 626 M947 497 945 499 943 500 M1319 751 1324 757 1326 765 M1057 496 1051 497 1044 499 M1186 677 1184 668 1179 662 M964 467 962 471 961 474 M1147 517 1149 512 1151 506 M1082 719 1081 728 1080 737 M1254 612 1254 620 1256 629 M1188 436 1194 442 1203 445 M969 495 967 496 965 498 M1035 499 1035 494 1036 489 M991 516 994 518 996 521 M1216 706 1213 714 M1311 547 1306 552 1301 558 M993 570 992 574 990 578 M1022 531 1021 534 1021 537 M629 504 621 499 615 497 M612 496 612 496 M998 561 996 561 993 561 M1236 411 1235 420 1233 430 M964 511 961 510 959 508 M1001 469 1000 465 1001 461 M786 389 779 384 773 379 M831 540 835 545 836 545 M988 510 986 512 984 513 M1001 469 1003 471 1005 472 M782 652 775 657 768 663 M923 593 925 599 931 604 M1001 684 1011 682 1021 680 M665 395 659 401 654 400 M1341 702 1343 711 1346 720 M1129 512 1134 508 1140 508 M1196 542 1198 548 1199 555 M1323 377 1315 387 1304 392 M951 482 951 482 951 485 M985 537 987 535 987 533 M1096 552 1102 544 1101 534 M876 676 881 670 886 665 M1235 548 1231 543 1225 539 M846 506 851 506 856 506 M1275 409 1277 398 1281 387 M1113 441 1107 446 1100 451 M884 775 877 775 870 771 M1083 404 1081 404 1074 403 M991 516 988 514 984 513 M822 455 818 458 813 460 M868 542 868 540 868 534 M898 596 893 603 888 610 M998 458 999 459 1001 461 M1221 647 1226 635 1230 623 M1006 551 1003 550 1001 548 M754 567 748 565 740 568 M1264 558 1269 564 1274 570 M1233 366 1236 375 M939 534 938 532 937 530 M1262 318 1260 310 1258 302 M939 734 930 732 922 735 M865 700 859 709 852 717 M1080 737 1088 740 1097 741 M1157 468 1164 463 1166 455 M1147 517 1157 516 1164 511 M1101 489 1098 481 1096 472 M986 503 984 505 982 507 M853 642 864 649 876 649 M993 471 995 472 998 473 M707 446 708 447 M1057 496 1052 500 1049 506 M923 720 933 720 941 716 M1014 459 1012 457 1010 456 M1037 504 1035 507 1034 511 M1341 564 1348 563 1354 557 M894 536 892 537 M974 493 971 494 969 495 M957 460 958 461 961 462 M980 817 982 826 980 834 M1243 637 1242 645 1241 652 M957 571 958 574 959 578 M1006 430 1006 433 M811 470 806 473 801 475 M1004 507 1001 508 998 510 M1019 567 1017 566 1015 563 M774 529 767 536 762 544 M1347 296 1344 303 1339 309 M653 443 647 440 642 435 M740 537 744 540 749 545 M774 529 780 533 784 538 M803 506 813 509 823 512 M1063 667 1072 671 1079 676 M974 589 971 588 969 587 M1110 486 1116 484 1123 484 M650 498 646 502 M873 506 872 514 868 520 M1214 835 1218 828 1223 823 M939 534 939 537 940 539 M1030 638 1031 627 1030 616 M840 544 837 541 835 536 M944 622 948 614 953 608 M930 542 926 541 922 540 M1096 662 1095 670 1099 677 M1300 671 1294 665 1296 657 M1006 495 1008 499 1008 502 M954 532 956 533 958 535 M1157 448 1150 451 1143 453 M939 770 947 771 955 769 M890 797 893 790 898 783 M912 535 914 533 915 530 M672 384 679 381 680 380 M1058 805 1054 813 1056 821 M789 471 790 475 792 478 M954 654 961 652 968 648 M679 446 685 446 690 444 M1049 506 1046 508 1044 511 M1133 662 1136 653 1144 649 M1203 464 1206 473 1210 482 M1308 592 1310 599 1311 607 M957 668 958 676 962 683 M872 487 863 490 854 489 M1308 576 1317 575 1324 570 M843 535 846 537 848 539 M626 414 634 419 645 422 M924 806 931 799 939 793 M1174 589 1168 588 1163 588 M1239 314 1249 309 1258 302 M1021 750 1012 746 1003 748 M1001 534 1001 531 1001 527 M1213 674 1219 682 1225 690 M922 604 918 605 913 605 M1122 535 1120 542 1116 549 M985 631 992 633 999 635 M1195 587 1202 589 1207 595 M991 489 993 487 995 486 M886 731 875 734 865 737 M981 442 983 441 985 439 M707 395 712 391 716 386 M1095 794 1093 783 1095 771 M1308 648 1316 653 1322 661 M965 498 968 499 970 501 M968 785 960 785 952 786 M1165 522 1157 526 1148 529 M744 366 752 363 761 363 M917 540 919 540 922 540 M1054 544 1056 535 1060 527 M938 509 937 509 M700 452 703 448 707 446 M1004 565 1003 568 1002 570 M1305 494 1314 494 1323 495 M843 535 838 533 835 530 M1310 528 1305 531 1303 537 M1041 754 1029 760 1019 768 M949 819 948 810 953 803 M964 467 965 470 966 472 M1019 567 1028 567 1037 567 M1100 451 1096 447 1091 443 M1323 727 1310 728 1299 732 M1002 543 1006 545 1010 545 M1154 602 1150 608 1144 612 M956 473 954 473 M976 563 976 566 975 568 M741 389 741 396 741 397 M737 509 743 512 745 513 M1008 490 1005 490 1003 490 M1255 502 1250 493 1245 484 M1009 527 1011 526 1013 524 M782 652 775 646 769 639 762 632 M1308 648 1311 638 1311 627 M1028 661 1038 652 1046 642 M1062 648 1054 644 1046 642 M866 663 859 672 853 682 M1082 719 1086 712 1092 707 M1101 489 1092 493 1083 491 M796 534 790 535 784 538 M833 643 839 653 842 665 M1326 765 1319 768 1312 768 M1122 535 1114 537 1108 542 M1046 554 1041 560 1037 567 M639 447 646 445 653 443 M947 546 949 544 951 542 M794 518 794 526 796 534 M1183 645 1175 648 1167 651 M1006 587 1004 585 1002 585 M1187 772 1196 767 1204 761 M849 526 846 526 843 528 M924 624 924 627 924 630 M908 828 914 832 921 836 M1003 477 1001 475 998 473 M1133 662 1141 672 1152 678 M1029 555 1036 551 1041 544 M1244 560 1242 569 1239 578 M920 666 917 673 911 679 M853 642 861 635 865 624 M1255 548 1262 542 1270 538 M1155 694 1147 691 1139 689 M877 591 876 583 876 579 M736 495 735 501 737 509 M998 561 1001 560 1003 559 M1035 532 1040 537 1041 544 M1110 518 1115 515 1118 512 M1030 638 1030 650 1028 661 M973 546 972 542 971 539 M933 756 924 751 915 748 M1138 627 1143 620 1144 612 M762 632 767 626 768 622 M955 545 953 543 951 542 M1058 805 1061 794 1067 784 M1162 622 1159 618 1154 615 M940 539 938 538 935 538 M923 593 920 595 918 598 M844 514 841 516 838 519 M1108 780 1101 776 1095 771 M1009 438 1009 435 1006 433 M1080 821 1087 817 1093 817 M956 730 963 726 971 721 M1092 756 1096 749 1097 741 M1286 327 1282 337 1282 348 M794 551 790 544 784 538 M1252 726 1253 728 M1319 751 1330 746 1342 740 M1026 802 1037 795 1048 789 M1006 485 1003 485 1000 485 M997 762 1000 771 1005 779 M919 568 914 563 909 557 M1064 682 1060 689 1053 692 M1121 494 1117 497 1113 499 M1155 694 1152 686 1152 678 M882 633 889 632 895 631 M1203 464 1196 470 1191 478 M1174 589 1179 589 1184 589 M1078 634 1089 633 1101 634 M1081 777 1079 769 1078 761 M973 559 973 555 971 552 M1239 314 1232 311 1224 311 M1207 595 1218 599 1227 605 M920 666 925 673 930 679 M1286 327 1299 330 1311 336 M772 508 765 507 759 505 M978 510 976 509 975 507 M700 452 696 452 692 452 M948 554 950 555 952 556 M848 545 852 544 M1157 468 1156 474 1158 481 M1121 494 1116 490 1110 486 M977 518 981 517 984 513 M1069 503 1076 497 1083 491 M877 591 872 595 865 596 M1006 485 1005 483 1005 481 M884 775 880 782 874 789 M855 816 857 805 858 793 M1009 512 1013 513 1017 513 M944 550 946 551 948 554 M1017 513 1020 515 1022 518 M716 386 716 384 M794 518 787 518 781 518 M1041 544 1044 539 1048 534 M1075 605 1072 596 1072 585 M1069 503 1077 505 1085 510 M863 498 860 503 856 506 M1356 696 1360 684 1356 672 M877 805 869 797 858 793 M1170 435 1170 442 1175 447 M1231 836 1227 829 1223 823 M899 766 898 775 898 783 M988 479 991 477 994 476 M1195 822 1192 829 1194 837 M1127 726 1134 719 1143 717 1152 715 M906 805 911 816 908 828 M1323 524 1328 528 1333 532 M952 786 950 794 953 803 M973 513 975 515 977 518 M978 510 980 508 982 507 M1127 677 1134 683 1139 689 M899 766 907 764 914 765 M1323 727 1326 720 1327 713 M1131 459 1134 465 1134 472 M841 464 844 458 850 455 M1308 648 1297 643 1289 635 M890 797 898 801 906 805 M1005 458 1004 462 1005 465 M1030 736 1040 727 1051 720 M971 470 973 473 976 475 M859 514 860 518 861 523 M1177 790 1169 792 1163 798 M1108 542 1104 538 1101 534 M1344 786 1353 783 1361 781 M1008 490 1011 487 1013 483 M1116 549 1111 553 1108 559 M963 450 964 451 967 453 M1013 491 1017 492 1020 493 M1100 508 1098 515 1095 521 M1000 485 1002 482 1005 481 M1138 785 1134 791 1134 792 M1210 426 1208 417 1202 408 M823 467 819 472 815 477 M941 560 944 560 946 560 M1010 590 1008 593 1005 594 M918 610 916 608 913 605 M1030 736 1022 728 1012 723 M993 454 991 453 990 451 M807 482 811 484 814 485 M855 523 858 523 861 523 M1012 723 1014 732 1018 741 1021 750 M953 524 949 523 945 522 M788 369 781 366 773 364 M868 520 873 528 880 534 M1336 543 1340 540 1345 537 M984 592 982 591 979 591 M1009 512 1012 514 1014 517 M995 545 998 547 1001 548 M882 714 875 717 867 718 M1051 398 1056 401 1062 404 M1093 377 1091 382 M1143 409 1139 415 1137 421 M999 635 995 642 989 648 M944 622 946 630 951 636 M1010 476 1008 479 1005 481 M1318 408 1313 418 1307 427 M1047 523 1054 524 1060 527 M1297 749 1299 740 1299 732 M825 820 830 826 835 831 M875 614 875 602 877 591 M1210 482 1218 486 1227 488 M825 502 830 505 836 506 M965 483 965 480 965 477 M1001 548 1002 552 1000 556 M1053 692 1043 693 1034 691 M1080 539 1073 540 1066 539 M985 537 983 539 983 542 M1157 448 1161 452 1166 455 M1113 441 1116 448 1119 455 M967 453 965 455 963 456 M1074 528 1079 526 1084 522 M1205 689 1215 691 1225 690 M940 565 941 563 941 560 M987 528 984 527 981 527 M1029 816 1029 808 1026 802 M1042 479 1041 485 1036 489 M1327 476 1331 469 1337 462 M931 698 936 707 941 716 M973 559 972 561 971 563 M1350 753 1350 742 1355 733 M823 491 819 488 814 485 M1003 803 1005 791 1005 779 M1102 499 1108 497 1113 499 M986 446 986 450 984 453 M835 530 835 533 835 536 M1119 570 1116 577 1112 584 M1335 516 1334 524 1333 532 M978 543 975 540 971 539 M995 552 993 553 991 555 M1032 590 1034 578 1037 567 M1119 455 1111 458 1106 463 M944 550 941 547 939 544 M877 805 887 810 895 816 M698 426 690 420 682 416 M946 560 947 563 946 566 M981 577 983 578 986 579 M1292 684 1285 687 1278 689 M924 550 927 552 931 551 M1060 527 1061 519 1060 512 M816 436 821 441 828 443 M901 534 900 536 900 538 M941 519 939 518 936 516 M1322 661 1328 655 1332 646 M925 545 923 543 922 540 M747 630 747 631 749 638 M761 473 753 467 748 469 M930 520 932 520 934 520 M1227 605 1230 614 1230 623 M1222 394 1228 384 1236 375 M878 692 872 696 865 700 M865 700 867 709 867 718 M1129 429 1126 437 1129 445 M987 528 987 531 987 533 M1026 521 1023 523 1019 524 M1041 443 1047 441 1053 441 M944 622 939 625 935 630 M848 539 846 543 843 544 M791 453 788 457 783 460 M1191 727 1197 735 1202 737 M852 717 860 719 867 718 M909 610 907 605 903 601 M1337 462 1342 452 1351 444 M1007 452 1008 454 1010 456 M1165 522 1163 516 1164 511 M1303 516 1308 521 1310 528 M786 389 789 398 795 406 M1165 522 1171 521 1177 520 M951 485 950 488 948 491 M795 685 803 684 810 682 M707 395 700 392 694 391 M846 506 843 509 839 511 M977 662 973 654 968 648 M1268 727 1262 732 1261 733 M995 465 997 468 1001 469 M736 648 743 644 749 638 M1256 382 1246 380 1236 375 M865 737 866 727 867 718 M984 518 984 516 984 513 M986 558 986 555 985 553 M987 528 989 529 992 531 M909 610 911 613 913 616 M1091 415 1090 409 1090 409 M850 770 842 771 834 768 M848 539 850 541 852 544 M951 568 951 564 952 561 M1297 472 1291 479 1283 483 M1357 402 1367 398 1372 389 M822 522 826 524 830 525 M1008 563 1006 564 1004 565 M1113 441 1120 445 1129 445 M1361 430 1367 423 1372 416 M1335 516 1336 505 1341 494 M1026 521 1029 519 1031 516 M1113 418 1105 425 1096 430 M980 584 979 587 979 591 M1035 532 1031 532 1027 530 M1216 547 1207 550 1199 555 M1282 452 1288 463 1297 472 M1147 517 1147 523 1148 529 M1089 533 1095 534 1101 534 M1019 567 1019 570 1018 573 M1258 661 1250 656 1241 652 M910 544 913 545 917 546 M655 456 662 454 669 454 M957 668 948 665 939 666 M1121 401 1116 408 1113 418 M1003 559 1001 558 1000 556 M1134 486 1128 485 1123 484 M1103 412 1107 416 1113 418 M1069 620 1062 615 1058 608 M1058 805 1069 802 1080 804 M1365 583 1360 577 1353 574 M834 768 826 775 824 777 M702 477 696 476 690 473 M1347 296 1355 295 1364 293 M1058 805 1051 799 1048 789 M965 477 966 475 966 472 M1283 425 1272 423 1262 423 1252 426 M1006 531 1008 530 1009 527 M1086 591 1079 589 1072 585 M1191 746 1189 759 1187 772 M984 518 982 520 980 521 M964 568 960 569 957 571 M868 520 865 523 861 523 M830 512 831 515 832 519 M1344 786 1346 777 1345 767 M853 682 865 680 876 676 M1264 596 1266 585 1260 576 M1144 438 1140 430 1137 421 M970 489 972 489 975 488 M1175 731 1183 728 1191 727 M667 415 660 406 654 401 M875 614 871 604 865 596 M1146 540 1147 534 1148 529 M1051 720 1053 731 1052 741 M1367 479 1369 488 1369 498 1369 507 M772 495 779 489 784 482 M1026 493 1023 490 1020 488 M1318 512 1311 503 1305 494 M1203 445 1194 449 1187 454 M830 743 824 742 M1211 521 1202 520 1194 517 M986 446 988 449 990 451 M1107 757 1100 751 1097 741 M1112 474 1117 474 1123 474 M886 731 883 723 882 714 M1035 499 1040 499 1044 499 M1239 578 1244 586 1246 594 M1129 429 1136 434 1144 438 M1096 472 1091 476 1085 480 M799 484 796 481 792 478 M939 770 932 773 925 775 M1009 462 1011 461 1014 459 M986 558 990 560 993 561 M786 389 780 393 775 400 M1002 543 1000 541 997 539 M1197 570 1198 563 1199 555 M634 461 636 462 M1230 467 1229 478 1227 488 M836 506 838 508 839 511 M628 429 629 434 M1064 682 1072 688 1078 696 M971 552 970 548 967 546 M937 530 933 533 930 536 M1369 507 1361 507 1352 508 M871 751 882 747 894 749 M807 482 811 479 815 477 M1218 453 1221 444 1226 436 1233 430 M1005 442 1004 444 1002 445 M1123 474 1122 479 1123 484 M956 473 958 474 961 474 M1225 791 1231 797 1232 805 M1021 680 1021 669 1028 661 M1035 499 1036 502 1037 504 M907 534 907 531 M1030 736 1024 741 1021 750 M976 527 975 525 974 522 M1009 570 1007 572 1005 574 M1361 781 1364 789 1371 792 M1277 668 1278 678 1278 689 M944 835 932 836 921 836 M933 756 923 758 914 765 M1110 518 1102 515 1095 521 M1318 512 1314 520 1310 528 M975 482 978 481 981 479 M1279 707 1285 711 1291 717 M994 510 991 509 988 510 M953 500 955 502 955 505 M998 561 999 558 1000 556 M731 556 743 555 755 556 M656 486 654 493 650 498 M1019 580 1020 576 1018 573 M1086 622 1079 615 1075 605 M839 813 847 813 855 816 M1210 622 1206 615 1201 609" fill="none" stroke="#f1ebf4" stroke-width="0.9" stroke-linejoin="round"/>
<path d="M702 452 706 430 713 408 M702 452 670 455 633 458 M702 452 675 468 646 482 M702 452 680 478 655 500 M702 452 695 470 688 490 M842 515 825 498 805 482 797 462 789 444 775 425 765 400 745 372 M842 515 832 480 813 435 815 405 790 375 775 365 M842 515 815 516 787 517 770 517 740 512 M805 482 795 500 787 517 775 530 767 543 740 560 715 572 M789 444 813 435 840 440 M842 515 862 522 881 528 M842 515 830 530 818 541 M842 515 855 500 870 490 M913 618 925 580 935 545 M913 618 890 610 875 605 855 600 835 600 M835 600 815 630 800 650 770 648 745 645 M913 618 885 640 855 650 830 665 800 685 M800 685 815 720 830 760 840 785 M913 618 905 665 870 680 868 720 840 785 M913 618 950 660 985 700 1010 740 1020 790 1030 830 M913 618 955 605 1010 615 1060 630 M1010 740 1035 693 M840 785 880 800 930 810 980 820 1030 830 M1015 520 1040 540 1060 560 1100 600 1130 640 M1080 410 1080 460 1070 520 1060 560 M1160 445 1120 430 1080 410 M1160 445 1140 520 1120 600 1130 640 M1015 520 1050 470 1080 460 1160 445 M960 480 990 500 1015 520 M935 545 970 530 1015 520 M1160 445 1220 470 1300 480 M1300 480 1270 420 1250 370 M1300 480 1295 510 1290 530 M1130 640 1180 650 1230 660 1280 650 1330 640 M1065 735 1110 715 1160 710 1200 705 M1110 715 1105 760 1105 795 M1110 715 1175 760 1180 810" fill="none" stroke="#a98bc4" stroke-width="4.2" stroke-linejoin="round" stroke-linecap="round"/>
<path d="M702 452 706 430 713 408 M702 452 670 455 633 458 M702 452 675 468 646 482 M702 452 680 478 655 500 M702 452 695 470 688 490 M842 515 825 498 805 482 797 462 789 444 775 425 765 400 745 372 M842 515 832 480 813 435 815 405 790 375 775 365 M842 515 815 516 787 517 770 517 740 512 M805 482 795 500 787 517 775 530 767 543 740 560 715 572 M789 444 813 435 840 440 M842 515 862 522 881 528 M842 515 830 530 818 541 M842 515 855 500 870 490 M913 618 925 580 935 545 M913 618 890 610 875 605 855 600 835 600 M835 600 815 630 800 650 770 648 745 645 M913 618 885 640 855 650 830 665 800 685 M800 685 815 720 830 760 840 785 M913 618 905 665 870 680 868 720 840 785 M913 618 950 660 985 700 1010 740 1020 790 1030 830 M913 618 955 605 1010 615 1060 630 M1010 740 1035 693 M840 785 880 800 930 810 980 820 1030 830 M1015 520 1040 540 1060 560 1100 600 1130 640 M1080 410 1080 460 1070 520 1060 560 M1160 445 1120 430 1080 410 M1160 445 1140 520 1120 600 1130 640 M1015 520 1050 470 1080 460 1160 445 M960 480 990 500 1015 520 M935 545 970 530 1015 520 M1160 445 1220 470 1300 480 M1300 480 1270 420 1250 370 M1300 480 1295 510 1290 530 M1130 640 1180 650 1230 660 1280 650 1330 640 M1065 735 1110 715 1160 710 1200 705 M1110 715 1105 760 1105 795 M1110 715 1175 760 1180 810" fill="none" stroke="#c9b0e0" stroke-width="2.2" stroke-linejoin="round" stroke-linecap="round"/>
<path d="M1274 529 1263 532 1253 531 M1111 482 1104 488 1101 496 M935 836 942 826 952 820 M669 403 660 398 658 394 M732 661 742 655 754 651 M953 512 948 511 942 511 M1274 478 1283 475 1292 474 1301 471 M1144 792 1141 780 1138 769 M1194 541 1184 543 1175 541 M880 576 884 581 891 589 M1068 552 1067 542 1066 531 1062 521 M1104 407 1096 413 1086 414 M1366 684 1358 689 1350 695 1341 697 M850 786 855 798 866 805 M785 453 773 447 768 446 M1017 486 1017 490 1019 494 M1087 571 1087 561 1088 551 M1174 608 1187 603 1195 592 M979 583 977 578 976 573 M824 551 824 547 822 537 M953 512 949 516 948 522 M980 464 981 459 982 454 M1369 724 1370 734 1369 745 1368 755 M1180 478 1171 488 1168 502 M1119 528 1120 519 1116 511 M944 547 940 547 935 547 M1009 530 1006 535 1001 536 M1335 533 1339 543 1343 553 M1274 478 1274 489 1277 498 1281 507 1287 515 M917 640 921 636 925 632 M847 670 859 675 868 684 M1275 652 1271 644 1266 636 1258 632 M623 494 626 504 629 508 M965 566 960 567 956 568 M918 616 916 612 913 609 M1179 518 1176 530 1175 541 M891 589 899 592 906 599 M837 442 847 449 850 450 M864 464 864 464 M962 504 961 499 961 495 M1341 697 1330 704 1317 707 M759 463 770 469 782 471 M977 497 980 495 982 491 M887 706 885 718 879 728 M843 544 843 544 848 539 M983 444 988 442 993 440 M975 448 971 447 968 446 M1027 399 1033 405 1040 411 M1002 475 1004 471 1003 467 M1122 493 1119 502 1116 511 M1011 470 1014 472 1018 472 M1120 454 1123 464 1126 474 M966 455 970 455 975 457 M1049 454 1037 452 1025 451 1014 452 M1144 642 1152 652 1161 660 M1357 776 1364 766 1368 755 M1122 493 1131 497 1140 502 M926 736 936 731 946 730 957 730 968 730 M1260 318 1249 317 1238 321 1229 321 M893 639 882 646 868 648 M923 669 922 678 919 687 913 695 M1213 571 1201 570 1188 571 M813 627 816 633 M839 816 843 828 853 836 M1011 470 1006 472 1002 475 M1366 684 1367 673 1369 662 1371 651 M1067 502 1058 505 1051 510 M665 463 656 457 650 449 M1075 430 1075 439 1076 448 1077 457 M1184 833 1172 831 1166 828 M1259 511 1253 520 1253 531 M1366 436 1363 445 1363 454 1364 464 1363 473 M1258 632 1247 628 1235 627 1224 622 M1075 430 1084 434 1093 438 1102 442 M856 728 867 724 879 728 M1120 729 1110 728 1101 727 1091 726 M1141 429 1138 438 1138 448 M1067 502 1077 498 1085 490 M1312 676 1302 680 1293 680 1283 678 M966 522 969 519 972 516 M948 537 943 538 939 539 M972 660 975 669 980 677 981 687 M775 526 775 535 777 546 M1314 525 1323 521 1330 515 M988 574 989 579 989 583 M1356 613 1344 609 1332 604 M979 583 984 580 988 574 M952 820 962 824 972 827 982 831 M939 553 937 550 935 547 M989 583 986 586 984 589 M1292 758 1281 754 1277 754 M1073 395 1078 405 1086 414 M723 571 726 561 728 551 M874 783 862 786 850 786 M889 483 884 484 872 484 M1154 594 1146 596 1139 598 M1311 357 1321 359 1332 358 1342 355 M953 475 953 474 955 471 M1097 512 1107 511 1116 511 M1094 661 1085 670 1076 680 M1104 407 1112 418 1121 428 M669 403 679 406 688 411 M955 469 955 471 M1325 566 1322 556 1320 545 M1102 442 1097 433 1091 423 1086 414 M807 489 812 485 814 479 M918 539 918 545 920 552 M773 501 782 493 793 490 M1014 452 1011 448 1009 443 M997 706 990 696 981 687 M942 530 945 526 948 522 M1245 473 1246 484 1250 493 1255 502 1259 511 M746 630 750 639 754 651 M1143 474 1155 475 1162 484 M977 497 981 497 985 499 M769 378 763 385 757 393 751 399 M995 558 999 557 1003 555 M876 827 885 825 894 823 902 817 M1007 461 1012 461 1016 463 M635 462 642 473 653 481 M844 634 853 638 860 643 868 648 M834 768 830 776 826 784 823 793 M933 576 931 589 932 601 M1120 729 1120 717 1117 705 M918 539 922 538 927 538 M962 792 972 787 983 786 993 782 1004 780 M1184 833 1197 836 1209 837 M1197 625 1211 623 1224 622 M1017 486 1019 479 1018 472 M1020 502 1020 498 1019 494 M1016 567 1011 565 1006 563 M1059 357 1061 355 M1073 342 1074 341 M1227 650 1237 660 1235 674 M929 712 918 716 907 721 M1032 498 1030 494 1027 489 M1097 512 1100 519 1104 525 M932 601 925 598 918 598 M1300 437 1299 426 1301 416 1311 409 M846 504 840 502 834 505 M1095 696 1095 706 1094 716 1091 726 M1120 573 1119 563 1119 552 M991 528 995 529 999 528 M712 423 703 423 695 418 688 411 M839 816 848 812 856 807 866 805 M723 571 723 575 M1310 616 1320 624 1331 630 M933 533 936 536 939 539 M796 385 790 394 785 404 M1022 529 1026 525 1030 521 M851 530 853 525 856 521 M932 770 942 767 954 764 964 760 M930 556 935 555 939 553 M1331 784 1338 780 1347 776 1357 776 M1258 825 1247 830 1236 835 M1200 413 1206 423 1213 431 1222 436 1234 437 1244 441 M1022 529 1020 536 1016 541 M1282 398 1282 387 1284 376 1283 366 1278 356 M962 703 960 713 963 722 968 730 M1343 304 1332 298 1322 293 1311 290 M835 521 831 524 826 526 M1151 741 1161 733 1169 724 M970 490 968 487 964 485 M1059 470 1069 465 1077 457 M975 457 978 455 982 454 M1332 604 1330 594 1330 584 1327 575 1325 566 M1174 608 1163 602 1154 594 M963 472 965 468 967 463 M1250 801 1250 801 M700 391 694 401 688 411 M872 484 880 494 885 500 M1046 730 1036 729 1027 730 1018 732 1008 733 M1307 316 1316 318 1324 321 1333 325 1341 328 M1357 572 1366 566 1372 556 M1237 730 1237 719 1236 709 1235 698 M1168 502 1172 511 1179 518 M700 391 693 383 684 380 682 380 M957 576 957 572 956 568 M1016 567 1026 565 1036 563 1045 558 M1313 649 1323 640 1331 630 M1105 542 1097 548 1088 551 M1158 533 1151 540 1146 548 M1084 781 1072 774 1059 778 M1095 696 1107 699 1117 705 M991 528 989 523 989 517 M942 530 946 531 951 530 M907 531 907 533 M958 536 955 533 951 530 M808 441 810 448 811 456 M940 620 934 621 927 622 M1144 642 1134 648 1125 657 M923 669 934 662 944 654 M1347 650 1339 640 1331 630 M1366 436 1355 440 1344 443 1332 445 M1365 328 1369 319 1371 310 1371 300 M1216 462 1225 454 1235 448 1244 441 M1120 573 1130 578 1141 583 M800 533 788 539 777 546 M811 609 818 608 827 601 M939 539 938 543 935 547 M1216 462 1216 472 1214 481 1211 490 1205 497 1201 506 M964 544 968 544 972 546 M964 544 958 544 953 544 M958 536 958 530 958 524 M989 517 986 516 982 515 M958 536 955 540 953 544 M692 462 693 469 694 475 M927 622 925 627 925 632 M1329 475 1319 474 1310 472 1301 471 M932 601 929 606 926 610 M1108 759 1112 771 1117 783 M1194 541 1191 550 1188 560 1188 571 M820 729 827 718 828 707 827 695 825 684 M969 507 971 512 972 516 M793 490 794 484 795 478 M1231 498 1228 488 1221 481 1220 471 1216 462 M1011 477 1015 475 1018 472 M1146 548 1139 543 1132 537 M769 378 757 380 745 380 M963 590 965 586 966 582 M1147 711 1158 718 1169 724 M1069 639 1066 627 1060 616 M647 428 636 429 625 431 624 432 M888 569 897 566 M897 566 903 554 910 543 M1046 534 1044 546 1045 558 M1069 717 1064 709 1058 702 1051 695 M1151 741 1161 744 1169 751 1175 759 M947 680 958 685 970 687 981 687 M1275 652 1284 647 1294 646 1303 645 1313 649 M855 753 855 741 856 728 M991 492 991 488 990 485 M1313 649 1314 658 1313 667 1312 676 M1146 548 1147 560 1146 571 1141 583 M991 475 991 480 990 485 M826 457 819 457 811 456 M893 639 899 636 903 631 M1137 520 1145 519 1153 515 M1305 729 1297 721 1289 713 1280 706 M973 473 977 472 981 472 M917 628 922 629 925 632 M1032 781 1041 783 1050 780 1059 778 M658 500 660 499 660 499 M1039 520 1038 512 1042 506 M1220 815 1228 825 1236 835 M1168 502 1160 508 1153 515 M988 574 990 571 993 569 M1020 502 1026 500 1032 498 M623 494 620 484 618 474 618 474 M823 487 827 497 834 505 M1085 490 1093 491 1101 496 M991 492 986 492 982 491 M1033 416 1040 411 M1029 835 1038 834 1048 833 1056 829 M1003 810 1014 809 1026 808 1037 807 M927 546 923 542 918 539 M769 378 762 370 756 361 M1033 507 1031 502 1032 498 M981 529 985 533 990 536 M793 642 801 651 811 659 M1175 759 1185 763 1196 766 1207 768 M820 729 814 722 808 716 801 710 794 707 M1188 571 1180 576 1171 581 M856 602 853 596 M897 566 905 561 912 556 920 552 M970 490 971 486 972 483 M1234 527 1224 527 1215 523 M1062 521 1057 515 1051 510 M1077 381 1080 375 1078 365 1080 355 1080 353 M1082 343 1083 340 M1105 542 1113 546 1119 552 M793 677 805 671 811 659 M756 489 764 496 773 501 M1002 438 997 438 993 440 M1112 636 1118 628 1120 618 1124 609 M927 529 923 526 923 524 M1143 474 1135 474 1126 474 M892 679 880 683 868 684 M1027 489 1032 479 1041 472 M948 568 944 566 940 565 M1293 533 1289 524 1287 515 M793 642 787 631 M944 547 941 549 939 553 M973 473 968 473 963 472 M963 590 969 591 976 590 M1365 328 1353 327 1341 328 M1046 534 1038 534 1030 533 M1300 437 1296 449 1298 460 1301 471 M991 475 989 469 987 463 M1267 726 1257 726 1250 727 M1246 727 1237 730 M857 540 853 538 848 539 M649 502 642 496 632 496 623 494 M825 473 820 476 814 479 M881 617 874 611 864 608 856 602 M1300 437 1311 439 1321 443 1332 445 M1185 381 1174 385 1166 389 M1072 396 1066 403 1060 412 M1192 787 1195 800 1196 812 M1213 684 1224 680 1235 674 M962 634 955 639 949 646 944 654 M834 768 826 763 M1168 559 1173 570 1171 581 M1147 711 1137 708 1127 708 1117 705 M1359 542 1352 548 1343 553 M839 816 832 809 827 801 823 793 M1222 597 1224 610 1224 622 M859 508 855 509 851 511 M1171 581 1162 587 1154 594 M962 703 974 698 981 687 M1001 571 1005 567 1006 563 M1200 413 1190 412 1181 410 1171 413 1161 414 M996 463 992 463 987 463 M1112 636 1102 629 1090 628 M972 546 976 546 980 543 M1231 498 1232 507 1232 517 1234 527 M793 642 804 635 816 633 M997 515 998 522 999 528 M902 817 892 816 883 813 874 810 866 805 M669 440 675 430 682 420 688 411 M834 768 845 761 855 753 M935 836 926 832 918 827 910 822 902 817 M1014 452 1015 457 1016 463 M962 703 958 695 953 687 947 680 M944 547 948 545 953 544 M1007 635 1003 647 1004 659 M991 593 988 591 984 589 M665 463 661 473 653 481 M834 505 833 511 828 516 M1332 604 1320 608 1310 616 M1177 637 1174 647 1169 654 1161 660 M1002 545 1006 545 1010 545 M1027 489 1023 491 1019 494 M1367 371 1363 360 1362 350 1363 339 1365 328 M1007 635 1014 624 1028 621 M980 464 984 464 987 463 M948 560 948 564 948 568 M977 497 977 501 979 506 M962 703 950 702 940 708 929 712 M1356 613 1360 601 1371 594 M647 428 646 439 650 449 M1300 437 1291 433 1282 429 1272 428 M1120 454 1111 448 1102 442 M1150 684 1156 672 1161 660 M995 753 1004 744 1008 733 M1010 436 1016 428 M1033 414 1040 411 M1201 506 1190 513 1179 518 M985 499 989 499 993 500 M843 473 842 484 836 494 834 505 M846 504 849 507 851 511 M1120 729 1118 740 1115 750 1108 759 M999 507 996 503 993 500 M948 568 952 567 956 568 M797 454 797 461 793 467 M1311 357 1312 368 1316 377 1325 384 M897 744 903 733 907 721 M995 558 997 554 996 550 M1260 318 1259 305 1258 292 M1006 429 1007 430 1010 436 M1117 783 1126 774 1138 769 M966 522 968 527 972 531 M1062 752 1061 765 1059 778 M997 515 993 516 989 517 M756 538 747 534 743 533 M929 712 920 704 913 695 M864 464 854 469 843 473 M964 514 958 514 953 512 M1045 371 1051 374 1057 378 M1004 452 1004 457 1007 461 M947 680 946 667 944 654 M797 454 805 454 811 456 M1120 454 1129 451 1138 448 M874 783 870 794 866 805 M991 475 994 477 997 480 M980 483 980 477 981 472 M1112 636 1119 646 1125 657 M1002 438 1001 444 996 449 M1051 695 1043 688 1037 681 1033 673 1034 662 M1123 682 1117 676 1109 671 1103 664 1094 661 M1137 520 1129 526 1119 528 M1046 534 1055 530 1062 521 M1177 637 1185 647 1193 657 M918 598 915 603 913 609 M926 736 917 741 907 743 897 744 M1120 454 1110 461 1101 467 M995 753 986 760 976 762 964 760 M1343 304 1352 302 1362 301 1371 300 M1332 445 1329 435 1323 426 1317 418 1311 409 M1180 677 1169 670 1161 660 M1274 478 1276 468 1270 458 1271 448 1271 438 1272 428 M785 453 791 455 797 454 M1030 533 1026 531 1022 529 M728 551 737 543 737 541 M1009 530 1014 534 1016 541 M1139 616 1138 607 1139 598 M932 770 920 775 908 773 M988 509 991 505 993 500 M962 504 957 501 952 501 M962 792 971 798 981 804 992 808 1003 810 M954 486 957 483 959 479 M1001 492 997 496 993 500 M1157 576 1164 579 1171 581 M1119 528 1112 528 1104 525 M1039 520 1034 520 1030 521 M814 391 814 392 814 403 M985 564 981 563 978 559 M820 729 832 725 844 724 856 728 M1213 571 1222 564 1232 558 1240 549 M1325 751 1314 752 1303 754 1292 758 M927 546 923 549 920 552 M759 463 748 469 M1244 441 1253 435 1263 433 1272 428 M1091 726 1088 737 1087 749 M1046 730 1034 722 1028 711 M1015 516 1021 516 1027 513 M1135 400 1125 401 1114 403 1104 407 M1057 664 1045 664 1034 662 M1046 730 1039 737 1033 745 1026 753 M1132 537 1126 533 1119 528 M856 521 853 516 851 511 M891 546 896 544 903 541 M995 558 994 564 993 569 M1108 759 1120 756 1130 759 1138 769 M1274 529 1278 521 1287 515 M983 444 986 446 988 450 M1062 802 1060 811 1059 820 1056 829 M1310 502 1310 491 1305 481 1301 471 M1235 698 1235 686 1235 674 M1260 318 1251 311 1242 303 1232 298 M1105 542 1106 534 1104 525 M1175 759 1169 767 1169 776 1167 786 1170 795 M966 535 965 540 964 544 M1004 499 998 499 993 500 M1305 729 1310 718 1317 707 M1192 787 1188 777 1184 766 1175 759 M1069 639 1080 634 1090 628 M1298 596 1289 604 1288 615 1288 626 M1004 780 1003 790 1002 800 1003 810 M1132 537 1126 545 1119 552 M1216 462 1226 466 1236 470 1245 473 M1037 807 1049 802 1062 802 M729 510 732 502 732 497 M1180 677 1187 667 1193 657 M800 533 812 532 822 537 M1137 520 1137 529 1132 537 M796 385 792 375 793 365 796 361 M1025 685 1025 698 1028 711 M962 792 964 781 964 771 964 760 M1079 830 1069 829 1056 829 M1157 576 1149 579 1141 583 M1004 452 1000 458 996 463 M1278 576 1272 586 1269 597 1265 607 M1087 571 1088 583 1087 596 M1310 502 1298 508 1287 515 M954 486 950 491 946 496 M1011 497 1015 496 1019 494 M991 528 986 529 981 529 M887 706 896 702 904 698 913 695 M1164 818 1164 816 1168 806 1170 795 M1158 533 1166 538 1175 541 M1312 676 1310 687 1312 698 1317 707 M966 455 966 450 967 447 M1219 789 1209 795 1203 804 1196 812 M1278 576 1283 568 1290 561 1293 552 M980 483 985 483 990 485 M881 617 887 620 893 620 M798 426 803 433 808 441 M782 471 787 467 793 467 M756 538 765 531 772 526 M1033 507 1037 506 1042 506 M837 535 843 537 848 539 M965 566 966 570 966 574 M957 461 960 460 967 463 M1347 408 1353 399 1357 389 1362 380 1367 371 M1037 807 1035 816 1030 825 1029 835 M847 670 855 664 862 657 868 648 M1015 516 1016 520 1015 524 M793 677 781 679 780 679 M1069 717 1062 728 1061 740 1062 752 M1292 758 1298 768 1303 774 M858 590 856 602 M1120 729 1125 739 1131 748 1132 759 1138 769 M962 634 973 628 984 621 M793 677 794 687 793 695 M980 483 981 487 982 491 M1048 429 1044 420 1040 411 M997 480 1000 478 1002 475 M1157 576 1152 567 1147 558 1146 548 M1282 398 1293 398 1303 400 1311 409 M1325 384 1319 391 1313 399 1311 409 M1347 408 1339 401 1332 393 1325 384 M994 542 993 538 990 536 M844 634 835 633 825 631 816 633 M933 576 936 570 940 565 M996 449 995 444 993 440 M920 795 914 784 908 773 M701 483 699 479 694 475 M837 442 832 431 824 421 M1004 452 1008 451 1014 452 M1200 413 1202 423 1199 432 1197 441 M1174 608 1167 612 1160 618 M1274 478 1265 476 1255 474 1245 473 M983 444 979 447 975 448 M973 473 977 478 980 483 M728 551 739 558 743 570 M991 593 987 601 985 611 984 621 M930 520 931 521 933 525 M1022 529 1018 528 1015 524 M835 521 832 519 828 516 M1085 490 1078 481 1069 475 1059 470 M745 570 743 570 M820 512 824 514 828 516 M1051 695 1059 689 1068 686 1076 680 M910 543 914 541 918 539 M933 533 930 531 927 529 M1200 413 1200 402 1205 392 1213 384 M1191 736 1181 728 1169 724 M1005 483 1008 480 1011 477 M1025 685 1028 673 1034 662 M962 504 966 504 969 507 M1036 595 1048 591 1061 589 M1325 751 1318 759 1310 767 1307 775 M1123 682 1136 688 1150 684 M1015 585 1019 583 1021 580 M807 489 800 488 793 490 M1101 467 1088 463 1077 457 M1187 704 1183 719 1169 724 M1216 462 1211 453 1203 448 1197 441 M1220 815 1215 826 1209 837 M859 508 865 496 872 484 M1211 710 1212 697 1213 684 M669 440 665 451 665 463 M1278 576 1284 583 1291 590 1298 596 M1045 639 1037 650 1034 662 M1227 650 1227 641 1225 632 1224 622 M1051 510 1047 508 1042 506 M1293 552 1292 543 1293 533 M1046 730 1046 718 1047 706 1051 695 M966 455 961 455 960 454 M1140 502 1146 509 1153 515 M1036 595 1029 595 1022 593 M933 533 933 529 933 525 M1018 472 1017 468 1016 463 M952 501 949 498 946 496 M1307 316 1311 303 1311 290 M904 622 902 626 903 631 M1275 652 1265 661 1259 672 M1045 558 1034 559 1023 557 1012 554 M1026 753 1038 752 1050 755 1062 752 M1265 607 1273 612 1281 619 1288 626 M988 450 994 455 996 463 M1020 502 1025 507 1027 513 M966 582 967 578 966 574 M1091 726 1081 721 1069 717 M1062 521 1074 523 1087 525 M926 736 927 724 929 712 M1135 400 1137 399 M1245 473 1246 462 1244 452 1244 441 M686 492 689 487 694 475 M1033 507 1030 510 1027 513 M857 540 854 535 851 530 M1310 616 1300 622 1288 626 M814 589 817 592 M1260 318 1256 326 1253 335 1253 344 M1232 298 1228 309 1227 318 M979 583 977 586 976 590 M933 517 935 517 940 519 M1241 374 1245 364 1248 354 1253 344 M1002 545 999 547 996 550 M669 440 680 447 694 448 M1342 355 1342 342 1341 328 M1267 726 1258 720 1251 711 1241 707 1235 698 M910 543 906 543 903 541 M970 490 965 492 961 495 M1061 589 1057 578 1053 567 1045 558 M707 467 702 471 694 475 M1048 429 1038 430 1028 430 1019 431 1010 436 M864 464 867 474 872 484 M879 728 889 729 898 726 907 721 M745 380 738 381 M769 378 777 385 782 394 785 404 M1348 507 1355 514 1365 517 M1025 685 1033 688 1042 691 1051 695 M1015 516 1010 518 1005 519 M1069 639 1063 646 1060 655 1057 664 M987 552 984 547 980 543 M948 537 949 534 951 530 M1060 412 1067 421 1075 430 M844 634 851 624 856 614 856 602 M973 564 976 562 978 559 M1293 533 1303 527 1314 525 M1111 482 1119 478 1126 474 M1005 519 1010 514 1013 508 M1191 736 1186 744 1181 752 1175 759 M907 533 905 537 903 541 M1001 571 1000 575 1001 580 M1313 649 1305 641 1296 635 1288 626 M1195 592 1185 583 1171 581 M981 472 984 467 987 463 M820 729 820 733 M1280 706 1272 703 1262 704 1253 702 1244 700 1235 698 M1177 637 1186 630 1197 625 M957 576 962 575 966 574 M948 537 950 541 953 544 M1265 607 1259 600 1252 594 1247 586 1239 581 M1259 672 1271 676 1283 678 M964 760 965 750 968 740 968 730 M1158 533 1157 524 1153 515 M1192 787 1197 776 1207 768 M1314 525 1317 535 1320 545 M979 583 981 587 984 589 M1147 711 1146 702 1146 693 1150 684 M980 483 976 483 972 483 M1260 318 1272 315 1282 308 M996 463 999 466 1003 467 M1222 597 1232 591 1239 581 M920 795 929 799 937 805 944 813 952 820 M1003 810 996 818 988 823 982 831 M1265 607 1262 620 1258 632 M1026 753 1022 745 1016 738 1008 733 M844 634 842 625 839 616 834 608 830 602 M1011 470 1013 466 1016 463 M1177 637 1168 628 1160 618 M1087 596 1089 606 1090 617 1090 628 M891 589 894 599 899 609 M1307 316 1315 310 1323 304 1333 304 1343 304 M965 566 962 562 959 557 M1325 566 1334 558 1343 553 M1184 833 1187 821 1196 812 M975 457 974 452 975 448 M964 544 959 546 956 551 M1240 549 1241 560 1241 570 1239 581 M1101 467 1106 474 1111 482 M1278 356 1270 351 1262 347 1253 344 M918 616 923 619 927 622 M1049 454 1048 441 1048 429 M1114 793 1117 783 M745 380 745 391 750 399 M800 533 807 527 814 519 820 512 M1311 357 1300 360 1289 357 1278 356 M826 526 828 521 828 516 M876 827 864 831 853 836 M1305 729 1313 736 1319 743 1325 751 M999 507 1001 503 1004 499 M1140 502 1143 493 1143 483 1143 474 M1241 374 1232 378 1222 380 1213 384 M825 684 819 676 815 667 811 659 M1332 445 1330 455 1327 465 1329 475 M822 537 823 531 826 526 M970 490 974 493 977 497 M1046 730 1058 725 1069 717 M892 679 901 673 911 668 923 669 M994 542 995 546 996 550 M987 552 982 552 978 551 M941 503 944 499 946 496 M926 736 922 748 924 760 932 770 M874 783 884 774 896 774 908 773 M1004 452 1000 450 996 449 M835 521 840 521 845 518 M1012 554 1008 555 1003 555 M994 542 998 539 1001 536 M926 736 914 731 907 721 M972 660 982 660 993 658 1004 659 M1165 442 1176 441 1186 442 1197 441 M1036 595 1042 604 1050 612 1060 616 M964 514 966 510 969 507 M1347 408 1355 416 1361 425 1366 436 M963 472 962 476 959 479 M1144 792 1156 795 1170 795 M756 489 749 486 M1368 755 1363 746 1358 738 1352 730 1344 723 M981 529 979 526 977 522 M893 639 894 629 893 620 M1141 583 1139 590 1139 598 M845 518 849 516 851 511 M1006 563 1005 559 1003 555 M944 654 938 647 931 640 925 632 M1267 726 1273 716 1280 706 M1216 546 1205 543 1194 541 M948 522 944 521 940 519 M1325 751 1331 742 1340 733 1344 723 M1278 356 1284 347 1287 337 1285 327 1284 318 1282 308 M930 556 936 559 940 565 M1310 616 1302 607 1298 596 M1007 461 1006 464 1003 467 M968 730 971 719 978 712 987 709 997 706 M971 556 974 554 978 551 M1060 412 1050 410 1040 411 M1001 492 1003 495 1004 499 M955 471 958 475 959 479 M899 609 903 604 906 599 M1220 815 1208 813 1196 812 M997 706 1001 715 1004 724 1008 733 M940 620 934 613 926 610 M997 515 1001 517 1005 519 M1180 478 1171 480 1162 484 M793 506 787 518 776 523 M958 524 955 527 951 530 M915 529 918 526 M1084 781 1085 770 1085 760 1087 749 M1357 572 1361 585 1371 594 M834 768 844 776 850 786 M956 551 957 554 959 557 M881 617 873 624 864 629 855 633 844 634 M1026 753 1031 762 1032 771 1032 781 M1032 781 1040 786 1047 791 1055 797 1062 802 M807 489 811 502 820 512 M823 487 824 480 825 473 M948 522 950 526 951 530 M899 609 897 615 893 620 M918 616 911 619 904 622 M972 546 975 549 978 551 M964 485 963 481 959 479 M917 640 910 637 903 631 M954 486 957 491 961 495 M837 535 836 528 835 521 M1227 650 1216 653 1205 656 1193 657 M623 494 629 484 633 474 635 462 M1258 825 1249 814 1250 801 M1004 452 1007 449 1009 443 M966 522 962 522 958 524 M795 478 794 472 793 467 M1216 546 1215 534 1215 523 M1009 530 1011 526 1015 524 M1201 506 1209 513 1215 523 M964 514 966 517 966 522 M1240 549 1250 543 1253 531 M892 679 893 688 891 697 887 706 M800 533 795 544 797 551 M966 535 962 536 958 536 M933 525 930 527 927 529 M1359 542 1366 530 1365 517 M942 511 942 515 940 519 M1007 635 999 630 990 627 984 621 M1310 502 1312 513 1314 525 M1097 512 1092 519 1087 525 M995 753 997 763 1001 772 1004 780 M623 494 614 487 605 484 M942 511 939 511 937 511 M927 546 926 542 927 538 M897 744 901 754 904 764 908 773 M1293 552 1302 547 1311 546 1320 545 M1097 512 1088 504 1078 503 1067 502 M1011 470 1011 474 1011 477 M980 464 978 460 975 457 M966 535 967 528 966 522 M1049 454 1046 463 1041 472 M1168 502 1165 493 1162 484 M1192 787 1180 788 1170 795 M976 590 972 585 966 582 M942 511 942 507 941 503 M1234 527 1244 526 1253 531 M915 529 911 531 907 533 M923 669 925 658 923 649 917 640 M1068 552 1066 562 1062 570 1061 580 1061 589 M790 551 788 550 777 546 M1002 432 1002 438 M824 421 814 429 808 441 M1325 566 1315 561 1304 558 1293 552 M745 380 752 372 756 361 M851 701 860 693 868 684 M1075 430 1081 422 1086 414 M941 503 939 505 M964 514 968 514 972 516 M988 450 992 450 996 449 M1216 546 1216 558 1213 571 M962 634 949 630 940 620 M826 457 824 465 825 473 M1216 546 1228 547 1240 549 M688 492 691 489 700 486 M1151 741 1149 732 1148 722 1147 711 M1046 730 1055 735 1059 743 1062 752 M981 529 982 536 980 543 M1015 516 1014 512 1013 508 M1069 639 1057 638 1045 639 M913 695 912 704 910 713 907 721 M1135 400 1128 408 1123 417 1121 428 M977 522 975 519 972 516 M1348 507 1339 512 1330 515 M1060 412 1073 415 1086 414 M1174 608 1174 618 1177 627 1177 637 M953 512 957 518 958 524 M1016 541 1013 543 1010 545 M1180 677 1191 682 1201 684 1213 684 M1030 521 1028 517 1027 513 M927 546 931 546 935 547 M839 816 831 824 822 833 M1123 682 1124 670 1125 657 M1335 533 1346 530 1356 525 1365 517 M1045 558 1035 554 1026 546 1016 541 M962 792 953 799 951 809 952 820 M973 564 970 570 966 574 M644 412 643 419 647 428 M1307 316 1295 309 1282 308 M1015 585 1014 589 1011 593 M1174 608 1182 613 1190 619 1197 625 M1265 607 1254 605 1243 602 1233 597 1222 597 M1343 304 1343 316 1341 328 M1187 704 1179 697 1176 688 1180 677 M965 566 968 561 971 556 M756 538 766 542 777 546 M970 490 976 492 982 491 M1120 573 1113 581 1104 585 1095 590 1087 596 M796 385 806 384 811 382 M918 616 922 613 926 610 M1018 472 1030 475 1041 472 M1250 801 1250 801 M1188 571 1190 582 1195 592 M1220 815 1228 806 1238 802 1250 801 M999 528 1003 524 1005 519 M1157 576 1162 567 1168 559 M1003 555 1000 552 996 550 M918 598 923 603 926 610 M971 556 975 558 978 559 M973 473 972 478 972 483 M1160 618 1149 618 1139 616 M692 462 678 461 665 463 M1144 792 1134 789 1125 788 1117 783 M948 560 954 559 959 557 M851 701 852 710 854 719 856 728 M769 378 778 380 787 382 796 385 M857 540 867 543 M963 472 959 472 955 471 M991 475 986 474 981 472 M989 583 995 582 1001 580 M897 744 890 734 879 728 M1022 593 1017 594 1011 593 M1041 496 1037 498 1032 498 M952 501 957 498 961 495 M1274 478 1269 489 1263 499 1259 511 M1342 355 1336 365 1331 375 1325 384 M933 525 935 520 940 519 M1122 493 1116 487 1111 482 M926 736 933 742 937 752 946 755 956 757 964 760 M1017 486 1015 481 1011 477 M1293 533 1284 529 1274 529 M674 494 672 493 663 485 653 481 M1141 429 1131 428 1121 428 M773 501 774 512 774 518 M1005 483 1004 479 1002 475 M768 553 777 546 M1001 571 997 569 993 569 M991 492 996 492 1001 492 M1004 780 1013 780 1023 781 1032 781 M942 530 938 531 933 533 M991 593 996 589 1002 587 M981 529 977 531 972 531 M1335 533 1328 540 1320 545 M1124 609 1131 613 1139 616 M1232 298 1244 292 1258 292 M692 462 694 456 694 448 M1011 470 1007 468 1003 467 M1280 706 1285 697 1285 688 1283 678 M1343 553 1332 550 1320 545 M1332 445 1324 452 1316 457 1308 463 1301 471 M980 464 980 468 981 472 M1227 650 1240 647 1250 642 1258 632 M1156 459 1147 453 1138 448 M756 489 754 476 759 463 M973 564 974 569 976 573 M1359 542 1364 550 1372 556 M743 570 743 570 M635 462 641 454 650 449 M1068 552 1078 549 1088 551 M991 475 994 469 996 463 M917 628 922 624 927 622 M1062 752 1074 751 1087 749 M1068 552 1057 556 1045 558 M945 492 946 496 M1057 664 1067 671 1076 680 M1005 483 1003 487 1001 492 M1232 298 1219 296 1214 294 M1369 724 1356 725 1344 723 M1045 639 1039 628 1028 621 M1144 642 1142 629 1139 616 M1002 438 1006 437 1010 436 M1040 371 1034 378 1030 388 1027 398 M839 816 842 805 844 795 850 786 M837 442 832 451 826 457 M995 753 1006 753 1016 754 1026 753 M851 530 850 535 848 539 M1095 696 1085 688 1076 680 M1059 470 1050 470 1041 472 M806 588 804 593 M1123 682 1121 694 1117 705 M999 507 998 511 997 515 M808 468 811 462 811 456 M1028 711 1022 719 1015 726 1008 733 M887 706 900 710 907 721 M1363 473 1352 472 1340 472 1329 475 M1048 429 1037 432 1028 435 1020 443 1014 452 M1121 428 1110 433 1102 442 M1347 650 1344 662 1342 674 M825 684 837 679 847 670 M927 546 929 551 930 556 M972 660 962 660 953 657 944 654 M987 552 992 551 996 550 M956 551 955 547 953 544 M1367 371 1356 369 1349 363 1342 355 M991 492 992 496 993 500 M1265 555 1251 555 1240 549 M985 564 989 566 993 569 M1216 462 1207 465 1198 469 1190 475 1180 478 M723 571 715 574 M1112 636 1122 640 1133 641 1144 642 M635 462 630 464 M1341 697 1347 710 1344 723 M1011 497 1013 502 1013 508 M1237 730 1230 723 M1214 713 1211 710 M1068 552 1062 545 1054 539 1046 534 M997 480 994 482 990 485 M948 537 953 538 958 536 M1002 587 1002 583 1001 580 M1241 374 1248 381 1257 386 1265 390 1274 393 1282 398 M953 512 952 506 952 501 M967 463 966 459 966 455 M1151 741 1146 750 1141 759 1138 769 M1094 661 1096 649 1095 638 1090 628 M940 565 938 559 939 553 M917 628 910 630 903 631 M1004 499 1007 497 1011 497 M1037 807 1036 794 1032 781 M1097 512 1101 504 1101 496 M920 795 913 801 906 808 902 817 M977 522 980 519 982 515 M1061 589 1060 603 1060 616 M1020 502 1017 505 1013 508 M913 609 909 604 906 599 M769 674 768 669 761 660 754 651 M980 543 985 540 990 536 M1222 597 1213 594 1205 591 1195 592 M1231 498 1238 491 1243 483 1245 473 M1363 473 1362 483 1360 492 1354 500 1348 507 M723 571 733 569 743 570 M669 440 659 444 650 449 M917 640 926 644 935 649 944 654 M1146 548 1158 551 1168 559 M952 478 955 478 959 479 M963 590 960 600 957 611 956 622 962 634 M915 529 916 534 918 539 M772 423 780 417 785 404 M1187 704 1199 709 1211 710 M1112 636 1105 643 1099 652 1094 661 M1305 729 1316 730 1325 729 1335 727 1344 723 M1265 555 1269 542 1274 529 M999 507 994 510 988 509 M1161 414 1165 402 1162 391 M1241 374 1240 385 1242 396 1244 406 M1004 659 1014 661 1024 662 1034 662 M808 468 810 474 814 479 M1357 572 1353 560 1343 553 M759 463 759 453 760 447 M1108 759 1098 754 1087 749 M1244 441 1245 429 1244 418 1244 406 M979 506 974 507 969 507 M989 517 989 513 988 509 M1366 684 1354 677 1342 674 M899 609 906 610 913 609 M1087 596 1079 591 1070 589 1061 589 M1275 652 1279 643 1284 635 1288 626 M1259 672 1247 677 1235 674 M1045 639 1045 629 1051 621 1060 616 M1012 554 1010 550 1010 545 M1244 406 1237 400 1229 395 1221 389 1213 384 M731 660 731 650 731 647 M730 646 729 640 727 636 M1282 398 1287 389 1290 379 1298 372 1304 365 1311 357 M793 506 795 498 793 490 M623 494 612 496 M1004 780 1010 770 1018 761 1026 753 M948 560 943 557 939 553 M985 499 982 502 979 506 M1160 618 1156 606 1154 594 M1025 685 1018 695 1009 702 997 706 M1168 559 1171 550 1175 541 M1013 576 1006 577 1001 580 M1241 374 1235 368 1233 366 M904 622 899 621 893 620 M1207 768 1211 779 1219 789 M1144 792 1147 795 M798 426 793 414 785 404 M1220 815 1217 802 1219 789 M1165 442 1158 449 1156 459 M793 506 783 502 773 501 M1010 436 1009 440 1009 443 M1144 642 1155 639 1166 639 1177 637 M910 543 915 549 920 552 M1003 810 1007 823 1015 832 1029 835 M756 489 751 481 M629 409 627 410 M897 566 895 555 890 548 M1341 697 1340 685 1342 674 M1305 729 1301 738 1296 748 1292 758 M988 450 985 452 982 454 M824 421 817 414 814 403 M933 533 931 536 927 538 M1335 533 1334 524 1330 515 M999 528 998 532 1001 536 M1282 398 1280 408 1277 419 1272 428 M1347 650 1359 647 1371 651" fill="none" stroke="#b597cd" stroke-width="3.8" stroke-linejoin="round" stroke-linecap="round"/>
<path d="M1274 529 1263 532 1253 531 M1111 482 1104 488 1101 496 M935 836 942 826 952 820 M669 403 660 398 658 394 M732 661 742 655 754 651 M953 512 948 511 942 511 M1274 478 1283 475 1292 474 1301 471 M1144 792 1141 780 1138 769 M1194 541 1184 543 1175 541 M880 576 884 581 891 589 M1068 552 1067 542 1066 531 1062 521 M1104 407 1096 413 1086 414 M1366 684 1358 689 1350 695 1341 697 M850 786 855 798 866 805 M785 453 773 447 768 446 M1017 486 1017 490 1019 494 M1087 571 1087 561 1088 551 M1174 608 1187 603 1195 592 M979 583 977 578 976 573 M824 551 824 547 822 537 M953 512 949 516 948 522 M980 464 981 459 982 454 M1369 724 1370 734 1369 745 1368 755 M1180 478 1171 488 1168 502 M1119 528 1120 519 1116 511 M944 547 940 547 935 547 M1009 530 1006 535 1001 536 M1335 533 1339 543 1343 553 M1274 478 1274 489 1277 498 1281 507 1287 515 M917 640 921 636 925 632 M847 670 859 675 868 684 M1275 652 1271 644 1266 636 1258 632 M623 494 626 504 629 508 M965 566 960 567 956 568 M918 616 916 612 913 609 M1179 518 1176 530 1175 541 M891 589 899 592 906 599 M837 442 847 449 850 450 M864 464 864 464 M962 504 961 499 961 495 M1341 697 1330 704 1317 707 M759 463 770 469 782 471 M977 497 980 495 982 491 M887 706 885 718 879 728 M843 544 843 544 848 539 M983 444 988 442 993 440 M975 448 971 447 968 446 M1027 399 1033 405 1040 411 M1002 475 1004 471 1003 467 M1122 493 1119 502 1116 511 M1011 470 1014 472 1018 472 M1120 454 1123 464 1126 474 M966 455 970 455 975 457 M1049 454 1037 452 1025 451 1014 452 M1144 642 1152 652 1161 660 M1357 776 1364 766 1368 755 M1122 493 1131 497 1140 502 M926 736 936 731 946 730 957 730 968 730 M1260 318 1249 317 1238 321 1229 321 M893 639 882 646 868 648 M923 669 922 678 919 687 913 695 M1213 571 1201 570 1188 571 M813 627 816 633 M839 816 843 828 853 836 M1011 470 1006 472 1002 475 M1366 684 1367 673 1369 662 1371 651 M1067 502 1058 505 1051 510 M665 463 656 457 650 449 M1075 430 1075 439 1076 448 1077 457 M1184 833 1172 831 1166 828 M1259 511 1253 520 1253 531 M1366 436 1363 445 1363 454 1364 464 1363 473 M1258 632 1247 628 1235 627 1224 622 M1075 430 1084 434 1093 438 1102 442 M856 728 867 724 879 728 M1120 729 1110 728 1101 727 1091 726 M1141 429 1138 438 1138 448 M1067 502 1077 498 1085 490 M1312 676 1302 680 1293 680 1283 678 M966 522 969 519 972 516 M948 537 943 538 939 539 M972 660 975 669 980 677 981 687 M775 526 775 535 777 546 M1314 525 1323 521 1330 515 M988 574 989 579 989 583 M1356 613 1344 609 1332 604 M979 583 984 580 988 574 M952 820 962 824 972 827 982 831 M939 553 937 550 935 547 M989 583 986 586 984 589 M1292 758 1281 754 1277 754 M1073 395 1078 405 1086 414 M723 571 726 561 728 551 M874 783 862 786 850 786 M889 483 884 484 872 484 M1154 594 1146 596 1139 598 M1311 357 1321 359 1332 358 1342 355 M953 475 953 474 955 471 M1097 512 1107 511 1116 511 M1094 661 1085 670 1076 680 M1104 407 1112 418 1121 428 M669 403 679 406 688 411 M955 469 955 471 M1325 566 1322 556 1320 545 M1102 442 1097 433 1091 423 1086 414 M807 489 812 485 814 479 M918 539 918 545 920 552 M773 501 782 493 793 490 M1014 452 1011 448 1009 443 M997 706 990 696 981 687 M942 530 945 526 948 522 M1245 473 1246 484 1250 493 1255 502 1259 511 M746 630 750 639 754 651 M1143 474 1155 475 1162 484 M977 497 981 497 985 499 M769 378 763 385 757 393 751 399 M995 558 999 557 1003 555 M876 827 885 825 894 823 902 817 M1007 461 1012 461 1016 463 M635 462 642 473 653 481 M844 634 853 638 860 643 868 648 M834 768 830 776 826 784 823 793 M933 576 931 589 932 601 M1120 729 1120 717 1117 705 M918 539 922 538 927 538 M962 792 972 787 983 786 993 782 1004 780 M1184 833 1197 836 1209 837 M1197 625 1211 623 1224 622 M1017 486 1019 479 1018 472 M1020 502 1020 498 1019 494 M1016 567 1011 565 1006 563 M1059 357 1061 355 M1073 342 1074 341 M1227 650 1237 660 1235 674 M929 712 918 716 907 721 M1032 498 1030 494 1027 489 M1097 512 1100 519 1104 525 M932 601 925 598 918 598 M1300 437 1299 426 1301 416 1311 409 M846 504 840 502 834 505 M1095 696 1095 706 1094 716 1091 726 M1120 573 1119 563 1119 552 M991 528 995 529 999 528 M712 423 703 423 695 418 688 411 M839 816 848 812 856 807 866 805 M723 571 723 575 M1310 616 1320 624 1331 630 M933 533 936 536 939 539 M796 385 790 394 785 404 M1022 529 1026 525 1030 521 M851 530 853 525 856 521 M932 770 942 767 954 764 964 760 M930 556 935 555 939 553 M1331 784 1338 780 1347 776 1357 776 M1258 825 1247 830 1236 835 M1200 413 1206 423 1213 431 1222 436 1234 437 1244 441 M1022 529 1020 536 1016 541 M1282 398 1282 387 1284 376 1283 366 1278 356 M962 703 960 713 963 722 968 730 M1343 304 1332 298 1322 293 1311 290 M835 521 831 524 826 526 M1151 741 1161 733 1169 724 M970 490 968 487 964 485 M1059 470 1069 465 1077 457 M975 457 978 455 982 454 M1332 604 1330 594 1330 584 1327 575 1325 566 M1174 608 1163 602 1154 594 M963 472 965 468 967 463 M1250 801 1250 801 M700 391 694 401 688 411 M872 484 880 494 885 500 M1046 730 1036 729 1027 730 1018 732 1008 733 M1307 316 1316 318 1324 321 1333 325 1341 328 M1357 572 1366 566 1372 556 M1237 730 1237 719 1236 709 1235 698 M1168 502 1172 511 1179 518 M700 391 693 383 684 380 682 380 M957 576 957 572 956 568 M1016 567 1026 565 1036 563 1045 558 M1313 649 1323 640 1331 630 M1105 542 1097 548 1088 551 M1158 533 1151 540 1146 548 M1084 781 1072 774 1059 778 M1095 696 1107 699 1117 705 M991 528 989 523 989 517 M942 530 946 531 951 530 M907 531 907 533 M958 536 955 533 951 530 M808 441 810 448 811 456 M940 620 934 621 927 622 M1144 642 1134 648 1125 657 M923 669 934 662 944 654 M1347 650 1339 640 1331 630 M1366 436 1355 440 1344 443 1332 445 M1365 328 1369 319 1371 310 1371 300 M1216 462 1225 454 1235 448 1244 441 M1120 573 1130 578 1141 583 M800 533 788 539 777 546 M811 609 818 608 827 601 M939 539 938 543 935 547 M1216 462 1216 472 1214 481 1211 490 1205 497 1201 506 M964 544 968 544 972 546 M964 544 958 544 953 544 M958 536 958 530 958 524 M989 517 986 516 982 515 M958 536 955 540 953 544 M692 462 693 469 694 475 M927 622 925 627 925 632 M1329 475 1319 474 1310 472 1301 471 M932 601 929 606 926 610 M1108 759 1112 771 1117 783 M1194 541 1191 550 1188 560 1188 571 M820 729 827 718 828 707 827 695 825 684 M969 507 971 512 972 516 M793 490 794 484 795 478 M1231 498 1228 488 1221 481 1220 471 1216 462 M1011 477 1015 475 1018 472 M1146 548 1139 543 1132 537 M769 378 757 380 745 380 M963 590 965 586 966 582 M1147 711 1158 718 1169 724 M1069 639 1066 627 1060 616 M647 428 636 429 625 431 624 432 M888 569 897 566 M897 566 903 554 910 543 M1046 534 1044 546 1045 558 M1069 717 1064 709 1058 702 1051 695 M1151 741 1161 744 1169 751 1175 759 M947 680 958 685 970 687 981 687 M1275 652 1284 647 1294 646 1303 645 1313 649 M855 753 855 741 856 728 M991 492 991 488 990 485 M1313 649 1314 658 1313 667 1312 676 M1146 548 1147 560 1146 571 1141 583 M991 475 991 480 990 485 M826 457 819 457 811 456 M893 639 899 636 903 631 M1137 520 1145 519 1153 515 M1305 729 1297 721 1289 713 1280 706 M973 473 977 472 981 472 M917 628 922 629 925 632 M1032 781 1041 783 1050 780 1059 778 M658 500 660 499 660 499 M1039 520 1038 512 1042 506 M1220 815 1228 825 1236 835 M1168 502 1160 508 1153 515 M988 574 990 571 993 569 M1020 502 1026 500 1032 498 M623 494 620 484 618 474 618 474 M823 487 827 497 834 505 M1085 490 1093 491 1101 496 M991 492 986 492 982 491 M1033 416 1040 411 M1029 835 1038 834 1048 833 1056 829 M1003 810 1014 809 1026 808 1037 807 M927 546 923 542 918 539 M769 378 762 370 756 361 M1033 507 1031 502 1032 498 M981 529 985 533 990 536 M793 642 801 651 811 659 M1175 759 1185 763 1196 766 1207 768 M820 729 814 722 808 716 801 710 794 707 M1188 571 1180 576 1171 581 M856 602 853 596 M897 566 905 561 912 556 920 552 M970 490 971 486 972 483 M1234 527 1224 527 1215 523 M1062 521 1057 515 1051 510 M1077 381 1080 375 1078 365 1080 355 1080 353 M1082 343 1083 340 M1105 542 1113 546 1119 552 M793 677 805 671 811 659 M756 489 764 496 773 501 M1002 438 997 438 993 440 M1112 636 1118 628 1120 618 1124 609 M927 529 923 526 923 524 M1143 474 1135 474 1126 474 M892 679 880 683 868 684 M1027 489 1032 479 1041 472 M948 568 944 566 940 565 M1293 533 1289 524 1287 515 M793 642 787 631 M944 547 941 549 939 553 M973 473 968 473 963 472 M963 590 969 591 976 590 M1365 328 1353 327 1341 328 M1046 534 1038 534 1030 533 M1300 437 1296 449 1298 460 1301 471 M991 475 989 469 987 463 M1267 726 1257 726 1250 727 M1246 727 1237 730 M857 540 853 538 848 539 M649 502 642 496 632 496 623 494 M825 473 820 476 814 479 M881 617 874 611 864 608 856 602 M1300 437 1311 439 1321 443 1332 445 M1185 381 1174 385 1166 389 M1072 396 1066 403 1060 412 M1192 787 1195 800 1196 812 M1213 684 1224 680 1235 674 M962 634 955 639 949 646 944 654 M834 768 826 763 M1168 559 1173 570 1171 581 M1147 711 1137 708 1127 708 1117 705 M1359 542 1352 548 1343 553 M839 816 832 809 827 801 823 793 M1222 597 1224 610 1224 622 M859 508 855 509 851 511 M1171 581 1162 587 1154 594 M962 703 974 698 981 687 M1001 571 1005 567 1006 563 M1200 413 1190 412 1181 410 1171 413 1161 414 M996 463 992 463 987 463 M1112 636 1102 629 1090 628 M972 546 976 546 980 543 M1231 498 1232 507 1232 517 1234 527 M793 642 804 635 816 633 M997 515 998 522 999 528 M902 817 892 816 883 813 874 810 866 805 M669 440 675 430 682 420 688 411 M834 768 845 761 855 753 M935 836 926 832 918 827 910 822 902 817 M1014 452 1015 457 1016 463 M962 703 958 695 953 687 947 680 M944 547 948 545 953 544 M1007 635 1003 647 1004 659 M991 593 988 591 984 589 M665 463 661 473 653 481 M834 505 833 511 828 516 M1332 604 1320 608 1310 616 M1177 637 1174 647 1169 654 1161 660 M1002 545 1006 545 1010 545 M1027 489 1023 491 1019 494 M1367 371 1363 360 1362 350 1363 339 1365 328 M1007 635 1014 624 1028 621 M980 464 984 464 987 463 M948 560 948 564 948 568 M977 497 977 501 979 506 M962 703 950 702 940 708 929 712 M1356 613 1360 601 1371 594 M647 428 646 439 650 449 M1300 437 1291 433 1282 429 1272 428 M1120 454 1111 448 1102 442 M1150 684 1156 672 1161 660 M995 753 1004 744 1008 733 M1010 436 1016 428 M1033 414 1040 411 M1201 506 1190 513 1179 518 M985 499 989 499 993 500 M843 473 842 484 836 494 834 505 M846 504 849 507 851 511 M1120 729 1118 740 1115 750 1108 759 M999 507 996 503 993 500 M948 568 952 567 956 568 M797 454 797 461 793 467 M1311 357 1312 368 1316 377 1325 384 M897 744 903 733 907 721 M995 558 997 554 996 550 M1260 318 1259 305 1258 292 M1006 429 1007 430 1010 436 M1117 783 1126 774 1138 769 M966 522 968 527 972 531 M1062 752 1061 765 1059 778 M997 515 993 516 989 517 M756 538 747 534 743 533 M929 712 920 704 913 695 M864 464 854 469 843 473 M964 514 958 514 953 512 M1045 371 1051 374 1057 378 M1004 452 1004 457 1007 461 M947 680 946 667 944 654 M797 454 805 454 811 456 M1120 454 1129 451 1138 448 M874 783 870 794 866 805 M991 475 994 477 997 480 M980 483 980 477 981 472 M1112 636 1119 646 1125 657 M1002 438 1001 444 996 449 M1051 695 1043 688 1037 681 1033 673 1034 662 M1123 682 1117 676 1109 671 1103 664 1094 661 M1137 520 1129 526 1119 528 M1046 534 1055 530 1062 521 M1177 637 1185 647 1193 657 M918 598 915 603 913 609 M926 736 917 741 907 743 897 744 M1120 454 1110 461 1101 467 M995 753 986 760 976 762 964 760 M1343 304 1352 302 1362 301 1371 300 M1332 445 1329 435 1323 426 1317 418 1311 409 M1180 677 1169 670 1161 660 M1274 478 1276 468 1270 458 1271 448 1271 438 1272 428 M785 453 791 455 797 454 M1030 533 1026 531 1022 529 M728 551 737 543 737 541 M1009 530 1014 534 1016 541 M1139 616 1138 607 1139 598 M932 770 920 775 908 773 M988 509 991 505 993 500 M962 504 957 501 952 501 M962 792 971 798 981 804 992 808 1003 810 M954 486 957 483 959 479 M1001 492 997 496 993 500 M1157 576 1164 579 1171 581 M1119 528 1112 528 1104 525 M1039 520 1034 520 1030 521 M814 391 814 392 814 403 M985 564 981 563 978 559 M820 729 832 725 844 724 856 728 M1213 571 1222 564 1232 558 1240 549 M1325 751 1314 752 1303 754 1292 758 M927 546 923 549 920 552 M759 463 748 469 M1244 441 1253 435 1263 433 1272 428 M1091 726 1088 737 1087 749 M1046 730 1034 722 1028 711 M1015 516 1021 516 1027 513 M1135 400 1125 401 1114 403 1104 407 M1057 664 1045 664 1034 662 M1046 730 1039 737 1033 745 1026 753 M1132 537 1126 533 1119 528 M856 521 853 516 851 511 M891 546 896 544 903 541 M995 558 994 564 993 569 M1108 759 1120 756 1130 759 1138 769 M1274 529 1278 521 1287 515 M983 444 986 446 988 450 M1062 802 1060 811 1059 820 1056 829 M1310 502 1310 491 1305 481 1301 471 M1235 698 1235 686 1235 674 M1260 318 1251 311 1242 303 1232 298 M1105 542 1106 534 1104 525 M1175 759 1169 767 1169 776 1167 786 1170 795 M966 535 965 540 964 544 M1004 499 998 499 993 500 M1305 729 1310 718 1317 707 M1192 787 1188 777 1184 766 1175 759 M1069 639 1080 634 1090 628 M1298 596 1289 604 1288 615 1288 626 M1004 780 1003 790 1002 800 1003 810 M1132 537 1126 545 1119 552 M1216 462 1226 466 1236 470 1245 473 M1037 807 1049 802 1062 802 M729 510 732 502 732 497 M1180 677 1187 667 1193 657 M800 533 812 532 822 537 M1137 520 1137 529 1132 537 M796 385 792 375 793 365 796 361 M1025 685 1025 698 1028 711 M962 792 964 781 964 771 964 760 M1079 830 1069 829 1056 829 M1157 576 1149 579 1141 583 M1004 452 1000 458 996 463 M1278 576 1272 586 1269 597 1265 607 M1087 571 1088 583 1087 596 M1310 502 1298 508 1287 515 M954 486 950 491 946 496 M1011 497 1015 496 1019 494 M991 528 986 529 981 529 M887 706 896 702 904 698 913 695 M1164 818 1164 816 1168 806 1170 795 M1158 533 1166 538 1175 541 M1312 676 1310 687 1312 698 1317 707 M966 455 966 450 967 447 M1219 789 1209 795 1203 804 1196 812 M1278 576 1283 568 1290 561 1293 552 M980 483 985 483 990 485 M881 617 887 620 893 620 M798 426 803 433 808 441 M782 471 787 467 793 467 M756 538 765 531 772 526 M1033 507 1037 506 1042 506 M837 535 843 537 848 539 M965 566 966 570 966 574 M957 461 960 460 967 463 M1347 408 1353 399 1357 389 1362 380 1367 371 M1037 807 1035 816 1030 825 1029 835 M847 670 855 664 862 657 868 648 M1015 516 1016 520 1015 524 M793 677 781 679 780 679 M1069 717 1062 728 1061 740 1062 752 M1292 758 1298 768 1303 774 M858 590 856 602 M1120 729 1125 739 1131 748 1132 759 1138 769 M962 634 973 628 984 621 M793 677 794 687 793 695 M980 483 981 487 982 491 M1048 429 1044 420 1040 411 M997 480 1000 478 1002 475 M1157 576 1152 567 1147 558 1146 548 M1282 398 1293 398 1303 400 1311 409 M1325 384 1319 391 1313 399 1311 409 M1347 408 1339 401 1332 393 1325 384 M994 542 993 538 990 536 M844 634 835 633 825 631 816 633 M933 576 936 570 940 565 M996 449 995 444 993 440 M920 795 914 784 908 773 M701 483 699 479 694 475 M837 442 832 431 824 421 M1004 452 1008 451 1014 452 M1200 413 1202 423 1199 432 1197 441 M1174 608 1167 612 1160 618 M1274 478 1265 476 1255 474 1245 473 M983 444 979 447 975 448 M973 473 977 478 980 483 M728 551 739 558 743 570 M991 593 987 601 985 611 984 621 M930 520 931 521 933 525 M1022 529 1018 528 1015 524 M835 521 832 519 828 516 M1085 490 1078 481 1069 475 1059 470 M745 570 743 570 M820 512 824 514 828 516 M1051 695 1059 689 1068 686 1076 680 M910 543 914 541 918 539 M933 533 930 531 927 529 M1200 413 1200 402 1205 392 1213 384 M1191 736 1181 728 1169 724 M1005 483 1008 480 1011 477 M1025 685 1028 673 1034 662 M962 504 966 504 969 507 M1036 595 1048 591 1061 589 M1325 751 1318 759 1310 767 1307 775 M1123 682 1136 688 1150 684 M1015 585 1019 583 1021 580 M807 489 800 488 793 490 M1101 467 1088 463 1077 457 M1187 704 1183 719 1169 724 M1216 462 1211 453 1203 448 1197 441 M1220 815 1215 826 1209 837 M859 508 865 496 872 484 M1211 710 1212 697 1213 684 M669 440 665 451 665 463 M1278 576 1284 583 1291 590 1298 596 M1045 639 1037 650 1034 662 M1227 650 1227 641 1225 632 1224 622 M1051 510 1047 508 1042 506 M1293 552 1292 543 1293 533 M1046 730 1046 718 1047 706 1051 695 M966 455 961 455 960 454 M1140 502 1146 509 1153 515 M1036 595 1029 595 1022 593 M933 533 933 529 933 525 M1018 472 1017 468 1016 463 M952 501 949 498 946 496 M1307 316 1311 303 1311 290 M904 622 902 626 903 631 M1275 652 1265 661 1259 672 M1045 558 1034 559 1023 557 1012 554 M1026 753 1038 752 1050 755 1062 752 M1265 607 1273 612 1281 619 1288 626 M988 450 994 455 996 463 M1020 502 1025 507 1027 513 M966 582 967 578 966 574 M1091 726 1081 721 1069 717 M1062 521 1074 523 1087 525 M926 736 927 724 929 712 M1135 400 1137 399 M1245 473 1246 462 1244 452 1244 441 M686 492 689 487 694 475 M1033 507 1030 510 1027 513 M857 540 854 535 851 530 M1310 616 1300 622 1288 626 M814 589 817 592 M1260 318 1256 326 1253 335 1253 344 M1232 298 1228 309 1227 318 M979 583 977 586 976 590 M933 517 935 517 940 519 M1241 374 1245 364 1248 354 1253 344 M1002 545 999 547 996 550 M669 440 680 447 694 448 M1342 355 1342 342 1341 328 M1267 726 1258 720 1251 711 1241 707 1235 698 M910 543 906 543 903 541 M970 490 965 492 961 495 M1061 589 1057 578 1053 567 1045 558 M707 467 702 471 694 475 M1048 429 1038 430 1028 430 1019 431 1010 436 M864 464 867 474 872 484 M879 728 889 729 898 726 907 721 M745 380 738 381 M769 378 777 385 782 394 785 404 M1348 507 1355 514 1365 517 M1025 685 1033 688 1042 691 1051 695 M1015 516 1010 518 1005 519 M1069 639 1063 646 1060 655 1057 664 M987 552 984 547 980 543 M948 537 949 534 951 530 M1060 412 1067 421 1075 430 M844 634 851 624 856 614 856 602 M973 564 976 562 978 559 M1293 533 1303 527 1314 525 M1111 482 1119 478 1126 474 M1005 519 1010 514 1013 508 M1191 736 1186 744 1181 752 1175 759 M907 533 905 537 903 541 M1001 571 1000 575 1001 580 M1313 649 1305 641 1296 635 1288 626 M1195 592 1185 583 1171 581 M981 472 984 467 987 463 M820 729 820 733 M1280 706 1272 703 1262 704 1253 702 1244 700 1235 698 M1177 637 1186 630 1197 625 M957 576 962 575 966 574 M948 537 950 541 953 544 M1265 607 1259 600 1252 594 1247 586 1239 581 M1259 672 1271 676 1283 678 M964 760 965 750 968 740 968 730 M1158 533 1157 524 1153 515 M1192 787 1197 776 1207 768 M1314 525 1317 535 1320 545 M979 583 981 587 984 589 M1147 711 1146 702 1146 693 1150 684 M980 483 976 483 972 483 M1260 318 1272 315 1282 308 M996 463 999 466 1003 467 M1222 597 1232 591 1239 581 M920 795 929 799 937 805 944 813 952 820 M1003 810 996 818 988 823 982 831 M1265 607 1262 620 1258 632 M1026 753 1022 745 1016 738 1008 733 M844 634 842 625 839 616 834 608 830 602 M1011 470 1013 466 1016 463 M1177 637 1168 628 1160 618 M1087 596 1089 606 1090 617 1090 628 M891 589 894 599 899 609 M1307 316 1315 310 1323 304 1333 304 1343 304 M965 566 962 562 959 557 M1325 566 1334 558 1343 553 M1184 833 1187 821 1196 812 M975 457 974 452 975 448 M964 544 959 546 956 551 M1240 549 1241 560 1241 570 1239 581 M1101 467 1106 474 1111 482 M1278 356 1270 351 1262 347 1253 344 M918 616 923 619 927 622 M1049 454 1048 441 1048 429 M1114 793 1117 783 M745 380 745 391 750 399 M800 533 807 527 814 519 820 512 M1311 357 1300 360 1289 357 1278 356 M826 526 828 521 828 516 M876 827 864 831 853 836 M1305 729 1313 736 1319 743 1325 751 M999 507 1001 503 1004 499 M1140 502 1143 493 1143 483 1143 474 M1241 374 1232 378 1222 380 1213 384 M825 684 819 676 815 667 811 659 M1332 445 1330 455 1327 465 1329 475 M822 537 823 531 826 526 M970 490 974 493 977 497 M1046 730 1058 725 1069 717 M892 679 901 673 911 668 923 669 M994 542 995 546 996 550 M987 552 982 552 978 551 M941 503 944 499 946 496 M926 736 922 748 924 760 932 770 M874 783 884 774 896 774 908 773 M1004 452 1000 450 996 449 M835 521 840 521 845 518 M1012 554 1008 555 1003 555 M994 542 998 539 1001 536 M926 736 914 731 907 721 M972 660 982 660 993 658 1004 659 M1165 442 1176 441 1186 442 1197 441 M1036 595 1042 604 1050 612 1060 616 M964 514 966 510 969 507 M1347 408 1355 416 1361 425 1366 436 M963 472 962 476 959 479 M1144 792 1156 795 1170 795 M756 489 749 486 M1368 755 1363 746 1358 738 1352 730 1344 723 M981 529 979 526 977 522 M893 639 894 629 893 620 M1141 583 1139 590 1139 598 M845 518 849 516 851 511 M1006 563 1005 559 1003 555 M944 654 938 647 931 640 925 632 M1267 726 1273 716 1280 706 M1216 546 1205 543 1194 541 M948 522 944 521 940 519 M1325 751 1331 742 1340 733 1344 723 M1278 356 1284 347 1287 337 1285 327 1284 318 1282 308 M930 556 936 559 940 565 M1310 616 1302 607 1298 596 M1007 461 1006 464 1003 467 M968 730 971 719 978 712 987 709 997 706 M971 556 974 554 978 551 M1060 412 1050 410 1040 411 M1001 492 1003 495 1004 499 M955 471 958 475 959 479 M899 609 903 604 906 599 M1220 815 1208 813 1196 812 M997 706 1001 715 1004 724 1008 733 M940 620 934 613 926 610 M997 515 1001 517 1005 519 M1180 478 1171 480 1162 484 M793 506 787 518 776 523 M958 524 955 527 951 530 M915 529 918 526 M1084 781 1085 770 1085 760 1087 749 M1357 572 1361 585 1371 594 M834 768 844 776 850 786 M956 551 957 554 959 557 M881 617 873 624 864 629 855 633 844 634 M1026 753 1031 762 1032 771 1032 781 M1032 781 1040 786 1047 791 1055 797 1062 802 M807 489 811 502 820 512 M823 487 824 480 825 473 M948 522 950 526 951 530 M899 609 897 615 893 620 M918 616 911 619 904 622 M972 546 975 549 978 551 M964 485 963 481 959 479 M917 640 910 637 903 631 M954 486 957 491 961 495 M837 535 836 528 835 521 M1227 650 1216 653 1205 656 1193 657 M623 494 629 484 633 474 635 462 M1258 825 1249 814 1250 801 M1004 452 1007 449 1009 443 M966 522 962 522 958 524 M795 478 794 472 793 467 M1216 546 1215 534 1215 523 M1009 530 1011 526 1015 524 M1201 506 1209 513 1215 523 M964 514 966 517 966 522 M1240 549 1250 543 1253 531 M892 679 893 688 891 697 887 706 M800 533 795 544 797 551 M966 535 962 536 958 536 M933 525 930 527 927 529 M1359 542 1366 530 1365 517 M942 511 942 515 940 519 M1007 635 999 630 990 627 984 621 M1310 502 1312 513 1314 525 M1097 512 1092 519 1087 525 M995 753 997 763 1001 772 1004 780 M623 494 614 487 605 484 M942 511 939 511 937 511 M927 546 926 542 927 538 M897 744 901 754 904 764 908 773 M1293 552 1302 547 1311 546 1320 545 M1097 512 1088 504 1078 503 1067 502 M1011 470 1011 474 1011 477 M980 464 978 460 975 457 M966 535 967 528 966 522 M1049 454 1046 463 1041 472 M1168 502 1165 493 1162 484 M1192 787 1180 788 1170 795 M976 590 972 585 966 582 M942 511 942 507 941 503 M1234 527 1244 526 1253 531 M915 529 911 531 907 533 M923 669 925 658 923 649 917 640 M1068 552 1066 562 1062 570 1061 580 1061 589 M790 551 788 550 777 546 M1002 432 1002 438 M824 421 814 429 808 441 M1325 566 1315 561 1304 558 1293 552 M745 380 752 372 756 361 M851 701 860 693 868 684 M1075 430 1081 422 1086 414 M941 503 939 505 M964 514 968 514 972 516 M988 450 992 450 996 449 M1216 546 1216 558 1213 571 M962 634 949 630 940 620 M826 457 824 465 825 473 M1216 546 1228 547 1240 549 M688 492 691 489 700 486 M1151 741 1149 732 1148 722 1147 711 M1046 730 1055 735 1059 743 1062 752 M981 529 982 536 980 543 M1015 516 1014 512 1013 508 M1069 639 1057 638 1045 639 M913 695 912 704 910 713 907 721 M1135 400 1128 408 1123 417 1121 428 M977 522 975 519 972 516 M1348 507 1339 512 1330 515 M1060 412 1073 415 1086 414 M1174 608 1174 618 1177 627 1177 637 M953 512 957 518 958 524 M1016 541 1013 543 1010 545 M1180 677 1191 682 1201 684 1213 684 M1030 521 1028 517 1027 513 M927 546 931 546 935 547 M839 816 831 824 822 833 M1123 682 1124 670 1125 657 M1335 533 1346 530 1356 525 1365 517 M1045 558 1035 554 1026 546 1016 541 M962 792 953 799 951 809 952 820 M973 564 970 570 966 574 M644 412 643 419 647 428 M1307 316 1295 309 1282 308 M1015 585 1014 589 1011 593 M1174 608 1182 613 1190 619 1197 625 M1265 607 1254 605 1243 602 1233 597 1222 597 M1343 304 1343 316 1341 328 M1187 704 1179 697 1176 688 1180 677 M965 566 968 561 971 556 M756 538 766 542 777 546 M970 490 976 492 982 491 M1120 573 1113 581 1104 585 1095 590 1087 596 M796 385 806 384 811 382 M918 616 922 613 926 610 M1018 472 1030 475 1041 472 M1250 801 1250 801 M1188 571 1190 582 1195 592 M1220 815 1228 806 1238 802 1250 801 M999 528 1003 524 1005 519 M1157 576 1162 567 1168 559 M1003 555 1000 552 996 550 M918 598 923 603 926 610 M971 556 975 558 978 559 M973 473 972 478 972 483 M1160 618 1149 618 1139 616 M692 462 678 461 665 463 M1144 792 1134 789 1125 788 1117 783 M948 560 954 559 959 557 M851 701 852 710 854 719 856 728 M769 378 778 380 787 382 796 385 M857 540 867 543 M963 472 959 472 955 471 M991 475 986 474 981 472 M989 583 995 582 1001 580 M897 744 890 734 879 728 M1022 593 1017 594 1011 593 M1041 496 1037 498 1032 498 M952 501 957 498 961 495 M1274 478 1269 489 1263 499 1259 511 M1342 355 1336 365 1331 375 1325 384 M933 525 935 520 940 519 M1122 493 1116 487 1111 482 M926 736 933 742 937 752 946 755 956 757 964 760 M1017 486 1015 481 1011 477 M1293 533 1284 529 1274 529 M674 494 672 493 663 485 653 481 M1141 429 1131 428 1121 428 M773 501 774 512 774 518 M1005 483 1004 479 1002 475 M768 553 777 546 M1001 571 997 569 993 569 M991 492 996 492 1001 492 M1004 780 1013 780 1023 781 1032 781 M942 530 938 531 933 533 M991 593 996 589 1002 587 M981 529 977 531 972 531 M1335 533 1328 540 1320 545 M1124 609 1131 613 1139 616 M1232 298 1244 292 1258 292 M692 462 694 456 694 448 M1011 470 1007 468 1003 467 M1280 706 1285 697 1285 688 1283 678 M1343 553 1332 550 1320 545 M1332 445 1324 452 1316 457 1308 463 1301 471 M980 464 980 468 981 472 M1227 650 1240 647 1250 642 1258 632 M1156 459 1147 453 1138 448 M756 489 754 476 759 463 M973 564 974 569 976 573 M1359 542 1364 550 1372 556 M743 570 743 570 M635 462 641 454 650 449 M1068 552 1078 549 1088 551 M991 475 994 469 996 463 M917 628 922 624 927 622 M1062 752 1074 751 1087 749 M1068 552 1057 556 1045 558 M945 492 946 496 M1057 664 1067 671 1076 680 M1005 483 1003 487 1001 492 M1232 298 1219 296 1214 294 M1369 724 1356 725 1344 723 M1045 639 1039 628 1028 621 M1144 642 1142 629 1139 616 M1002 438 1006 437 1010 436 M1040 371 1034 378 1030 388 1027 398 M839 816 842 805 844 795 850 786 M837 442 832 451 826 457 M995 753 1006 753 1016 754 1026 753 M851 530 850 535 848 539 M1095 696 1085 688 1076 680 M1059 470 1050 470 1041 472 M806 588 804 593 M1123 682 1121 694 1117 705 M999 507 998 511 997 515 M808 468 811 462 811 456 M1028 711 1022 719 1015 726 1008 733 M887 706 900 710 907 721 M1363 473 1352 472 1340 472 1329 475 M1048 429 1037 432 1028 435 1020 443 1014 452 M1121 428 1110 433 1102 442 M1347 650 1344 662 1342 674 M825 684 837 679 847 670 M927 546 929 551 930 556 M972 660 962 660 953 657 944 654 M987 552 992 551 996 550 M956 551 955 547 953 544 M1367 371 1356 369 1349 363 1342 355 M991 492 992 496 993 500 M1265 555 1251 555 1240 549 M985 564 989 566 993 569 M1216 462 1207 465 1198 469 1190 475 1180 478 M723 571 715 574 M1112 636 1122 640 1133 641 1144 642 M635 462 630 464 M1341 697 1347 710 1344 723 M1011 497 1013 502 1013 508 M1237 730 1230 723 M1214 713 1211 710 M1068 552 1062 545 1054 539 1046 534 M997 480 994 482 990 485 M948 537 953 538 958 536 M1002 587 1002 583 1001 580 M1241 374 1248 381 1257 386 1265 390 1274 393 1282 398 M953 512 952 506 952 501 M967 463 966 459 966 455 M1151 741 1146 750 1141 759 1138 769 M1094 661 1096 649 1095 638 1090 628 M940 565 938 559 939 553 M917 628 910 630 903 631 M1004 499 1007 497 1011 497 M1037 807 1036 794 1032 781 M1097 512 1101 504 1101 496 M920 795 913 801 906 808 902 817 M977 522 980 519 982 515 M1061 589 1060 603 1060 616 M1020 502 1017 505 1013 508 M913 609 909 604 906 599 M769 674 768 669 761 660 754 651 M980 543 985 540 990 536 M1222 597 1213 594 1205 591 1195 592 M1231 498 1238 491 1243 483 1245 473 M1363 473 1362 483 1360 492 1354 500 1348 507 M723 571 733 569 743 570 M669 440 659 444 650 449 M917 640 926 644 935 649 944 654 M1146 548 1158 551 1168 559 M952 478 955 478 959 479 M963 590 960 600 957 611 956 622 962 634 M915 529 916 534 918 539 M772 423 780 417 785 404 M1187 704 1199 709 1211 710 M1112 636 1105 643 1099 652 1094 661 M1305 729 1316 730 1325 729 1335 727 1344 723 M1265 555 1269 542 1274 529 M999 507 994 510 988 509 M1161 414 1165 402 1162 391 M1241 374 1240 385 1242 396 1244 406 M1004 659 1014 661 1024 662 1034 662 M808 468 810 474 814 479 M1357 572 1353 560 1343 553 M759 463 759 453 760 447 M1108 759 1098 754 1087 749 M1244 441 1245 429 1244 418 1244 406 M979 506 974 507 969 507 M989 517 989 513 988 509 M1366 684 1354 677 1342 674 M899 609 906 610 913 609 M1087 596 1079 591 1070 589 1061 589 M1275 652 1279 643 1284 635 1288 626 M1259 672 1247 677 1235 674 M1045 639 1045 629 1051 621 1060 616 M1012 554 1010 550 1010 545 M1244 406 1237 400 1229 395 1221 389 1213 384 M731 660 731 650 731 647 M730 646 729 640 727 636 M1282 398 1287 389 1290 379 1298 372 1304 365 1311 357 M793 506 795 498 793 490 M623 494 612 496 M1004 780 1010 770 1018 761 1026 753 M948 560 943 557 939 553 M985 499 982 502 979 506 M1160 618 1156 606 1154 594 M1025 685 1018 695 1009 702 997 706 M1168 559 1171 550 1175 541 M1013 576 1006 577 1001 580 M1241 374 1235 368 1233 366 M904 622 899 621 893 620 M1207 768 1211 779 1219 789 M1144 792 1147 795 M798 426 793 414 785 404 M1220 815 1217 802 1219 789 M1165 442 1158 449 1156 459 M793 506 783 502 773 501 M1010 436 1009 440 1009 443 M1144 642 1155 639 1166 639 1177 637 M910 543 915 549 920 552 M1003 810 1007 823 1015 832 1029 835 M756 489 751 481 M629 409 627 410 M897 566 895 555 890 548 M1341 697 1340 685 1342 674 M1305 729 1301 738 1296 748 1292 758 M988 450 985 452 982 454 M824 421 817 414 814 403 M933 533 931 536 927 538 M1335 533 1334 524 1330 515 M999 528 998 532 1001 536 M1282 398 1280 408 1277 419 1272 428 M1347 650 1359 647 1371 651" fill="none" stroke="#d2bce6" stroke-width="1.6" stroke-linejoin="round" stroke-linecap="round"/>
<defs><filter id="bl" x="-5%" y="-5%" width="110%" height="110%"><feGaussianBlur stdDeviation="1.6"/></filter></defs>
<g fill="none" stroke-linejoin="round" stroke-linecap="round">
<g filter="url(#bl)">
<polyline points="1012,104 1010,107 1013.2,110.7 1010.5,113.6 1010.9,116.9 1010,120 1013.5,121.7 1016.8,123.9 1020,126 1017.8,128.7 1014.5,128.6 1011.9,130.2 1007.8,128.4 1006,132 1004.8,134.9 1004.3,138.1 1003.2,141.1 1002,144 1003.7,146.6 1005.2,149.3 1005.9,152.3 1006.4,155.4 1008,158 1009.5,160.8 1010,164.1 1012.1,166.6 1013.3,169.6 1013.5,173 1015.6,175.5 1017.7,178.1 1018.8,181 1020,184 1022.5,186.4 1024.7,189.3 1028.5,189.8 1031.3,191.8 1034,194 1031.3,197.6 1030,202 1032.3,204.5 1033.6,207.6 1034.5,210.9 1036.5,213.7 1038.5,216.3 1039.8,219.4 1042,222 1042.9,225.7 1038.8,227.3 1039.1,230.7 1038.4,233.7 1036,236 1036.8,239.4 1037.5,242.8 1039.3,245.9 1040.8,249.1 1041,252.7 1042,256" stroke="#000" stroke-opacity="0.2" stroke-width="4"/>
<polyline points="687,387 684.7,390 681.4,392.3 680,396 677.2,397.3 675,399.5 677,403 673.9,404 670.7,404.5 668,406.5 669.9,409 671.6,411.7 674.8,412.8 677,415.6 680,417 683.5,417.5 687,417 688.7,413.4 690.7,410 694.4,411.1 697.6,413.4 698.3,416.7 699.4,420 702.8,418 706.3,420" stroke="#000" stroke-opacity="0.2" stroke-width="4"/>
<polyline points="912.4,531 913.4,534.3 915.1,537.2 917,540 920.4,540 922.8,542.5 926,543 928.6,545 930.5,547.8 934.4,548.5 936.1,551.5 937.5,554.7 939.5,557.3 942.5,559 946.3,557.3 950.2,558.6 954,559 954.9,562 956.8,564.6 956.3,568.1 958.7,570.5 962.7,570.3 966.2,572.3 970,572.8 970.1,569.5 972.8,566.9 972.6,563.5 973.5,566.8 974.6,570 976.6,573 974.8,577 977,580 979.9,581.7 983,582.8 986,584.2 989.4,584.7 992.8,585.1 995.7,586.7 999.2,586.1 1002.7,586.1 1006.1,587.8 1009.6,586.7 1012.8,587.3 1015.1,589.5 1017.6,591.3 1020,593.3 1022.5,595.2 1025.9,595.5 1028,598 1031.1,596.6 1034.2,598 1037.3,599 1040.5,598.6 1043.6,598.2 1046.7,598 1049.8,598.6 1052.7,599.9 1055.9,600.3 1058.7,602 1062.1,601.6 1065,603 1063.7,605.8 1062.7,608.7 1061.1,611.3 1060.2,614.3 1057.3,616.4 1058,620 1056.6,623.2 1056.5,626.4 1059.1,629.8 1057.6,633 1057.7,636.3 1056.6,639.5 1058.7,642.8 1056.7,646 1056.8,649.5 1057.9,652.6 1060.8,655.2 1060.8,658.8 1058.5,661 1055.7,662.4 1052.7,663.4 1050,665 1047.2,666.3 1044.1,667.2 1042.6,670.4 1040,672 1040.1,676.1 1041.5,680 1039,682.7 1035.7,684.6 1033.9,687.9 1032,691 1029.9,694 1030.7,698 1029,701.1 1028.4,704.6 1026.7,707.8 1025.1,711 1025.4,714.4 1025.8,717.8 1025.5,721.1 1024.8,724.4 1027,722 1028,718.9 1029.7,716.2 1032.5,714.3 1034,711.5 1037,713.9 1040.5,712.2 1043.8,712.4 1047,713.3 1048.8,716.1 1049.9,719.2 1049.4,722.7 1050.1,725.9 1051.7,728.8 1052.6,731.9 1051.4,735.5 1050.7,739.3 1052.9,741.6 1055.1,743.8 1058.2,745.1 1059.8,747.9 1061.8,750.4 1062.2,753.6 1063.4,756.8 1063.6,760 1063.7,763.3 1060.2,765.2 1056.4,766 1052.6,767 1053.1,770.3 1055.2,773.1 1056,776.3 1058.5,778.5 1060.3,781.4 1062.8,783.6 1065.5,785.6 1063,788.2 1064.6,792.4 1061.8,794.8 1063.1,798.2 1065.9,800.7 1067.4,804 1070.5,804.7 1073.5,805.9 1076.5,806.7 1079.6,807.3 1082.9,807.3 1086,807.8 1084.2,810.8 1085.2,814.3 1084.6,817.5 1084,820.7" stroke="#000" stroke-opacity="0.2" stroke-width="4"/>
<polyline points="931,519.5 933.7,521.6 937.2,522.1 940,524 943.9,524.1 946.6,521.7 950.1,521.1 952.5,518 955.5,516.2 958.7,515 962.5,514.3 966.4,514 970,512.6 973.1,513.3 975.8,515.1 978.9,515.9 981.8,517 983.2,520.3 986.8,521.4 988.1,524.7 991,526.5 990.8,530.4 990.3,534.3 988.8,538 991.9,537.4 994.9,537 998,538" stroke="#000" stroke-opacity="0.2" stroke-width="4"/>
<polyline points="1005,440.8 1006,444.3 1006.5,448 1008.3,451.3 1009.6,454.7 1008,458 1006.1,461.2 1005.9,465.1 1005,468.6 1006.6,471.5 1008.7,474.2 1011.3,476.5 1012,480 1009.9,482.9 1010.1,486.9 1007.3,489.4 1003.8,490.3 1000.8,492.2 997.2,492.8 994.3,495 991,496.4 992.6,499.5 992.6,503 994.3,506 994.9,509.3 995.7,512.6 995.7,516.4 995.8,520.2 995.7,524 995.1,527.9 994.8,531.9 993.4,535.7 998,538 1000.4,540.8 1004,542.7 1005.1,546.6 1007.3,549.6 1008.3,552.7 1006.4,555.9 1007.3,559 1004.3,560.5 1003.7,564.6 1000.2,565.7 998,568 998.9,571.9 1000.4,575.6 1000.4,579.7 1002.9,581.5 1006,582.2 1009.2,582.6 1011.4,585.1 1014,586.7" stroke="#000" stroke-opacity="0.2" stroke-width="4"/>
<polyline points="1024,384 1027,384.4 1030,385 1033.3,385.4 1036.8,384.7 1040,386" stroke="#000" stroke-opacity="0.2" stroke-width="4"/>
<polyline points="1142.6,404.5 1144.5,407.5 1146.6,410.2 1150,411.9 1151.9,414.8 1153.8,417.8 1156,420.5 1157,423.6 1155.7,427.1 1157.4,430.1 1158.9,433.2 1158.6,436.5 1160.9,438.8 1162.1,441.8 1162.3,445.5 1165.7,447 1167.2,449.8 1169,452.4 1169.8,455.6 1171.3,458.5 1170.7,462.2 1174,464.4 1174.2,467.8 1175.7,470.7 1177,473.7 1178.2,476.6 1181,478.5 1180.6,482.4 1183.5,484.3 1185,487 1186.6,489.7 1188.8,491.9 1190.3,494.7 1191,497.9 1193,500.3 1189.1,501.4 1185.7,503.4 1182.5,505.7 1179.7,507.8 1178,510.7 1176.5,513.6 1174.5,516.3 1171.4,517.9 1168.8,520.2 1166.4,522.8 1163.3,524.4 1161,527 1157.8,527.9 1155.6,530.4 1153.2,532.5 1150,533.6 1146.8,534.6 1145,537.6 1144,540 1146.7,542.4 1149.1,544.9 1151.7,547.4 1153.5,550.7 1156.7,552.5 1159.5,555.4 1159.3,559.6 1161,563 1163.3,565.8 1167.1,566.5 1169,570 1172.3,571.4 1175.4,573 1178.3,574.5 1180.6,576.8 1184.1,577.6 1186.3,580.1 1187.8,583.5 1191.8,583.6 1194,586 1194.7,590.7 1198,594 1196.1,596.9 1193.3,599.2 1192,602.5 1190.4,605.6 1190.5,609.5 1187.8,612.1 1185.8,615 1186.7,618.2 1188.8,621 1190,624 1190,627.5 1187,628.7 1184.6,630.8 1182.1,633 1178.9,633.7 1175.5,634 1173,636 1170.5,638.3 1167.1,639.4 1164.1,641 1162.1,644 1160,646.7 1156.7,648 1153.7,649.9 1150.1,649.9 1146.6,650.2 1143.5,651.6 1140.2,652.3 1137.1,654 1133.7,654.6 1130.3,654 1126.8,654.3 1123.3,653.8 1119.8,654.2 1116.3,654.1 1113,652.5 1109.7,652.7 1106.4,652.9 1103.2,652.6 1100,651 1096.7,651.4 1093.6,648.8 1090.3,650.1 1086.9,651.1 1083.7,650.4 1080.6,650.9 1077.9,652.2 1075.3,654 1071.9,653.7 1069.6,656.2 1067.4,659 1063.4,657.1 1060.8,658.75" stroke="#000" stroke-opacity="0.2" stroke-width="4"/>
<polyline points="1193,500.3 1196.3,500.7 1199,503.2 1202.6,502.5 1205.9,503 1208.5,506 1212,505.7 1215.5,506.5 1218.2,509 1221,511.5 1224.6,512.2 1227.8,513.7 1231,514.2 1234.1,514.8 1237.2,515.9 1240.6,515.1 1243.7,516.3 1247,516.3 1250.2,515.7 1253.6,516.6 1256.5,514 1259.7,513.7 1262.7,514.7 1264.7,517.4 1267.8,518.2 1270.2,520.2 1273,521.6 1275.5,523.3 1277.7,525.6 1281.1,526 1283.4,527.9 1286,529.6 1289.5,528.1 1292.5,530 1295.4,532.4 1298.9,531.2 1302,532.3 1305,530.7 1308.1,529.3 1311.7,529.6 1314.8,528.2 1318,527 1321,525.7 1324.2,526.8 1327.2,526 1330.4,526.1 1333.3,524.6 1336.6,526.1 1339.5,524.3 1342.8,525.3 1346.2,525.6 1349.6,525.9 1352.9,527 1356.2,527.5 1359.3,529 1362.8,528.7 1366,529.6 1369.2,529.6 1372,528" stroke="#000" stroke-opacity="0.2" stroke-width="4"/>
<polyline points="1233,368.6 1236.1,368.5 1239.2,368.5 1242.1,367.5 1245,366.2 1247.7,364.2 1251,365.3 1254.1,365.2 1257,364.1 1260.1,363.8 1262.9,362.4 1265.9,361.9 1268.9,360.9 1272.2,362.1 1275,360.6 1277.9,359.5 1281,359.3 1284.7,359.9 1287.5,362.4 1290.1,365.1 1293.6,366 1297,367.3 1299.7,365.3 1303.5,365.3 1306.5,363.7 1309.4,361.9 1312.3,360.2 1315.4,359 1318,356.6 1321,355.7 1323.6,354 1321.9,351.4 1318.9,350.2 1318.1,346.7 1315.3,345.3 1313,343.3 1314.6,340 1311.4,336.6 1313.6,333.3 1313,330 1313.5,326.9 1312.1,324 1312.5,321 1312.4,317.9 1312,315 1310.8,312 1310.8,309 1311.4,305.9 1311.3,302.9 1310,300" stroke="#000" stroke-opacity="0.2" stroke-width="4"/>
<polyline points="1243.7,338 1246.9,338.7 1250.2,339.2 1253.4,339.9 1256.6,341.2 1260.1,340.1 1263.4,340.5 1266.5,342.2 1269.9,341.8 1273,343.3 1275,346.3 1276.1,349.7 1277.5,353.1 1280.2,355.7 1281,359.3" stroke="#000" stroke-opacity="0.2" stroke-width="4"/>
<polyline points="1297,367.3 1298.5,370.3 1302.1,371.8 1302.7,375.5 1306,377.2 1307.8,380 1308.6,383.6 1311.3,385.7 1313,388.6 1314.8,391.3 1315.7,394.3 1316.2,397.5 1317.8,400.3 1318.9,403.3 1319.3,406.5 1321.8,408.9 1322.8,411.9 1323.6,415 1325.5,417.9 1325.7,421.6 1327.3,424.6 1328.6,427.7 1331.1,430.3 1332.6,433.4 1334,436.5 1335.8,439.2 1338.7,440.7 1340.3,443.6 1342.6,445.8 1345.6,447.2 1347.5,449.8 1349.2,452.4 1350.8,455 1351.1,458.4 1352.1,461.4 1355.5,463 1356.7,466.2 1357.7,469.4 1360.5,472 1359.7,475.9 1361,479 1360.6,482 1361.1,485.1 1359.3,487.9 1360.7,491.2 1359.3,494 1358.6,497 1359.4,500.1 1358,503 1358,506.2 1358.6,509.2 1361.1,511.8 1361.8,514.7 1361,518.1 1362.1,521 1363.8,523.8 1363.5,527" stroke="#000" stroke-opacity="0.2" stroke-width="4"/>
<polyline points="1345,428.5 1347.9,427.4 1351,426.6 1354,425.7 1357.2,425.6 1360.1,424.4 1363.4,424.5 1366.3,423.3 1369.2,421.9 1372,420.5" stroke="#000" stroke-opacity="0.2" stroke-width="4"/>
<polyline points="1221,575 1223.9,576.1 1226.9,576.6 1229.9,576.4 1233.1,575.1 1235.9,577.1 1239,576.7 1241.9,578.2 1245,577.3 1248,577.5 1251.5,577.5 1254.8,576.9 1258.4,577.6 1261.6,576 1265,575.4 1267.3,573.2 1270,571.5 1272.1,568.9 1274.8,567.2 1277.2,565.1 1279.6,563 1280.2,560 1282,557.2 1280.5,554 1281.3,551 1281.7,548 1282.6,544 1283.8,540 1287.1,539.7 1290,537.5 1293.4,537.1 1296.7,536.8 1300,536 1303.5,535.1 1306.7,533.3 1310,532" stroke="#000" stroke-opacity="0.2" stroke-width="4"/>
<polyline points="1113,652.5 1113.4,655.8 1113.7,659.1 1112.6,662.4 1111.8,665.7 1113,669 1116.2,669.8 1119.5,670.3 1122.7,671.1 1126.2,670.5 1129.3,671.6 1132.6,672.2 1135.8,673 1139,672.7 1142,672 1145,670.5 1148.4,671.9 1151.6,671.8 1154.5,669.8 1157.7,669.8 1160.8,669 1164,668.5 1167.2,668.3 1170,665.8 1173.6,667.6 1176.4,665.3 1179.6,665 1181.6,667.8 1184.8,669.1 1187.6,670.8 1190,673 1193.2,673.4 1196.3,674.7 1199.8,673.8 1202.9,674.7 1206.2,675.1 1209.5,674.6 1212.4,677.5 1215.7,677.5 1219,677.5 1222.1,676.9 1225.4,677.3 1228.2,675.1 1231.5,675.2 1234.9,676 1237.9,674.9 1240.6,671.8 1244,673 1245.1,669 1248.8,668.8 1252.4,668.4 1254.3,665.6 1257,663.9 1260,662.7 1262,659.9 1265,658.8 1267.7,656.3 1270.6,654 1273.1,651.2 1275.4,648.3 1274.8,645.2 1273.1,642.5 1273.1,639.3 1271.4,636.5 1271.8,633.1 1271.9,629.9 1269,627.5 1269.7,623.9 1269.9,620.2 1272.5,617.4 1274.4,614.2 1275.4,610.8 1274.6,607.2 1273,604 1270,601.5 1269,598 1271.4,594.9 1275.4,593.4 1277.5,590 1274.8,588.1 1274,584.6 1271.1,582.8 1269.6,579.9 1267.5,577.5 1265,575.4" stroke="#000" stroke-opacity="0.2" stroke-width="4"/>
<polyline points="1275,598 1278,598.8 1281,599.1 1284.1,597.8 1287,599 1290,599 1293,599.4 1295.9,600.4 1299,599.4 1302,599.2 1305,599.4 1308,600 1311,600.4 1313,597.9 1313.3,594.6 1316.1,592.6 1317,589.5 1318,586.6 1318.7,583.5 1321.3,581.3 1323,578.7 1322.7,575.1 1325.4,573 1328.6,571.7 1331.4,570 1333.3,567.1 1335.9,565.2 1339.5,564.3 1341.5,561.5 1343,558.2 1346,556.7 1349.2,556.7 1352.3,556.6 1355.5,556.6 1358.7,554.8 1361.8,557.3 1365,556.7 1364.5,553.4 1365.1,550 1364.9,546.7 1365.7,543.3 1365,540" stroke="#000" stroke-opacity="0.2" stroke-width="4"/>
<polyline points="1273,656.7 1275.9,657.5 1278.9,658.2 1281.4,660.2 1283.9,662 1287.3,661.7 1290,663 1292.2,665.6 1295.5,666.5 1298.6,667.6 1300.5,670.7 1304.3,670.8 1306.7,673 1310.1,673.4 1313.2,671.7 1316.5,672 1319.6,670.2 1322.9,670.1 1326.3,671.2 1329.5,670 1332.7,669.5 1336,669 1337.7,666 1340.3,663.7 1341.1,660.1 1343.3,657.5 1345.9,655.2 1348,652.5 1350.8,651 1353.9,650.3 1357,650 1360,649.1 1363,648.3 1366.3,648.9 1369.2,647.6 1372,646" stroke="#000" stroke-opacity="0.2" stroke-width="4"/>
<polyline points="1336,669 1337.7,672.1 1340.7,673.8 1343.4,676 1346.3,677.9 1348,680.9 1351.3,682.4 1352.5,686 1355.9,688.7 1358.8,692 1361.1,694.1 1363.4,696.3 1366.3,697.5 1369.7,697.8 1372,700" stroke="#000" stroke-opacity="0.2" stroke-width="4"/>
<polyline points="1219,677.5 1217.6,681.7 1217,686 1218.8,689.1 1218.8,692.8 1220.7,695.9 1221.2,699.4 1223,702.5 1223.6,706.4 1226.8,708.2 1228.1,711.6 1231.7,713" stroke="#000" stroke-opacity="0.2" stroke-width="4"/>
<polyline points="1229,713 1232.2,713.7 1235.4,713.9 1238.4,715.8 1241.5,716.8 1245,716 1247.7,714.6 1250.7,714.1 1253.1,711.9 1256.3,711.8 1259.4,711.7 1262,710 1265.1,709.5 1268.2,708.7 1271.2,707.6 1274.5,708.5 1277.6,708.4 1280.7,707.8 1283.8,707.1 1286.7,705.4 1290,706 1293.6,706.7 1296.7,704.6 1300,703.8 1303.5,703.8 1306.7,702.5 1310.1,701.8 1312.5,704.3 1315.5,705.2 1318.3,706.5 1320.9,708.2 1324.1,708.5 1327.5,707.7 1330,710 1331.9,712.3 1333.2,715.1 1334.9,717.6 1337.5,719.4 1339.4,721.8 1339.6,725.2 1341.4,727.7 1343.3,730 1346.1,731.7 1345.5,735.8 1350.3,736.2 1350,740 1352.6,742 1353.8,745.7 1357.4,746.6 1359.7,749 1362.9,750.4 1363.9,754.1 1367.8,754.8 1369.4,757.9 1372,760" stroke="#000" stroke-opacity="0.2" stroke-width="4"/>
<polyline points="1113,669 1115.9,672.3 1119,675.4 1122.2,676.5 1124.2,679.5 1128,679.7 1130.5,682 1133,684.2 1135.8,686 1135.7,689.3 1134.6,692.6 1133.8,695.8 1134.4,699.2 1133.8,702.5 1130.5,702.2 1127.4,701.4 1124.3,700.5 1121.4,698.9 1118.1,698.9 1115,698 1111.8,698.5 1108.8,699.7 1105.8,701.1 1102.3,700.6 1099.6,702.9 1096.2,702.9 1092.8,702.6 1090,704.6 1088.6,707.7 1085.9,709.8 1084.8,713.2 1081.7,715 1078.3,714.8 1074.8,715 1071.6,713.5 1068.3,713 1065,712 1062,712.1 1058.9,711.2 1056,712.4 1053,712.3 1050,713.1 1047,713.3" stroke="#000" stroke-opacity="0.2" stroke-width="4"/>
<polyline points="1290,745 1292.6,746.7 1295.4,748.2 1298.4,749.5 1300,752.5 1301.7,755.4 1304.8,756.6 1307.8,757.8 1310,760 1312.1,762.8 1315.7,763 1318.6,764.6 1321.6,765.8 1324.3,767.7 1326.8,769.8 1328.6,773 1332.3,773.2 1335,775 1338.2,775.4 1340.9,776.9 1343.6,778.3 1346.9,778.3 1349.2,780.9 1351.9,782.4 1354.8,783.3 1357.6,784.7 1361,784.4 1364,785.3 1365.9,788.6 1368.8,789.7 1372,790" stroke="#000" stroke-opacity="0.2" stroke-width="4"/>
</g>
<polyline points="1012,104 1010,107 1013.2,110.7 1010.5,113.6 1010.9,116.9 1010,120 1013.5,121.7 1016.8,123.9 1020,126 1017.8,128.7 1014.5,128.6 1011.9,130.2 1007.8,128.4 1006,132 1004.8,134.9 1004.3,138.1 1003.2,141.1 1002,144 1003.7,146.6 1005.2,149.3 1005.9,152.3 1006.4,155.4 1008,158 1009.5,160.8 1010,164.1 1012.1,166.6 1013.3,169.6 1013.5,173 1015.6,175.5 1017.7,178.1 1018.8,181 1020,184 1022.5,186.4 1024.7,189.3 1028.5,189.8 1031.3,191.8 1034,194 1031.3,197.6 1030,202 1032.3,204.5 1033.6,207.6 1034.5,210.9 1036.5,213.7 1038.5,216.3 1039.8,219.4 1042,222 1042.9,225.7 1038.8,227.3 1039.1,230.7 1038.4,233.7 1036,236 1036.8,239.4 1037.5,242.8 1039.3,245.9 1040.8,249.1 1041,252.7 1042,256" stroke="#5e5e5e" stroke-width="1.6"/>
<polyline points="687,387 684.7,390 681.4,392.3 680,396 677.2,397.3 675,399.5 677,403 673.9,404 670.7,404.5 668,406.5 669.9,409 671.6,411.7 674.8,412.8 677,415.6 680,417 683.5,417.5 687,417 688.7,413.4 690.7,410 694.4,411.1 697.6,413.4 698.3,416.7 699.4,420 702.8,418 706.3,420" stroke="#5e5e5e" stroke-width="1.6"/>
<polyline points="912.4,531 913.4,534.3 915.1,537.2 917,540 920.4,540 922.8,542.5 926,543 928.6,545 930.5,547.8 934.4,548.5 936.1,551.5 937.5,554.7 939.5,557.3 942.5,559 946.3,557.3 950.2,558.6 954,559 954.9,562 956.8,564.6 956.3,568.1 958.7,570.5 962.7,570.3 966.2,572.3 970,572.8 970.1,569.5 972.8,566.9 972.6,563.5 973.5,566.8 974.6,570 976.6,573 974.8,577 977,580 979.9,581.7 983,582.8 986,584.2 989.4,584.7 992.8,585.1 995.7,586.7 999.2,586.1 1002.7,586.1 1006.1,587.8 1009.6,586.7 1012.8,587.3 1015.1,589.5 1017.6,591.3 1020,593.3 1022.5,595.2 1025.9,595.5 1028,598 1031.1,596.6 1034.2,598 1037.3,599 1040.5,598.6 1043.6,598.2 1046.7,598 1049.8,598.6 1052.7,599.9 1055.9,600.3 1058.7,602 1062.1,601.6 1065,603 1063.7,605.8 1062.7,608.7 1061.1,611.3 1060.2,614.3 1057.3,616.4 1058,620 1056.6,623.2 1056.5,626.4 1059.1,629.8 1057.6,633 1057.7,636.3 1056.6,639.5 1058.7,642.8 1056.7,646 1056.8,649.5 1057.9,652.6 1060.8,655.2 1060.8,658.8 1058.5,661 1055.7,662.4 1052.7,663.4 1050,665 1047.2,666.3 1044.1,667.2 1042.6,670.4 1040,672 1040.1,676.1 1041.5,680 1039,682.7 1035.7,684.6 1033.9,687.9 1032,691 1029.9,694 1030.7,698 1029,701.1 1028.4,704.6 1026.7,707.8 1025.1,711 1025.4,714.4 1025.8,717.8 1025.5,721.1 1024.8,724.4 1027,722 1028,718.9 1029.7,716.2 1032.5,714.3 1034,711.5 1037,713.9 1040.5,712.2 1043.8,712.4 1047,713.3 1048.8,716.1 1049.9,719.2 1049.4,722.7 1050.1,725.9 1051.7,728.8 1052.6,731.9 1051.4,735.5 1050.7,739.3 1052.9,741.6 1055.1,743.8 1058.2,745.1 1059.8,747.9 1061.8,750.4 1062.2,753.6 1063.4,756.8 1063.6,760 1063.7,763.3 1060.2,765.2 1056.4,766 1052.6,767 1053.1,770.3 1055.2,773.1 1056,776.3 1058.5,778.5 1060.3,781.4 1062.8,783.6 1065.5,785.6 1063,788.2 1064.6,792.4 1061.8,794.8 1063.1,798.2 1065.9,800.7 1067.4,804 1070.5,804.7 1073.5,805.9 1076.5,806.7 1079.6,807.3 1082.9,807.3 1086,807.8 1084.2,810.8 1085.2,814.3 1084.6,817.5 1084,820.7" stroke="#5e5e5e" stroke-width="1.6"/>
<polyline points="931,519.5 933.7,521.6 937.2,522.1 940,524 943.9,524.1 946.6,521.7 950.1,521.1 952.5,518 955.5,516.2 958.7,515 962.5,514.3 966.4,514 970,512.6 973.1,513.3 975.8,515.1 978.9,515.9 981.8,517 983.2,520.3 986.8,521.4 988.1,524.7 991,526.5 990.8,530.4 990.3,534.3 988.8,538 991.9,537.4 994.9,537 998,538" stroke="#5e5e5e" stroke-width="1.6"/>
<polyline points="1005,440.8 1006,444.3 1006.5,448 1008.3,451.3 1009.6,454.7 1008,458 1006.1,461.2 1005.9,465.1 1005,468.6 1006.6,471.5 1008.7,474.2 1011.3,476.5 1012,480 1009.9,482.9 1010.1,486.9 1007.3,489.4 1003.8,490.3 1000.8,492.2 997.2,492.8 994.3,495 991,496.4 992.6,499.5 992.6,503 994.3,506 994.9,509.3 995.7,512.6 995.7,516.4 995.8,520.2 995.7,524 995.1,527.9 994.8,531.9 993.4,535.7 998,538 1000.4,540.8 1004,542.7 1005.1,546.6 1007.3,549.6 1008.3,552.7 1006.4,555.9 1007.3,559 1004.3,560.5 1003.7,564.6 1000.2,565.7 998,568 998.9,571.9 1000.4,575.6 1000.4,579.7 1002.9,581.5 1006,582.2 1009.2,582.6 1011.4,585.1 1014,586.7" stroke="#5e5e5e" stroke-width="1.6"/>
<polyline points="1024,384 1027,384.4 1030,385 1033.3,385.4 1036.8,384.7 1040,386" stroke="#5e5e5e" stroke-width="1.6"/>
<polyline points="1142.6,404.5 1144.5,407.5 1146.6,410.2 1150,411.9 1151.9,414.8 1153.8,417.8 1156,420.5 1157,423.6 1155.7,427.1 1157.4,430.1 1158.9,433.2 1158.6,436.5 1160.9,438.8 1162.1,441.8 1162.3,445.5 1165.7,447 1167.2,449.8 1169,452.4 1169.8,455.6 1171.3,458.5 1170.7,462.2 1174,464.4 1174.2,467.8 1175.7,470.7 1177,473.7 1178.2,476.6 1181,478.5 1180.6,482.4 1183.5,484.3 1185,487 1186.6,489.7 1188.8,491.9 1190.3,494.7 1191,497.9 1193,500.3 1189.1,501.4 1185.7,503.4 1182.5,505.7 1179.7,507.8 1178,510.7 1176.5,513.6 1174.5,516.3 1171.4,517.9 1168.8,520.2 1166.4,522.8 1163.3,524.4 1161,527 1157.8,527.9 1155.6,530.4 1153.2,532.5 1150,533.6 1146.8,534.6 1145,537.6 1144,540 1146.7,542.4 1149.1,544.9 1151.7,547.4 1153.5,550.7 1156.7,552.5 1159.5,555.4 1159.3,559.6 1161,563 1163.3,565.8 1167.1,566.5 1169,570 1172.3,571.4 1175.4,573 1178.3,574.5 1180.6,576.8 1184.1,577.6 1186.3,580.1 1187.8,583.5 1191.8,583.6 1194,586 1194.7,590.7 1198,594 1196.1,596.9 1193.3,599.2 1192,602.5 1190.4,605.6 1190.5,609.5 1187.8,612.1 1185.8,615 1186.7,618.2 1188.8,621 1190,624 1190,627.5 1187,628.7 1184.6,630.8 1182.1,633 1178.9,633.7 1175.5,634 1173,636 1170.5,638.3 1167.1,639.4 1164.1,641 1162.1,644 1160,646.7 1156.7,648 1153.7,649.9 1150.1,649.9 1146.6,650.2 1143.5,651.6 1140.2,652.3 1137.1,654 1133.7,654.6 1130.3,654 1126.8,654.3 1123.3,653.8 1119.8,654.2 1116.3,654.1 1113,652.5 1109.7,652.7 1106.4,652.9 1103.2,652.6 1100,651 1096.7,651.4 1093.6,648.8 1090.3,650.1 1086.9,651.1 1083.7,650.4 1080.6,650.9 1077.9,652.2 1075.3,654 1071.9,653.7 1069.6,656.2 1067.4,659 1063.4,657.1 1060.8,658.75" stroke="#5e5e5e" stroke-width="1.6"/>
<polyline points="1193,500.3 1196.3,500.7 1199,503.2 1202.6,502.5 1205.9,503 1208.5,506 1212,505.7 1215.5,506.5 1218.2,509 1221,511.5 1224.6,512.2 1227.8,513.7 1231,514.2 1234.1,514.8 1237.2,515.9 1240.6,515.1 1243.7,516.3 1247,516.3 1250.2,515.7 1253.6,516.6 1256.5,514 1259.7,513.7 1262.7,514.7 1264.7,517.4 1267.8,518.2 1270.2,520.2 1273,521.6 1275.5,523.3 1277.7,525.6 1281.1,526 1283.4,527.9 1286,529.6 1289.5,528.1 1292.5,530 1295.4,532.4 1298.9,531.2 1302,532.3 1305,530.7 1308.1,529.3 1311.7,529.6 1314.8,528.2 1318,527 1321,525.7 1324.2,526.8 1327.2,526 1330.4,526.1 1333.3,524.6 1336.6,526.1 1339.5,524.3 1342.8,525.3 1346.2,525.6 1349.6,525.9 1352.9,527 1356.2,527.5 1359.3,529 1362.8,528.7 1366,529.6 1369.2,529.6 1372,528" stroke="#5e5e5e" stroke-width="1.6"/>
<polyline points="1233,368.6 1236.1,368.5 1239.2,368.5 1242.1,367.5 1245,366.2 1247.7,364.2 1251,365.3 1254.1,365.2 1257,364.1 1260.1,363.8 1262.9,362.4 1265.9,361.9 1268.9,360.9 1272.2,362.1 1275,360.6 1277.9,359.5 1281,359.3 1284.7,359.9 1287.5,362.4 1290.1,365.1 1293.6,366 1297,367.3 1299.7,365.3 1303.5,365.3 1306.5,363.7 1309.4,361.9 1312.3,360.2 1315.4,359 1318,356.6 1321,355.7 1323.6,354 1321.9,351.4 1318.9,350.2 1318.1,346.7 1315.3,345.3 1313,343.3 1314.6,340 1311.4,336.6 1313.6,333.3 1313,330 1313.5,326.9 1312.1,324 1312.5,321 1312.4,317.9 1312,315 1310.8,312 1310.8,309 1311.4,305.9 1311.3,302.9 1310,300" stroke="#5e5e5e" stroke-width="1.6"/>
<polyline points="1243.7,338 1246.9,338.7 1250.2,339.2 1253.4,339.9 1256.6,341.2 1260.1,340.1 1263.4,340.5 1266.5,342.2 1269.9,341.8 1273,343.3 1275,346.3 1276.1,349.7 1277.5,353.1 1280.2,355.7 1281,359.3" stroke="#5e5e5e" stroke-width="1.6"/>
<polyline points="1297,367.3 1298.5,370.3 1302.1,371.8 1302.7,375.5 1306,377.2 1307.8,380 1308.6,383.6 1311.3,385.7 1313,388.6 1314.8,391.3 1315.7,394.3 1316.2,397.5 1317.8,400.3 1318.9,403.3 1319.3,406.5 1321.8,408.9 1322.8,411.9 1323.6,415 1325.5,417.9 1325.7,421.6 1327.3,424.6 1328.6,427.7 1331.1,430.3 1332.6,433.4 1334,436.5 1335.8,439.2 1338.7,440.7 1340.3,443.6 1342.6,445.8 1345.6,447.2 1347.5,449.8 1349.2,452.4 1350.8,455 1351.1,458.4 1352.1,461.4 1355.5,463 1356.7,466.2 1357.7,469.4 1360.5,472 1359.7,475.9 1361,479 1360.6,482 1361.1,485.1 1359.3,487.9 1360.7,491.2 1359.3,494 1358.6,497 1359.4,500.1 1358,503 1358,506.2 1358.6,509.2 1361.1,511.8 1361.8,514.7 1361,518.1 1362.1,521 1363.8,523.8 1363.5,527" stroke="#5e5e5e" stroke-width="1.6"/>
<polyline points="1345,428.5 1347.9,427.4 1351,426.6 1354,425.7 1357.2,425.6 1360.1,424.4 1363.4,424.5 1366.3,423.3 1369.2,421.9 1372,420.5" stroke="#5e5e5e" stroke-width="1.6"/>
<polyline points="1221,575 1223.9,576.1 1226.9,576.6 1229.9,576.4 1233.1,575.1 1235.9,577.1 1239,576.7 1241.9,578.2 1245,577.3 1248,577.5 1251.5,577.5 1254.8,576.9 1258.4,577.6 1261.6,576 1265,575.4 1267.3,573.2 1270,571.5 1272.1,568.9 1274.8,567.2 1277.2,565.1 1279.6,563 1280.2,560 1282,557.2 1280.5,554 1281.3,551 1281.7,548 1282.6,544 1283.8,540 1287.1,539.7 1290,537.5 1293.4,537.1 1296.7,536.8 1300,536 1303.5,535.1 1306.7,533.3 1310,532" stroke="#5e5e5e" stroke-width="1.6"/>
<polyline points="1113,652.5 1113.4,655.8 1113.7,659.1 1112.6,662.4 1111.8,665.7 1113,669 1116.2,669.8 1119.5,670.3 1122.7,671.1 1126.2,670.5 1129.3,671.6 1132.6,672.2 1135.8,673 1139,672.7 1142,672 1145,670.5 1148.4,671.9 1151.6,671.8 1154.5,669.8 1157.7,669.8 1160.8,669 1164,668.5 1167.2,668.3 1170,665.8 1173.6,667.6 1176.4,665.3 1179.6,665 1181.6,667.8 1184.8,669.1 1187.6,670.8 1190,673 1193.2,673.4 1196.3,674.7 1199.8,673.8 1202.9,674.7 1206.2,675.1 1209.5,674.6 1212.4,677.5 1215.7,677.5 1219,677.5 1222.1,676.9 1225.4,677.3 1228.2,675.1 1231.5,675.2 1234.9,676 1237.9,674.9 1240.6,671.8 1244,673 1245.1,669 1248.8,668.8 1252.4,668.4 1254.3,665.6 1257,663.9 1260,662.7 1262,659.9 1265,658.8 1267.7,656.3 1270.6,654 1273.1,651.2 1275.4,648.3 1274.8,645.2 1273.1,642.5 1273.1,639.3 1271.4,636.5 1271.8,633.1 1271.9,629.9 1269,627.5 1269.7,623.9 1269.9,620.2 1272.5,617.4 1274.4,614.2 1275.4,610.8 1274.6,607.2 1273,604 1270,601.5 1269,598 1271.4,594.9 1275.4,593.4 1277.5,590 1274.8,588.1 1274,584.6 1271.1,582.8 1269.6,579.9 1267.5,577.5 1265,575.4" stroke="#5e5e5e" stroke-width="1.6"/>
<polyline points="1275,598 1278,598.8 1281,599.1 1284.1,597.8 1287,599 1290,599 1293,599.4 1295.9,600.4 1299,599.4 1302,599.2 1305,599.4 1308,600 1311,600.4 1313,597.9 1313.3,594.6 1316.1,592.6 1317,589.5 1318,586.6 1318.7,583.5 1321.3,581.3 1323,578.7 1322.7,575.1 1325.4,573 1328.6,571.7 1331.4,570 1333.3,567.1 1335.9,565.2 1339.5,564.3 1341.5,561.5 1343,558.2 1346,556.7 1349.2,556.7 1352.3,556.6 1355.5,556.6 1358.7,554.8 1361.8,557.3 1365,556.7 1364.5,553.4 1365.1,550 1364.9,546.7 1365.7,543.3 1365,540" stroke="#5e5e5e" stroke-width="1.6"/>
<polyline points="1273,656.7 1275.9,657.5 1278.9,658.2 1281.4,660.2 1283.9,662 1287.3,661.7 1290,663 1292.2,665.6 1295.5,666.5 1298.6,667.6 1300.5,670.7 1304.3,670.8 1306.7,673 1310.1,673.4 1313.2,671.7 1316.5,672 1319.6,670.2 1322.9,670.1 1326.3,671.2 1329.5,670 1332.7,669.5 1336,669 1337.7,666 1340.3,663.7 1341.1,660.1 1343.3,657.5 1345.9,655.2 1348,652.5 1350.8,651 1353.9,650.3 1357,650 1360,649.1 1363,648.3 1366.3,648.9 1369.2,647.6 1372,646" stroke="#5e5e5e" stroke-width="1.6"/>
<polyline points="1336,669 1337.7,672.1 1340.7,673.8 1343.4,676 1346.3,677.9 1348,680.9 1351.3,682.4 1352.5,686 1355.9,688.7 1358.8,692 1361.1,694.1 1363.4,696.3 1366.3,697.5 1369.7,697.8 1372,700" stroke="#5e5e5e" stroke-width="1.6"/>
<polyline points="1219,677.5 1217.6,681.7 1217,686 1218.8,689.1 1218.8,692.8 1220.7,695.9 1221.2,699.4 1223,702.5 1223.6,706.4 1226.8,708.2 1228.1,711.6 1231.7,713" stroke="#5e5e5e" stroke-width="1.6"/>
<polyline points="1229,713 1232.2,713.7 1235.4,713.9 1238.4,715.8 1241.5,716.8 1245,716 1247.7,714.6 1250.7,714.1 1253.1,711.9 1256.3,711.8 1259.4,711.7 1262,710 1265.1,709.5 1268.2,708.7 1271.2,707.6 1274.5,708.5 1277.6,708.4 1280.7,707.8 1283.8,707.1 1286.7,705.4 1290,706 1293.6,706.7 1296.7,704.6 1300,703.8 1303.5,703.8 1306.7,702.5 1310.1,701.8 1312.5,704.3 1315.5,705.2 1318.3,706.5 1320.9,708.2 1324.1,708.5 1327.5,707.7 1330,710 1331.9,712.3 1333.2,715.1 1334.9,717.6 1337.5,719.4 1339.4,721.8 1339.6,725.2 1341.4,727.7 1343.3,730 1346.1,731.7 1345.5,735.8 1350.3,736.2 1350,740 1352.6,742 1353.8,745.7 1357.4,746.6 1359.7,749 1362.9,750.4 1363.9,754.1 1367.8,754.8 1369.4,757.9 1372,760" stroke="#5e5e5e" stroke-width="1.6"/>
<polyline points="1113,669 1115.9,672.3 1119,675.4 1122.2,676.5 1124.2,679.5 1128,679.7 1130.5,682 1133,684.2 1135.8,686 1135.7,689.3 1134.6,692.6 1133.8,695.8 1134.4,699.2 1133.8,702.5 1130.5,702.2 1127.4,701.4 1124.3,700.5 1121.4,698.9 1118.1,698.9 1115,698 1111.8,698.5 1108.8,699.7 1105.8,701.1 1102.3,700.6 1099.6,702.9 1096.2,702.9 1092.8,702.6 1090,704.6 1088.6,707.7 1085.9,709.8 1084.8,713.2 1081.7,715 1078.3,714.8 1074.8,715 1071.6,713.5 1068.3,713 1065,712 1062,712.1 1058.9,711.2 1056,712.4 1053,712.3 1050,713.1 1047,713.3" stroke="#5e5e5e" stroke-width="1.6"/>
<polyline points="1290,745 1292.6,746.7 1295.4,748.2 1298.4,749.5 1300,752.5 1301.7,755.4 1304.8,756.6 1307.8,757.8 1310,760 1312.1,762.8 1315.7,763 1318.6,764.6 1321.6,765.8 1324.3,767.7 1326.8,769.8 1328.6,773 1332.3,773.2 1335,775 1338.2,775.4 1340.9,776.9 1343.6,778.3 1346.9,778.3 1349.2,780.9 1351.9,782.4 1354.8,783.3 1357.6,784.7 1361,784.4 1364,785.3 1365.9,788.6 1368.8,789.7 1372,790" stroke="#5e5e5e" stroke-width="1.6"/>
</g>
<g fill="#fff" stroke="#8a8a8a" stroke-width="2">
<circle cx="1305.4" cy="685" r="14.5"/><circle cx="1270.5" cy="720" r="14.5"/><circle cx="1339.7" cy="720" r="14.5"/><circle cx="1305.4" cy="755" r="14.5"/><circle cx="1271" cy="804" r="15"/><circle cx="1339.7" cy="804" r="15"/></g>
<g fill="none" stroke="#777" stroke-width="2.6" stroke-linecap="butt" stroke-linejoin="miter">
<path d="M1299 689 L1305.4 682.5 L1311.8 689"/><path d="M1274 713.5 L1267.5 720 L1274 726.5"/><path d="M1336.2 713.5 L1342.7 720 L1336.2 726.5"/><path d="M1299 751.5 L1305.4 758 L1311.8 751.5"/>
<path d="M1271 797v14M1264 804h14" stroke-width="2.8"/><path d="M1332.7 804h14" stroke-width="3"/></g>
<text x="1306" y="831" font-size="8" font-family="Liberation Sans" fill="#222" stroke="#fff" stroke-width="2" stroke-opacity="0.6" paint-order="stroke">© 2025 TomTom</text>
</svg></div>
<div id="fieldlist" style="position:absolute;left:1124px;top:113px;width:241px;height:183px;background:#fff;border-radius:7px;box-shadow:0 0 4px rgba(0,0,0,0.35)">
<div style="position:absolute;left:13px;top:10px;font-size:14px;line-height:18px;letter-spacing:-0.45px;color:#2f8b55">Field List</div>
<svg style="position:absolute;left:225px;top:7px" width="11" height="11" viewBox="0 0 11 11"><path d="M1 1L10 10M10 1L1 10" stroke="#333" stroke-width="1.4"/></svg>
<div style="position:absolute;left:13px;top:33px;font-size:11px;line-height:14px;letter-spacing:-0.37px;color:#222">Drag fields to the Layer Pane.</div>
<svg style="position:absolute;left:24px;top:56px" width="8" height="8" viewBox="0 0 8 8"><path d="M7 0v7H0z" fill="#444"/></svg>
<div style="position:absolute;left:41px;top:53px;font-size:11px;line-height:14px;letter-spacing:-0.5px;color:#222;font-weight:bold">Table1</div>
<div style="position:absolute;left:40px;top:69px;font-size:11px;line-height:14px;letter-spacing:-0.3px;color:#444">Capacity</div>
<div style="position:absolute;left:40px;top:88px;font-size:11px;line-height:14px;letter-spacing:-0.3px;color:#444">Location</div>
<div style="position:absolute;left:40px;top:107px;font-size:11px;line-height:14px;letter-spacing:-0.3px;color:#444">Postcode</div>
<div style="position:absolute;left:40px;top:125px;font-size:11px;line-height:14px;letter-spacing:-0.3px;color:#444">Stadium</div>
<div style="position:absolute;left:40px;top:144px;font-size:11px;line-height:14px;letter-spacing:-0.3px;color:#444">Team</div>
</div>
<div id="right">
<svg style="position:absolute;left:261px;top:11px" width="11" height="11" viewBox="0 0 11 11"><path d="M1 1L10 10M10 1L1 10" stroke="#444" stroke-width="1.4"/></svg>
<div style="position:absolute;left:4px;top:13px;width:94px;height:28px;border:1px solid #ababab;background:#fff"></div>
<svg style="position:absolute;left:8px;top:17px" width="18" height="19" viewBox="0 0 18 19">
<path d="M2 9l7 3 7-3M2 12l7 3 7-3M2 15l7 3 7-3" fill="none" stroke="#555" stroke-width="1.3"/>
<path d="M6 2h7l-2 3 2 3H6z" fill="#f0b050"/><path d="M5 1v7M2 4.5h6" stroke="#5fa385" stroke-width="2"/>
</svg>
<div style="position:absolute;left:36px;top:20px;font-size:11.5px;line-height:14px;letter-spacing:-0.55px;color:#222">Add Layer</div>
<div style="position:absolute;left:4px;top:54px;width:244px;height:18px;background:#d6ede0"></div>
<svg style="position:absolute;left:21px;top:60px" width="10" height="6" viewBox="0 0 10 6"><path d="M0 0h9L4.5 5z" fill="#333"/></svg>
<div style="position:absolute;left:42px;top:55px;font-size:13px;line-height:16px;letter-spacing:-0.2px;color:#2f9a5c">Layer 1</div>
<svg style="position:absolute;left:194px;top:57px" width="56" height="14" viewBox="0 0 56 14">
<path d="M1.5 6.5 Q7.5 0 13.5 6.5 Q7.5 13 1.5 6.5z" fill="none" stroke="#555" stroke-width="1.3"/><circle cx="7.5" cy="6.5" r="2.2" fill="#555"/>
<path d="M21 11l1-3 7-7 2 2-7 7z" fill="#666"/>
<path d="M39.5 1.5l10 10M49.5 1.5l-10 10" stroke="#444" stroke-width="1.6"/>
</svg>
<svg style="position:absolute;left:26px;top:88px" width="9" height="6" viewBox="0 0 9 6"><path d="M0 0h8L4 5z" fill="#333"/></svg>
<div style="position:absolute;left:50px;top:84px;font-size:11.5px;line-height:14px;letter-spacing:-0.2px;color:#1e8a4a;font-weight:bold">Data</div>
<div style="position:absolute;left:26px;top:111px;width:28px;height:27px;background:#9fd5b7"></div>
<svg style="position:absolute;left:26px;top:111px" width="180" height="27" viewBox="0 0 180 27">
<g fill="none" stroke="#666" stroke-width="1.1"><path d="M6 6.5v14h16.5"/><rect x="9.5" y="7.5" width="4" height="12.5" fill="#fff"/><rect x="15.5" y="7.5" width="4" height="12.5" fill="#fff"/></g><rect x="10" y="8" width="3" height="5" fill="#999"/><rect x="16" y="8" width="3" height="6" fill="#999"/>
<g fill="#fff" stroke="#666" stroke-width="1.1"><path d="M45 6.5v14.5h15.5" fill="none"/><rect x="47.5" y="8" width="2.5" height="12.5"/><rect x="51" y="10.5" width="2.5" height="10"/><rect x="54.5" y="9" width="2.5" height="11.5"/><rect x="58" y="12" width="2.5" height="8.5"/></g>
<g fill="none" stroke="#666" stroke-width="1.1"><path d="M82.5 6.5v15h15.5"/></g><circle cx="88" cy="10.5" r="3" fill="#999" stroke="#666"/><circle cx="95" cy="11" r="2" fill="#fff" stroke="#666"/><circle cx="88" cy="17.5" r="1.8" fill="#fff" stroke="#666"/><circle cx="94.5" cy="17" r="2" fill="#999" stroke="#666"/>
<path d="M121 8c4-4 12-3 13 3s-3 10-8 10-8-4-8-7c0-2 1-4 3-6z" fill="#9b9b9b"/><ellipse cx="126" cy="14.5" rx="3.5" ry="3.5" fill="#6d6d6d"/>
<path d="M161 8h13l-3 11h-13z" fill="#fff" stroke="#666" stroke-width="1.2"/><path d="M165 14h7.5l-1.3 5H165z" fill="#777"/><path d="M159.5 14h5.5v5h-7z" fill="#ddd"/>
</svg>
<div style="position:absolute;left:25.5px;top:156px;font-size:11px;line-height:14px;letter-spacing:-0.3px;color:#333">Location</div>
<div style="position:absolute;left:27px;top:175px;width:221px;height:43px;background:#fcf5b3;border:1px solid #c8c8b0"></div>
<svg style="position:absolute;left:33px;top:181px" width="9" height="9" viewBox="0 0 9 9"><path d="M4.5 0.5v8M0.5 4.5h8" stroke="#555" stroke-width="2.2"/></svg>
<div style="position:absolute;left:50px;top:179px;font-size:11px;line-height:14px;letter-spacing:-0.3px;color:#333">Add Field</div>
<div style="position:absolute;left:25.5px;top:234px;font-size:11px;line-height:14px;letter-spacing:-0.3px;color:#333">Height</div>
<div style="position:absolute;left:27px;top:253px;width:221px;height:22px;border:1px solid #b4b4b4"></div>
<svg style="position:absolute;left:33px;top:259px" width="9" height="9" viewBox="0 0 9 9"><path d="M4.5 0.5v8M0.5 4.5h8" stroke="#555" stroke-width="2.2"/></svg>
<div style="position:absolute;left:50px;top:257px;font-size:11px;line-height:14px;letter-spacing:-0.3px;color:#333">Add Field</div>
<div style="position:absolute;left:25.5px;top:292px;font-size:11px;line-height:14px;letter-spacing:-0.3px;color:#333">Category</div>
<div style="position:absolute;left:27px;top:311px;width:221px;height:22px;border:1px solid #b4b4b4"></div>
<svg style="position:absolute;left:33px;top:317px" width="9" height="9" viewBox="0 0 9 9"><path d="M4.5 0.5v8M0.5 4.5h8" stroke="#555" stroke-width="2.2"/></svg>
<div style="position:absolute;left:50px;top:315px;font-size:11px;line-height:14px;letter-spacing:-0.3px;color:#333">Add Field</div>
<div style="position:absolute;left:25.5px;top:349px;font-size:11px;line-height:14px;letter-spacing:-0.3px;color:#333">Time</div>
<div style="position:absolute;left:27px;top:368px;width:221px;height:22px;border:1px solid #b4b4b4"></div>
<svg style="position:absolute;left:33px;top:374px" width="9" height="9" viewBox="0 0 9 9"><path d="M4.5 0.5v8M0.5 4.5h8" stroke="#555" stroke-width="2.2"/></svg>
<div style="position:absolute;left:50px;top:372px;font-size:11px;line-height:14px;letter-spacing:-0.3px;color:#333">Add Field</div>
<svg style="position:absolute;left:29px;top:408px" width="6" height="9" viewBox="0 0 6 9"><path d="M0 0v8l4.5-4z" fill="#333"/></svg>
<div style="position:absolute;left:48.5px;top:405px;font-size:11px;line-height:14px;letter-spacing:-0.3px;color:#333">Filters</div>
<svg style="position:absolute;left:29px;top:433px" width="6" height="9" viewBox="0 0 6 9"><path d="M0 0v8l4.5-4z" fill="#333"/></svg>
<div style="position:absolute;left:48.5px;top:431px;font-size:11px;line-height:14px;letter-spacing:-0.3px;color:#333">Layer Options</div>
</div>
<div id="status">
<div style="position:absolute;left:16px;top:7px;font-size:10.5px;letter-spacing:-0.6px;line-height:14px">READY</div>
<div style="position:absolute;left:183px;top:7px;font-size:10.5px;letter-spacing:-0.6px;line-height:14px">FINISHED</div>
<svg style="position:absolute;left:1546px;top:7px" width="15" height="15" viewBox="0 0 15 15"><rect x="0.5" y="0.5" width="13" height="13" fill="none" stroke="#fff" stroke-width="1"/><path d="M2 12.6 Q2.5 7.5 7 7.5 Q11.5 7.5 12 12.6z" fill="#fff"/></svg>
<svg style="position:absolute;left:1582px;top:7px" width="15" height="15" viewBox="0 0 15 15"><path d="M7 0.5h6.5v13h-13V7" fill="none" stroke="#fff" stroke-width="1"/><rect x="0.5" y="0.5" width="5.5" height="5.5" fill="none" stroke="#fff" stroke-width="0.8" stroke-dasharray="1.2 0.8"/><path d="M11 11L7.2 7.2M7 7v3M7 7h3" fill="none" stroke="#fff" stroke-width="1.2"/></svg>
<div style="position:absolute;left:1613px;top:0;width:28px;height:27px;background:#135f30"></div>
<svg style="position:absolute;left:1620px;top:7px" width="15" height="15" viewBox="0 0 15 15"><rect x="0.5" y="0.5" width="13" height="13" fill="none" stroke="#fff" stroke-width="1"/><path d="M7 2.5l1.5 2h-3zM7 11.5l1.5-2h-3zM2.5 7l2-1.5v3zM11.5 7l-2-1.5v3z" fill="#fff"/></svg>
</div>
<svg style="position:absolute;left:1619px;top:6px" width="16" height="16" viewBox="0 0 16 16"><rect x="0.5" y="0.5" width="14" height="14" fill="none" stroke="#fff" stroke-width="1"/><path d="M7.5 3l2 2.5h-4zM7.5 12l2-2.5h-4zM3 7.5l2.5-2v4zM12 7.5l-2.5-2v4z" fill="#fff"/></svg>
</div>
</body></html>
